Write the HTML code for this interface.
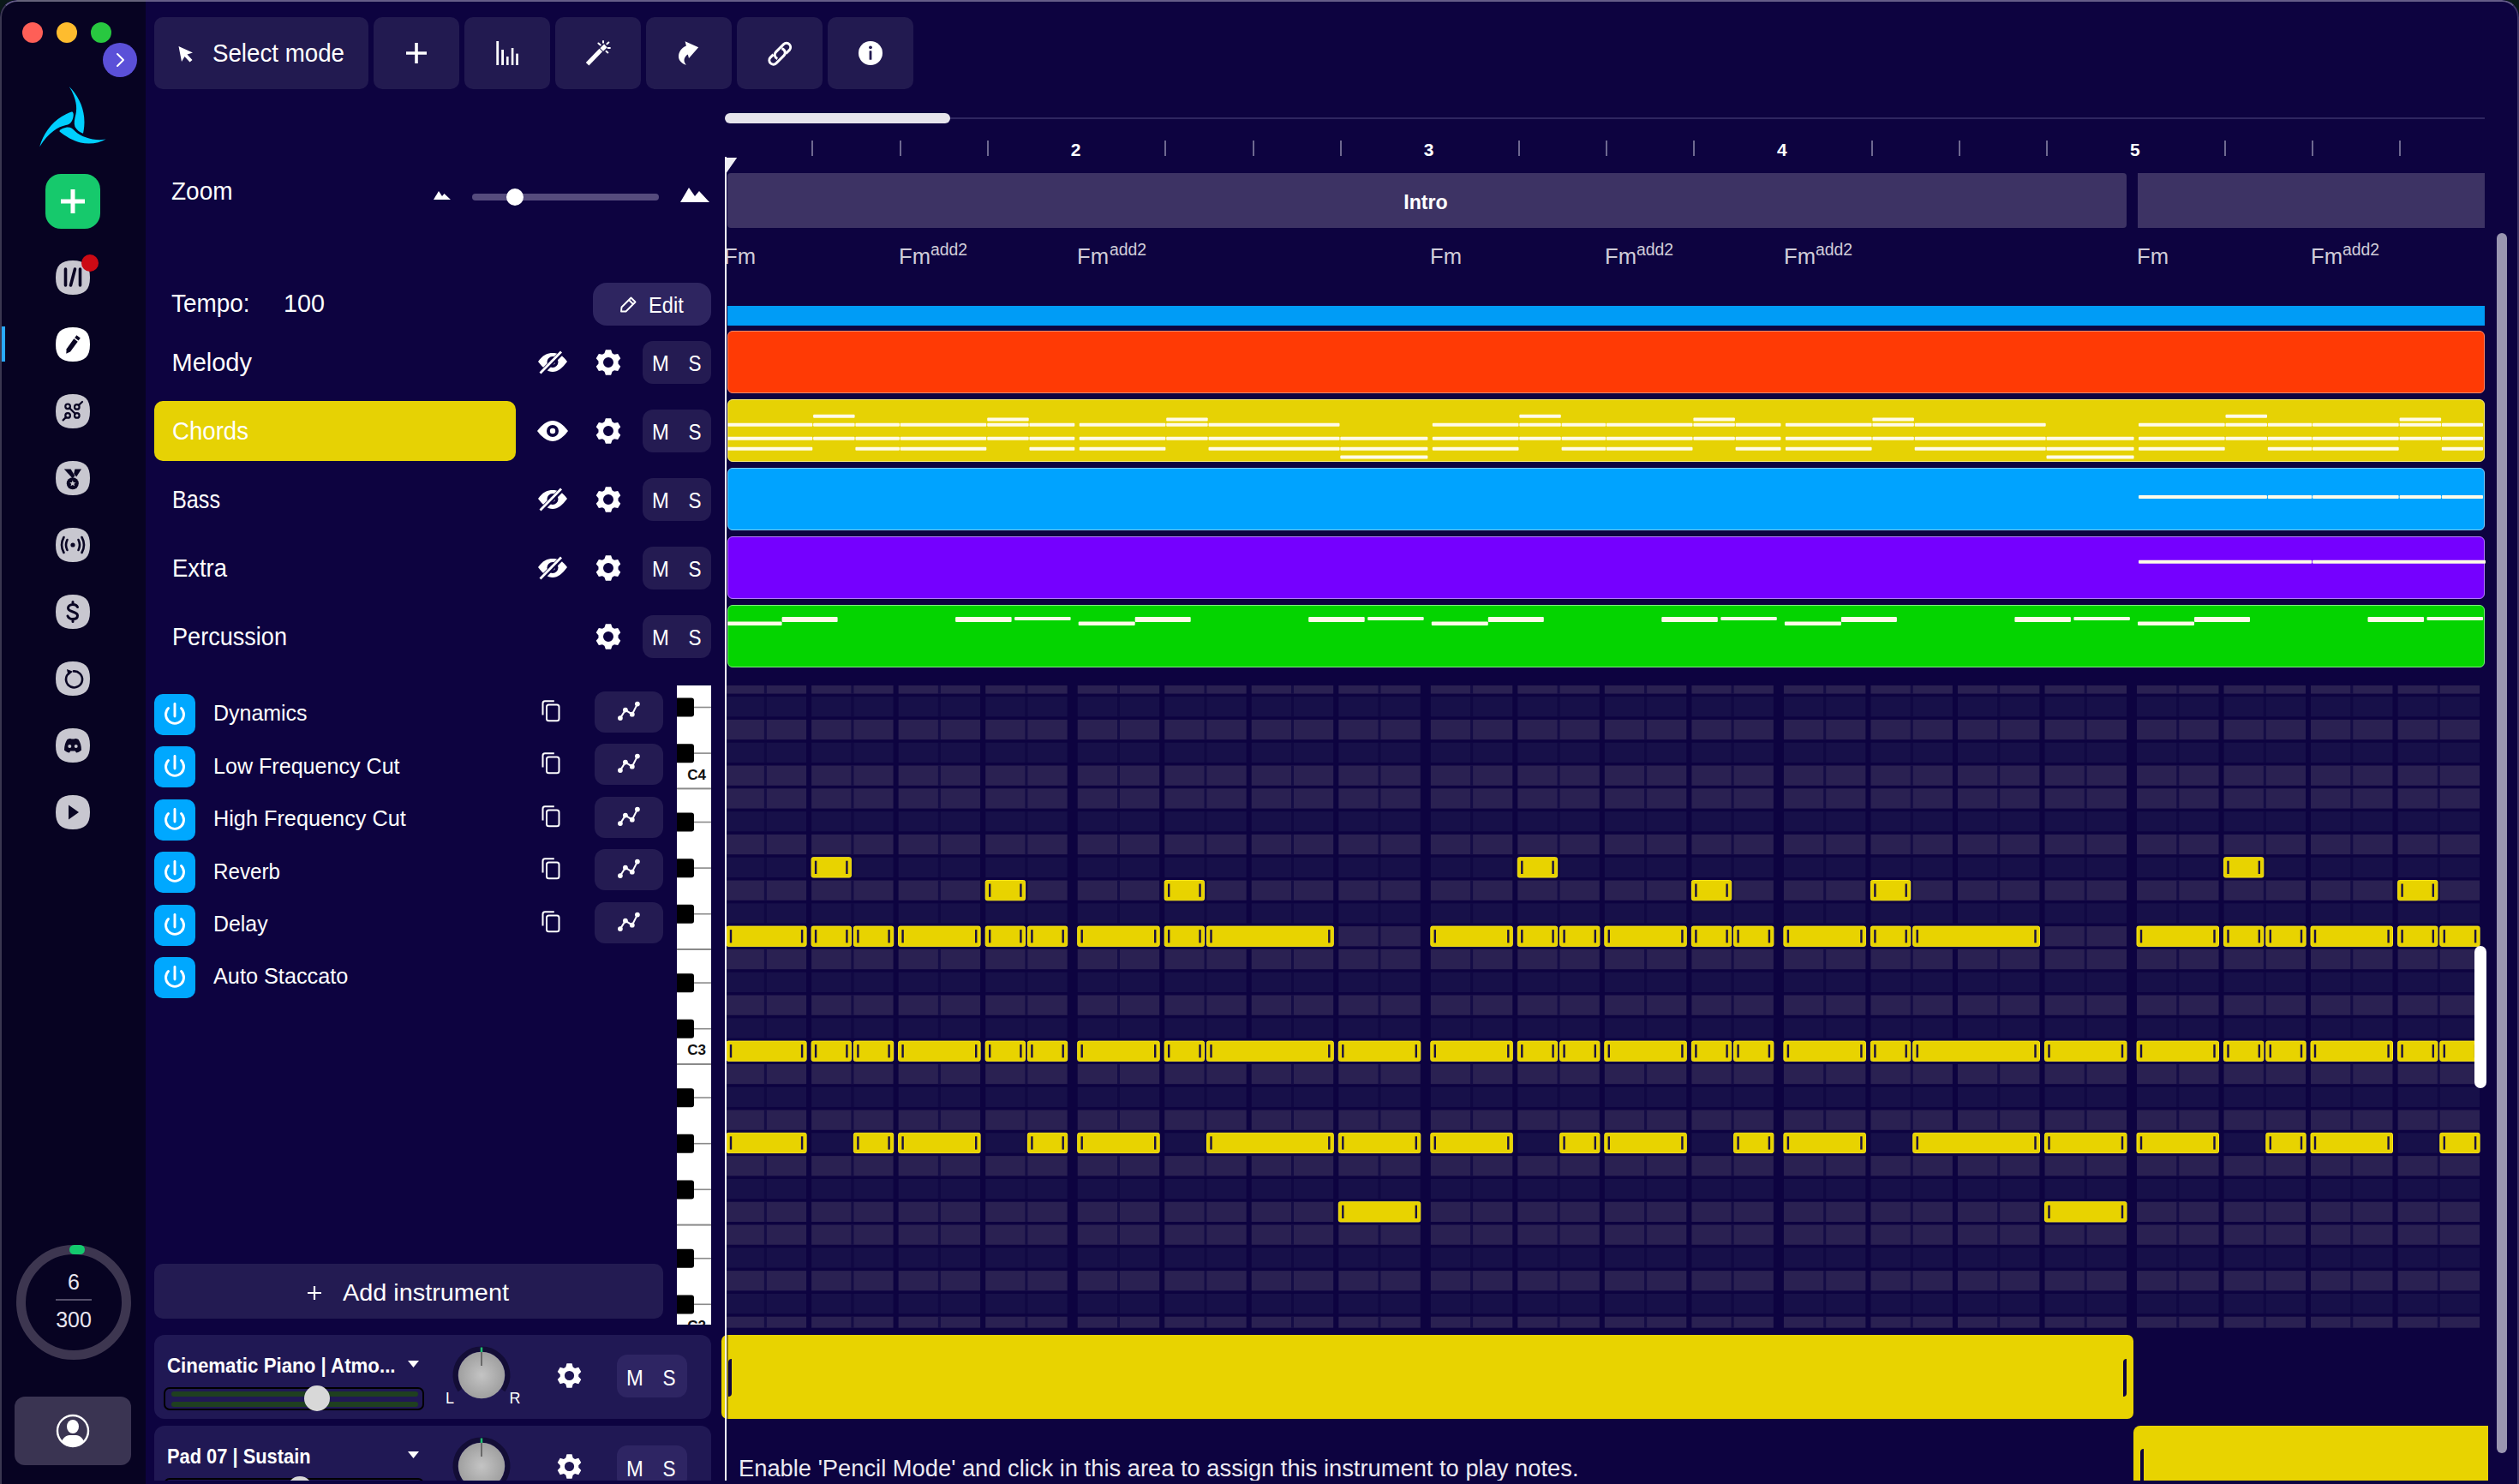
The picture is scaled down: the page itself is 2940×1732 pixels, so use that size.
<!DOCTYPE html>
<html><head><meta charset="utf-8"><style>
html,body{margin:0;padding:0;width:2940px;height:1732px;overflow:hidden;background:#0a1818;}
body{font-family:"Liberation Sans", sans-serif;position:relative;}
#win{position:absolute;left:0;top:0;width:2940px;height:1732px;background:#0d0340;border-radius:20px 20px 0 0;overflow:hidden;}
</style></head><body><div id="win">
<div style="position:absolute;left:0px;top:0px;width:170px;height:1732px;background:#070322;border-radius:0px;"></div><div style="position:absolute;left:26px;top:26px;width:24px;height:24px;background:#fe5f57;border-radius:12px;"></div><div style="position:absolute;left:66px;top:26px;width:24px;height:24px;background:#febc2e;border-radius:12px;"></div><div style="position:absolute;left:106px;top:26px;width:24px;height:24px;background:#28c840;border-radius:12px;"></div><div style="position:absolute;left:120px;top:50px;width:40px;height:40px;background:#5b50d8;border-radius:20px;"></div><svg style="position:absolute;left:120px;top:50px;overflow:visible;" width="40" height="40" viewBox="0 0 40 40"><path d="M17,13 L24,20 L17,27" fill="none" stroke="#fff" stroke-width="2" stroke-linecap="round" stroke-linejoin="round"/></svg><svg style="position:absolute;left:40px;top:95px;overflow:visible;" width="90" height="85" viewBox="0 0 90 85"><g fill="#00cfff"><path d="M40.7,6 C50,15 57,28 58.2,42 C59,50 58,56 57,60.7 C53,59.5 50,57 47.5,53 C46,49 47,44 48.5,38 C50,31 49.5,20 40.7,6 Z"/><path d="M6.3,76.2 C10,62 20,48 32,41 C37,38 42,35.5 44.5,35.5 C46.5,37 46,42 44,46 C42.5,49 40,50.4 37,51 C28,53 17,59 6.3,76.2 Z"/><path d="M83.6,67.6 C76,72 65,74 54,71.5 C45,69 36,64 29.5,58.5 C29,56.5 33,54.5 38,53.5 C42,53 45,55 48,58.5 C55,65 70,70 83.6,67.6 Z"/></g></svg><div style="position:absolute;left:53px;top:203px;width:64px;height:64px;background:#16c96c;border-radius:18px;"></div><svg style="position:absolute;left:53px;top:203px;overflow:visible;" width="64" height="64" viewBox="0 0 64 64"><path d="M32,18 V46 M18,32 H46" stroke="#fff" stroke-width="5"/></svg><svg style="position:absolute;left:65px;top:304px;overflow:visible;" width="40" height="40" viewBox="0 0 40 40"><path d="M20,0 C34,0 40,6 40,20 C40,34 34,40 20,40 C6,40 0,34 0,20 C0,6 6,0 20,0 Z" fill="#c8c7d0"/><path d="M11.5,10 V29 M28.5,10 V29 M22.5,10 L17.5,29" stroke="#0a0624" stroke-width="3.6" stroke-linecap="round"/></svg><svg style="position:absolute;left:65px;top:382px;overflow:visible;" width="40" height="40" viewBox="0 0 40 40"><path d="M20,0 C34,0 40,6 40,20 C40,34 34,40 20,40 C6,40 0,34 0,20 C0,6 6,0 20,0 Z" fill="#ffffff"/><path d="M12.3,30.8 L12.64,25.15 L21.28,13.37 L25.72,16.63 L17.08,28.41 Z" fill="#0a0624"/><path d="M22.18,12.17 L24.38,9.17 L28.82,12.43 L26.62,15.43 Z" fill="#0a0624"/></svg><svg style="position:absolute;left:65px;top:460px;overflow:visible;" width="40" height="40" viewBox="0 0 40 40"><path d="M20,0 C34,0 40,6 40,20 C40,34 34,40 20,40 C6,40 0,34 0,20 C0,6 6,0 20,0 Z" fill="#c8c7d0"/><g fill="none" stroke="#0a0624" stroke-width="2.2" stroke-linecap="round"><circle cx="14.1" cy="14.3" r="2.8"/><circle cx="24.8" cy="14.9" r="2.8"/><circle cx="14.1" cy="24.9" r="2.8"/><circle cx="24.8" cy="24.9" r="2.8"/><path d="M16.1,16.3 L22.8,22.9 M26.8,12.9 L31,9 M12.1,26.9 L8.6,30.4"/></g></svg><svg style="position:absolute;left:65px;top:538px;overflow:visible;" width="40" height="40" viewBox="0 0 40 40"><path d="M20,0 C34,0 40,6 40,20 C40,34 34,40 20,40 C6,40 0,34 0,20 C0,6 6,0 20,0 Z" fill="#c8c7d0"/><path d="M9.8,9.6 H17.6 L22.4,17.4 L19.6,20.2 Z" fill="#0a0624"/><path d="M22.4,9.6 H30 L24.2,18.6 L21.2,15 Z" fill="#0a0624"/><circle cx="19.8" cy="26.2" r="7" fill="#0a0624"/><path d="M19.8,22.6 L20.8,25.1 L23.4,25.2 L21.4,26.8 L22.1,29.3 L19.8,27.9 L17.5,29.3 L18.2,26.8 L16.2,25.2 L18.8,25.1 Z" fill="#c8c7d0"/></svg><svg style="position:absolute;left:65px;top:616px;overflow:visible;" width="40" height="40" viewBox="0 0 40 40"><path d="M20,0 C34,0 40,6 40,20 C40,34 34,40 20,40 C6,40 0,34 0,20 C0,6 6,0 20,0 Z" fill="#c8c7d0"/><g fill="none" stroke="#0a0624" stroke-width="2.6" stroke-linecap="round"><path d="M13.5,14 Q10.5,20 13.5,26 M26.5,14 Q29.5,20 26.5,26 M9.5,11 Q4.5,20 9.5,29 M30.5,11 Q35.5,20 30.5,29"/></g><circle cx="20" cy="20" r="2.6" fill="#0a0624"/></svg><svg style="position:absolute;left:65px;top:694px;overflow:visible;" width="40" height="40" viewBox="0 0 40 40"><path d="M20,0 C34,0 40,6 40,20 C40,34 34,40 20,40 C6,40 0,34 0,20 C0,6 6,0 20,0 Z" fill="#c8c7d0"/><path d="M25.5,14.5 C24.5,12 22.5,11.5 20,11.5 C16.5,11.5 14.5,13.5 14.5,15.8 C14.5,21 25.5,19 25.5,24.5 C25.5,27 23.5,28.5 20,28.5 C17,28.5 15,27.5 14,25 M20,8.5 V11.5 M20,28.5 V31.5" fill="none" stroke="#0a0624" stroke-width="3" stroke-linecap="round"/></svg><svg style="position:absolute;left:65px;top:772px;overflow:visible;" width="40" height="40" viewBox="0 0 40 40"><path d="M20,0 C34,0 40,6 40,20 C40,34 34,40 20,40 C6,40 0,34 0,20 C0,6 6,0 20,0 Z" fill="#c8c7d0"/><path d="M14.5,14.5 A9.5,9.5 0 1 0 20,11.5" fill="none" stroke="#0a0624" stroke-width="2.6"/><path d="M13,9 L20,11.8 L14.5,16.5 Z" fill="#0a0624"/></svg><svg style="position:absolute;left:65px;top:850px;overflow:visible;" width="40" height="40" viewBox="0 0 40 40"><path d="M20,0 C34,0 40,6 40,20 C40,34 34,40 20,40 C6,40 0,34 0,20 C0,6 6,0 20,0 Z" fill="#c8c7d0"/><path d="M10,25.5 C10,20 11.5,16 13.5,13 C15.5,12 17.5,11.5 18.5,12.5 L21.5,12.5 C22.5,11.5 24.5,12 26.5,13 C28.5,16 30,20 30,25.5 C28,27.5 25.5,28.5 24,28.5 L22.8,26.5 L17.2,26.5 L16,28.5 C14.5,28.5 12,27.5 10,25.5 Z" fill="#0a0624"/><circle cx="16.3" cy="21" r="2" fill="#c8c7d0"/><circle cx="23.7" cy="21" r="2" fill="#c8c7d0"/></svg><svg style="position:absolute;left:65px;top:928px;overflow:visible;" width="40" height="40" viewBox="0 0 40 40"><path d="M20,0 C34,0 40,6 40,20 C40,34 34,40 20,40 C6,40 0,34 0,20 C0,6 6,0 20,0 Z" fill="#c8c7d0"/><path d="M15,11.5 L27,20 L15,28.5 Z" fill="#0a0624"/></svg><div style="position:absolute;left:95px;top:297px;width:20px;height:20px;background:#cc0a14;border-radius:10px;"></div><div style="position:absolute;left:0px;top:381px;width:6px;height:41px;background:#2aa9ff;border-radius:0px;"></div><svg style="position:absolute;left:19px;top:1453px;overflow:visible;" width="134" height="134" viewBox="0 0 134 134"><circle cx="67" cy="67" r="61.5" fill="none" stroke="#3d3650" stroke-width="11"/><rect x="62" y="0" width="18" height="11" rx="5.5" fill="#14c96e"/></svg><div style="position:absolute;left:-414px;width:1000px;text-align:center;top:1483.84px;font-size:25px;line-height:25px;height:25px;color:#e8e6f0;font-weight:400;white-space:nowrap;">6</div><div style="position:absolute;left:65px;top:1516px;width:42px;height:2px;background:#55506a;border-radius:0px;"></div><div style="position:absolute;left:-414px;width:1000px;text-align:center;top:1528.34px;font-size:25px;line-height:25px;height:25px;color:#e8e6f0;font-weight:400;white-space:nowrap;">300</div><div style="position:absolute;left:17px;top:1630px;width:136px;height:80px;background:#3a3452;border-radius:12px;"></div><svg style="position:absolute;left:65px;top:1650px;overflow:visible;" width="40" height="40" viewBox="0 0 40 40"><circle cx="20" cy="20" r="18" fill="none" stroke="#fff" stroke-width="2.4"/><ellipse cx="20" cy="15" rx="7" ry="8" fill="#fff"/><path d="M7,32 C10,26 14,24.5 20,25 C26,24.5 30,26 33,32 C29,36.5 25,38 20,38 C15,38 11,36.5 7,32 Z" fill="#fff"/></svg><div style="position:absolute;left:180px;top:20px;width:250px;height:84px;background:#221a50;border-radius:10px;"></div><svg style="position:absolute;left:206px;top:52px;overflow:visible;" width="22" height="24" viewBox="0 0 22 24"><path d="M2.5,2 L19,9.5 L12.5,11.5 L18.5,18 L15.5,20.5 L9.5,14 L6,20 Z" fill="#fff"/></svg><div style="position:absolute;left:248px;top:48.15px;font-size:29px;line-height:29px;height:29px;color:#fff;font-weight:400;white-space:nowrap;transform:scaleX(0.9550);transform-origin:left 0;">Select mode</div><div style="position:absolute;left:436px;top:20px;width:100px;height:84px;background:#221a50;border-radius:10px;"></div><div style="position:absolute;left:542px;top:20px;width:100px;height:84px;background:#221a50;border-radius:10px;"></div><div style="position:absolute;left:648px;top:20px;width:100px;height:84px;background:#221a50;border-radius:10px;"></div><div style="position:absolute;left:754px;top:20px;width:100px;height:84px;background:#221a50;border-radius:10px;"></div><div style="position:absolute;left:860px;top:20px;width:100px;height:84px;background:#221a50;border-radius:10px;"></div><div style="position:absolute;left:966px;top:20px;width:100px;height:84px;background:#221a50;border-radius:10px;"></div><svg style="position:absolute;left:436px;top:20px;overflow:visible;" width="100" height="84" viewBox="0 0 100 84"><path d="M50,30 V54 M38,42 H62" stroke="#fff" stroke-width="3.6"/></svg><svg style="position:absolute;left:542px;top:20px;overflow:visible;" width="100" height="84" viewBox="0 0 100 84"><g fill="#fff"><rect x="37.3" y="28" width="2.8" height="28"/><rect x="43.2" y="38" width="2.8" height="18"/><rect x="49" y="46" width="2.6" height="10"/><rect x="54.8" y="36" width="2.6" height="20"/><rect x="60.2" y="42.6" width="2.7" height="13.4"/></g></svg><svg style="position:absolute;left:648px;top:20px;overflow:visible;" width="100" height="84" viewBox="0 0 100 84"><path d="M37.6,54.7 L53.3,38.5" stroke="#fff" stroke-width="5"/><path d="M54.2,38 L58.9,33.3" stroke="#fff" stroke-width="5.2"/><g stroke="#fff" stroke-width="2" stroke-linecap="round"><path d="M56,27.9 V29.8 M50.4,30.5 L52.7,32.5 M60.4,31.3 L62.4,29.5 M61.6,36 H63.9 M59.5,39.8 L61.4,41.4"/></g></svg><svg style="position:absolute;left:754px;top:20px;overflow:visible;" width="100" height="84" viewBox="0 0 100 84"><path d="M61.2,35.3 L45.6,28.3 L46.9,33.4 C41,36 38,40.5 38,46 C38,51 42.5,54.5 46.9,55.7 C43.5,52.5 43.5,47 48.8,43.6 L50,48 Z" fill="#fff"/></svg><svg style="position:absolute;left:860px;top:20px;overflow:visible;" width="100" height="84" viewBox="0 0 100 84"><g fill="none" stroke="#fff" stroke-width="3"><path d="M57.34,42.44 L61.39,38.39 A4.8,4.8 0 0 0 54.61,31.61 L45.61,40.61 A4.8,4.8 0 0 0 47.36,48.51"/><path d="M52.33,36.77 A4.8,4.8 0 0 1 54.89,44.89 L45.89,53.89 A4.8,4.8 0 0 1 39.11,47.11 L42.6,43.6"/></g></svg><svg style="position:absolute;left:966px;top:20px;overflow:visible;" width="100" height="84" viewBox="0 0 100 84"><circle cx="50" cy="42" r="14" fill="#fff"/><rect x="48.6" y="39.3" width="2.8" height="10.5" rx="0.5" fill="#221a50"/><circle cx="50" cy="35.3" r="1.9" fill="#221a50"/></svg><div style="position:absolute;left:200px;top:209.45px;font-size:29px;line-height:29px;height:29px;color:#fff;font-weight:400;white-space:nowrap;transform:scaleX(0.9660);transform-origin:left 0;">Zoom</div><svg style="position:absolute;left:506px;top:221px;overflow:visible;" width="20" height="12" viewBox="0 0 20 12"><path d="M0,12 L6,2 L10,8 L12.5,5 L20,12 Z" fill="#fff"/></svg><div style="position:absolute;left:551px;top:226px;width:218px;height:8px;background:#554b7d;border-radius:4px;"></div><div style="position:absolute;left:591px;top:220px;width:20px;height:20px;background:#fff;border-radius:10px;"></div><svg style="position:absolute;left:794px;top:217px;overflow:visible;" width="34" height="19" viewBox="0 0 34 19"><path d="M0,19 L10,2 L17,12 L22,6 L34,19 Z" fill="#fff"/></svg><div style="position:absolute;left:200px;top:339.85px;font-size:29px;line-height:29px;height:29px;color:#fff;font-weight:400;white-space:nowrap;transform:scaleX(0.9620);transform-origin:left 0;">Tempo:</div><div style="position:absolute;left:330.6px;top:339.85px;font-size:29px;line-height:29px;height:29px;color:#fff;font-weight:400;white-space:nowrap;transform:scaleX(0.9900);transform-origin:left 0;">100</div><div style="position:absolute;left:692px;top:330px;width:138px;height:50px;background:#2e2560;border-radius:16px;"></div><svg style="position:absolute;left:722px;top:345px;overflow:visible;" width="22" height="20" viewBox="0 0 22 20"><path d="M3,18.5 L3.5,13.5 L14.5,2.5 L19.5,7.5 L8.5,18.5 Z M12,5 L17,10" fill="none" stroke="#fff" stroke-width="1.9" stroke-linejoin="round"/></svg><div style="position:absolute;left:757px;top:343.84px;font-size:25px;line-height:25px;height:25px;color:#fff;font-weight:400;white-space:nowrap;transform:scaleX(0.9450);transform-origin:left 0;">Edit</div><div style="position:absolute;left:200.5px;top:409.45px;font-size:29px;line-height:29px;height:29px;color:#fff;font-weight:400;white-space:nowrap;">Melody</div><svg style="position:absolute;left:627px;top:409px;overflow:visible;" width="36" height="28" viewBox="0 0 36 28"><path d="M1,13 C7,5 12,3 18,3 C24,3 29,5 35,13 C29,21 24,25 18,25 C12,25 7,21 1,13 Z" fill="#fff"/><circle cx="18" cy="13.5" r="6.5" fill="#0d0340"/><circle cx="18" cy="13.5" r="3" fill="#fff"/><path d="M4,27 L29,2" stroke="#0d0340" stroke-width="6"/><path d="M3.5,26.5 L28,1.5" stroke="#fff" stroke-width="2.8"/></svg><svg style="position:absolute;left:695px;top:408px;overflow:visible;" width="30" height="30" viewBox="0 0 30 30"><path d="M10.49,4.31 L11.87,0.33 L18.13,0.33 L19.51,4.31 L22.00,5.75 L26.14,4.96 L29.27,10.37 L26.51,13.56 L26.51,16.44 L29.27,19.63 L26.14,25.04 L22.00,24.25 L19.51,25.69 L18.13,29.67 L11.87,29.67 L10.49,25.69 L8.00,24.25 L3.86,25.04 L0.73,19.63 L3.49,16.44 L3.49,13.56 L0.73,10.37 L3.86,4.96 L8.00,5.75 Z M21.00,15.00 A6.0,6.0 0 1 0 9.00,15.00 A6.0,6.0 0 1 0 21.00,15.00 Z" fill="#fff" fill-rule="evenodd"/></svg><div style="position:absolute;left:750px;top:398px;width:80px;height:50px;background:#241b52;border-radius:12px;"></div><div style="position:absolute;left:271px;width:1000px;text-align:center;top:412.34px;font-size:25px;line-height:25px;height:25px;color:#fff;font-weight:400;white-space:nowrap;transform:scaleX(0.9500);transform-origin:center 0;">M</div><div style="position:absolute;left:310.5px;width:1000px;text-align:center;top:412.34px;font-size:25px;line-height:25px;height:25px;color:#fff;font-weight:400;white-space:nowrap;transform:scaleX(0.9000);transform-origin:center 0;">S</div><div style="position:absolute;left:180px;top:468px;width:422px;height:70px;background:#e6d204;border-radius:10px;"></div><div style="position:absolute;left:200.5px;top:489.45px;font-size:29px;line-height:29px;height:29px;color:#fff;font-weight:400;white-space:nowrap;transform:scaleX(0.9520);transform-origin:left 0;">Chords</div><svg style="position:absolute;left:627px;top:491px;overflow:visible;" width="36" height="24" viewBox="0 0 36 24"><path d="M0,12 C6,4 12,0 18,0 C24,0 30,4 36,12 C30,20 24,24 18,24 C12,24 6,20 0,12 Z" fill="#fff"/><circle cx="18" cy="12" r="7" fill="#0d0340"/><circle cx="18" cy="12" r="3.2" fill="#fff"/></svg><svg style="position:absolute;left:695px;top:488px;overflow:visible;" width="30" height="30" viewBox="0 0 30 30"><path d="M10.49,4.31 L11.87,0.33 L18.13,0.33 L19.51,4.31 L22.00,5.75 L26.14,4.96 L29.27,10.37 L26.51,13.56 L26.51,16.44 L29.27,19.63 L26.14,25.04 L22.00,24.25 L19.51,25.69 L18.13,29.67 L11.87,29.67 L10.49,25.69 L8.00,24.25 L3.86,25.04 L0.73,19.63 L3.49,16.44 L3.49,13.56 L0.73,10.37 L3.86,4.96 L8.00,5.75 Z M21.00,15.00 A6.0,6.0 0 1 0 9.00,15.00 A6.0,6.0 0 1 0 21.00,15.00 Z" fill="#fff" fill-rule="evenodd"/></svg><div style="position:absolute;left:750px;top:478px;width:80px;height:50px;background:#241b52;border-radius:12px;"></div><div style="position:absolute;left:271px;width:1000px;text-align:center;top:492.34px;font-size:25px;line-height:25px;height:25px;color:#fff;font-weight:400;white-space:nowrap;transform:scaleX(0.9500);transform-origin:center 0;">M</div><div style="position:absolute;left:310.5px;width:1000px;text-align:center;top:492.34px;font-size:25px;line-height:25px;height:25px;color:#fff;font-weight:400;white-space:nowrap;transform:scaleX(0.9000);transform-origin:center 0;">S</div><div style="position:absolute;left:200.5px;top:569.45px;font-size:29px;line-height:29px;height:29px;color:#fff;font-weight:400;white-space:nowrap;transform:scaleX(0.8700);transform-origin:left 0;">Bass</div><svg style="position:absolute;left:627px;top:569px;overflow:visible;" width="36" height="28" viewBox="0 0 36 28"><path d="M1,13 C7,5 12,3 18,3 C24,3 29,5 35,13 C29,21 24,25 18,25 C12,25 7,21 1,13 Z" fill="#fff"/><circle cx="18" cy="13.5" r="6.5" fill="#0d0340"/><circle cx="18" cy="13.5" r="3" fill="#fff"/><path d="M4,27 L29,2" stroke="#0d0340" stroke-width="6"/><path d="M3.5,26.5 L28,1.5" stroke="#fff" stroke-width="2.8"/></svg><svg style="position:absolute;left:695px;top:568px;overflow:visible;" width="30" height="30" viewBox="0 0 30 30"><path d="M10.49,4.31 L11.87,0.33 L18.13,0.33 L19.51,4.31 L22.00,5.75 L26.14,4.96 L29.27,10.37 L26.51,13.56 L26.51,16.44 L29.27,19.63 L26.14,25.04 L22.00,24.25 L19.51,25.69 L18.13,29.67 L11.87,29.67 L10.49,25.69 L8.00,24.25 L3.86,25.04 L0.73,19.63 L3.49,16.44 L3.49,13.56 L0.73,10.37 L3.86,4.96 L8.00,5.75 Z M21.00,15.00 A6.0,6.0 0 1 0 9.00,15.00 A6.0,6.0 0 1 0 21.00,15.00 Z" fill="#fff" fill-rule="evenodd"/></svg><div style="position:absolute;left:750px;top:558px;width:80px;height:50px;background:#241b52;border-radius:12px;"></div><div style="position:absolute;left:271px;width:1000px;text-align:center;top:572.34px;font-size:25px;line-height:25px;height:25px;color:#fff;font-weight:400;white-space:nowrap;transform:scaleX(0.9500);transform-origin:center 0;">M</div><div style="position:absolute;left:310.5px;width:1000px;text-align:center;top:572.34px;font-size:25px;line-height:25px;height:25px;color:#fff;font-weight:400;white-space:nowrap;transform:scaleX(0.9000);transform-origin:center 0;">S</div><div style="position:absolute;left:200.5px;top:649.45px;font-size:29px;line-height:29px;height:29px;color:#fff;font-weight:400;white-space:nowrap;transform:scaleX(0.9450);transform-origin:left 0;">Extra</div><svg style="position:absolute;left:627px;top:649px;overflow:visible;" width="36" height="28" viewBox="0 0 36 28"><path d="M1,13 C7,5 12,3 18,3 C24,3 29,5 35,13 C29,21 24,25 18,25 C12,25 7,21 1,13 Z" fill="#fff"/><circle cx="18" cy="13.5" r="6.5" fill="#0d0340"/><circle cx="18" cy="13.5" r="3" fill="#fff"/><path d="M4,27 L29,2" stroke="#0d0340" stroke-width="6"/><path d="M3.5,26.5 L28,1.5" stroke="#fff" stroke-width="2.8"/></svg><svg style="position:absolute;left:695px;top:648px;overflow:visible;" width="30" height="30" viewBox="0 0 30 30"><path d="M10.49,4.31 L11.87,0.33 L18.13,0.33 L19.51,4.31 L22.00,5.75 L26.14,4.96 L29.27,10.37 L26.51,13.56 L26.51,16.44 L29.27,19.63 L26.14,25.04 L22.00,24.25 L19.51,25.69 L18.13,29.67 L11.87,29.67 L10.49,25.69 L8.00,24.25 L3.86,25.04 L0.73,19.63 L3.49,16.44 L3.49,13.56 L0.73,10.37 L3.86,4.96 L8.00,5.75 Z M21.00,15.00 A6.0,6.0 0 1 0 9.00,15.00 A6.0,6.0 0 1 0 21.00,15.00 Z" fill="#fff" fill-rule="evenodd"/></svg><div style="position:absolute;left:750px;top:638px;width:80px;height:50px;background:#241b52;border-radius:12px;"></div><div style="position:absolute;left:271px;width:1000px;text-align:center;top:652.34px;font-size:25px;line-height:25px;height:25px;color:#fff;font-weight:400;white-space:nowrap;transform:scaleX(0.9500);transform-origin:center 0;">M</div><div style="position:absolute;left:310.5px;width:1000px;text-align:center;top:652.34px;font-size:25px;line-height:25px;height:25px;color:#fff;font-weight:400;white-space:nowrap;transform:scaleX(0.9000);transform-origin:center 0;">S</div><div style="position:absolute;left:200.5px;top:729.45px;font-size:29px;line-height:29px;height:29px;color:#fff;font-weight:400;white-space:nowrap;transform:scaleX(0.9340);transform-origin:left 0;">Percussion</div><svg style="position:absolute;left:695px;top:728px;overflow:visible;" width="30" height="30" viewBox="0 0 30 30"><path d="M10.49,4.31 L11.87,0.33 L18.13,0.33 L19.51,4.31 L22.00,5.75 L26.14,4.96 L29.27,10.37 L26.51,13.56 L26.51,16.44 L29.27,19.63 L26.14,25.04 L22.00,24.25 L19.51,25.69 L18.13,29.67 L11.87,29.67 L10.49,25.69 L8.00,24.25 L3.86,25.04 L0.73,19.63 L3.49,16.44 L3.49,13.56 L0.73,10.37 L3.86,4.96 L8.00,5.75 Z M21.00,15.00 A6.0,6.0 0 1 0 9.00,15.00 A6.0,6.0 0 1 0 21.00,15.00 Z" fill="#fff" fill-rule="evenodd"/></svg><div style="position:absolute;left:750px;top:718px;width:80px;height:50px;background:#241b52;border-radius:12px;"></div><div style="position:absolute;left:271px;width:1000px;text-align:center;top:732.34px;font-size:25px;line-height:25px;height:25px;color:#fff;font-weight:400;white-space:nowrap;transform:scaleX(0.9500);transform-origin:center 0;">M</div><div style="position:absolute;left:310.5px;width:1000px;text-align:center;top:732.34px;font-size:25px;line-height:25px;height:25px;color:#fff;font-weight:400;white-space:nowrap;transform:scaleX(0.9000);transform-origin:center 0;">S</div><div style="position:absolute;left:180px;top:810.0px;width:48px;height:48px;background:#00a8ff;border-radius:10px;"></div><svg style="position:absolute;left:180px;top:810.0px;overflow:visible;" width="48" height="48" viewBox="0 0 48 48"><path d="M16.5,16.5 A10.5,10.5 0 1 0 31.5,16.5" fill="none" stroke="#fff" stroke-width="2.9" stroke-linecap="round"/><path d="M24,11.5 V26" stroke="#fff" stroke-width="2.9" stroke-linecap="round"/></svg><div style="position:absolute;left:249px;top:819.49px;font-size:26px;line-height:26px;height:26px;color:#fff;font-weight:400;white-space:nowrap;transform:scaleX(0.9600);transform-origin:left 0;">Dynamics</div><svg style="position:absolute;left:630px;top:816.0px;overflow:visible;" width="26" height="28" viewBox="0 0 26 28"><path d="M3.5,18.5 V5 C3.5,3.3 4.6,2.3 6,2.3 H16.8" fill="none" stroke="#fff" stroke-width="2"/><rect x="8" y="6.4" width="14.5" height="18.8" rx="2.5" fill="none" stroke="#fff" stroke-width="2"/></svg><div style="position:absolute;left:694px;top:807.0px;width:80px;height:48px;background:#241b52;border-radius:12px;"></div><svg style="position:absolute;left:694px;top:807.0px;overflow:visible;" width="80" height="48" viewBox="0 0 80 48"><path d="M29.9,31.1 L35.9,21.6 L43.8,26.7 L49.9,14.6" fill="none" stroke="#fff" stroke-width="2"/><g fill="#fff"><circle cx="29.9" cy="31.1" r="2.9"/><circle cx="35.9" cy="21.6" r="2.9"/><circle cx="43.8" cy="26.7" r="2.9"/><circle cx="49.9" cy="14.6" r="2.9"/></g></svg><div style="position:absolute;left:180px;top:871.4px;width:48px;height:48px;background:#00a8ff;border-radius:10px;"></div><svg style="position:absolute;left:180px;top:871.4px;overflow:visible;" width="48" height="48" viewBox="0 0 48 48"><path d="M16.5,16.5 A10.5,10.5 0 1 0 31.5,16.5" fill="none" stroke="#fff" stroke-width="2.9" stroke-linecap="round"/><path d="M24,11.5 V26" stroke="#fff" stroke-width="2.9" stroke-linecap="round"/></svg><div style="position:absolute;left:249px;top:880.89px;font-size:26px;line-height:26px;height:26px;color:#fff;font-weight:400;white-space:nowrap;transform:scaleX(0.9650);transform-origin:left 0;">Low Frequency Cut</div><svg style="position:absolute;left:630px;top:877.4px;overflow:visible;" width="26" height="28" viewBox="0 0 26 28"><path d="M3.5,18.5 V5 C3.5,3.3 4.6,2.3 6,2.3 H16.8" fill="none" stroke="#fff" stroke-width="2"/><rect x="8" y="6.4" width="14.5" height="18.8" rx="2.5" fill="none" stroke="#fff" stroke-width="2"/></svg><div style="position:absolute;left:694px;top:868.4px;width:80px;height:48px;background:#241b52;border-radius:12px;"></div><svg style="position:absolute;left:694px;top:868.4px;overflow:visible;" width="80" height="48" viewBox="0 0 80 48"><path d="M29.9,31.1 L35.9,21.6 L43.8,26.7 L49.9,14.6" fill="none" stroke="#fff" stroke-width="2"/><g fill="#fff"><circle cx="29.9" cy="31.1" r="2.9"/><circle cx="35.9" cy="21.6" r="2.9"/><circle cx="43.8" cy="26.7" r="2.9"/><circle cx="49.9" cy="14.6" r="2.9"/></g></svg><div style="position:absolute;left:180px;top:932.8px;width:48px;height:48px;background:#00a8ff;border-radius:10px;"></div><svg style="position:absolute;left:180px;top:932.8px;overflow:visible;" width="48" height="48" viewBox="0 0 48 48"><path d="M16.5,16.5 A10.5,10.5 0 1 0 31.5,16.5" fill="none" stroke="#fff" stroke-width="2.9" stroke-linecap="round"/><path d="M24,11.5 V26" stroke="#fff" stroke-width="2.9" stroke-linecap="round"/></svg><div style="position:absolute;left:249px;top:942.29px;font-size:26px;line-height:26px;height:26px;color:#fff;font-weight:400;white-space:nowrap;transform:scaleX(0.9720);transform-origin:left 0;">High Frequency Cut</div><svg style="position:absolute;left:630px;top:938.8px;overflow:visible;" width="26" height="28" viewBox="0 0 26 28"><path d="M3.5,18.5 V5 C3.5,3.3 4.6,2.3 6,2.3 H16.8" fill="none" stroke="#fff" stroke-width="2"/><rect x="8" y="6.4" width="14.5" height="18.8" rx="2.5" fill="none" stroke="#fff" stroke-width="2"/></svg><div style="position:absolute;left:694px;top:929.8px;width:80px;height:48px;background:#241b52;border-radius:12px;"></div><svg style="position:absolute;left:694px;top:929.8px;overflow:visible;" width="80" height="48" viewBox="0 0 80 48"><path d="M29.9,31.1 L35.9,21.6 L43.8,26.7 L49.9,14.6" fill="none" stroke="#fff" stroke-width="2"/><g fill="#fff"><circle cx="29.9" cy="31.1" r="2.9"/><circle cx="35.9" cy="21.6" r="2.9"/><circle cx="43.8" cy="26.7" r="2.9"/><circle cx="49.9" cy="14.6" r="2.9"/></g></svg><div style="position:absolute;left:180px;top:994.2px;width:48px;height:48px;background:#00a8ff;border-radius:10px;"></div><svg style="position:absolute;left:180px;top:994.2px;overflow:visible;" width="48" height="48" viewBox="0 0 48 48"><path d="M16.5,16.5 A10.5,10.5 0 1 0 31.5,16.5" fill="none" stroke="#fff" stroke-width="2.9" stroke-linecap="round"/><path d="M24,11.5 V26" stroke="#fff" stroke-width="2.9" stroke-linecap="round"/></svg><div style="position:absolute;left:249px;top:1003.69px;font-size:26px;line-height:26px;height:26px;color:#fff;font-weight:400;white-space:nowrap;transform:scaleX(0.9300);transform-origin:left 0;">Reverb</div><svg style="position:absolute;left:630px;top:1000.2px;overflow:visible;" width="26" height="28" viewBox="0 0 26 28"><path d="M3.5,18.5 V5 C3.5,3.3 4.6,2.3 6,2.3 H16.8" fill="none" stroke="#fff" stroke-width="2"/><rect x="8" y="6.4" width="14.5" height="18.8" rx="2.5" fill="none" stroke="#fff" stroke-width="2"/></svg><div style="position:absolute;left:694px;top:991.2px;width:80px;height:48px;background:#241b52;border-radius:12px;"></div><svg style="position:absolute;left:694px;top:991.2px;overflow:visible;" width="80" height="48" viewBox="0 0 80 48"><path d="M29.9,31.1 L35.9,21.6 L43.8,26.7 L49.9,14.6" fill="none" stroke="#fff" stroke-width="2"/><g fill="#fff"><circle cx="29.9" cy="31.1" r="2.9"/><circle cx="35.9" cy="21.6" r="2.9"/><circle cx="43.8" cy="26.7" r="2.9"/><circle cx="49.9" cy="14.6" r="2.9"/></g></svg><div style="position:absolute;left:180px;top:1055.6px;width:48px;height:48px;background:#00a8ff;border-radius:10px;"></div><svg style="position:absolute;left:180px;top:1055.6px;overflow:visible;" width="48" height="48" viewBox="0 0 48 48"><path d="M16.5,16.5 A10.5,10.5 0 1 0 31.5,16.5" fill="none" stroke="#fff" stroke-width="2.9" stroke-linecap="round"/><path d="M24,11.5 V26" stroke="#fff" stroke-width="2.9" stroke-linecap="round"/></svg><div style="position:absolute;left:249px;top:1065.09px;font-size:26px;line-height:26px;height:26px;color:#fff;font-weight:400;white-space:nowrap;transform:scaleX(0.9580);transform-origin:left 0;">Delay</div><svg style="position:absolute;left:630px;top:1061.6px;overflow:visible;" width="26" height="28" viewBox="0 0 26 28"><path d="M3.5,18.5 V5 C3.5,3.3 4.6,2.3 6,2.3 H16.8" fill="none" stroke="#fff" stroke-width="2"/><rect x="8" y="6.4" width="14.5" height="18.8" rx="2.5" fill="none" stroke="#fff" stroke-width="2"/></svg><div style="position:absolute;left:694px;top:1052.6px;width:80px;height:48px;background:#241b52;border-radius:12px;"></div><svg style="position:absolute;left:694px;top:1052.6px;overflow:visible;" width="80" height="48" viewBox="0 0 80 48"><path d="M29.9,31.1 L35.9,21.6 L43.8,26.7 L49.9,14.6" fill="none" stroke="#fff" stroke-width="2"/><g fill="#fff"><circle cx="29.9" cy="31.1" r="2.9"/><circle cx="35.9" cy="21.6" r="2.9"/><circle cx="43.8" cy="26.7" r="2.9"/><circle cx="49.9" cy="14.6" r="2.9"/></g></svg><div style="position:absolute;left:180px;top:1117.0px;width:48px;height:48px;background:#00a8ff;border-radius:10px;"></div><svg style="position:absolute;left:180px;top:1117.0px;overflow:visible;" width="48" height="48" viewBox="0 0 48 48"><path d="M16.5,16.5 A10.5,10.5 0 1 0 31.5,16.5" fill="none" stroke="#fff" stroke-width="2.9" stroke-linecap="round"/><path d="M24,11.5 V26" stroke="#fff" stroke-width="2.9" stroke-linecap="round"/></svg><div style="position:absolute;left:249px;top:1126.49px;font-size:26px;line-height:26px;height:26px;color:#fff;font-weight:400;white-space:nowrap;transform:scaleX(0.9720);transform-origin:left 0;">Auto Staccato</div><div style="position:absolute;left:180px;top:1475px;width:594px;height:64px;background:#231b52;border-radius:10px;"></div><svg style="position:absolute;left:355px;top:1497px;overflow:visible;" width="24" height="24" viewBox="0 0 24 24"><path d="M12,4 V20 M4,12 H20" stroke="#fff" stroke-width="2.2"/></svg><div style="position:absolute;left:400px;top:1495.30px;font-size:28px;line-height:28px;height:28px;color:#fff;font-weight:400;white-space:nowrap;transform:scaleX(1.0300);transform-origin:left 0;">Add instrument</div><div style="position:absolute;left:180px;top:1558px;width:650px;height:98px;background:#201854;border-radius:12px;"></div><div style="position:absolute;left:195px;top:1582.18px;font-size:24px;line-height:24px;height:24px;color:#fff;font-weight:700;white-space:nowrap;transform:scaleX(0.9280);transform-origin:left 0;">Cinematic Piano | Atmo...</div><svg style="position:absolute;left:476px;top:1588px;overflow:visible;" width="13" height="8" viewBox="0 0 13 8"><path d="M0,0 H13 L6.5,8 Z" fill="#fff"/></svg><div style="position:absolute;left:191px;top:1619px;width:304px;height:27px;background:transparent;border-radius:7px;box-sizing:border-box;border:2.5px solid #000;"></div><div style="position:absolute;left:200px;top:1624px;width:288px;height:6px;background:#1f3f20;border-radius:3px;"></div><div style="position:absolute;left:200px;top:1636px;width:288px;height:6px;background:#1f3f20;border-radius:3px;"></div><div style="position:absolute;left:355px;top:1617px;width:30px;height:30px;background:#d8d8d8;border-radius:15px;"></div><svg style="position:absolute;left:527px;top:1569.6px;overflow:visible;" width="70" height="70" viewBox="0 0 70 70"><path d="M10.02,52.5 A30.5,30.5 0 1 1 59.98,52.5" fill="none" stroke="#130d36" stroke-width="6"/><defs><radialGradient id="kg" cx="50%" cy="50%" r="55%"><stop offset="0" stop-color="#c4c4c4"/><stop offset="1" stop-color="#9c9c9c"/></radialGradient></defs><circle cx="35" cy="35" r="27.2" fill="url(#kg)"/><path d="M35,7 V24" stroke="#6a6a6a" stroke-width="2"/><path d="M35,2.5 V8" stroke="#1fbf70" stroke-width="2.5"/></svg><div style="position:absolute;left:25px;width:1000px;text-align:center;top:1622.76px;font-size:18px;line-height:18px;height:18px;color:#fff;font-weight:400;white-space:nowrap;">L</div><div style="position:absolute;left:101px;width:1000px;text-align:center;top:1622.76px;font-size:18px;line-height:18px;height:18px;color:#fff;font-weight:400;white-space:nowrap;">R</div><svg style="position:absolute;left:650px;top:1591px;overflow:visible;" width="29" height="29" viewBox="0 0 29 29"><path d="M10.30,4.55 L11.48,0.32 L17.52,0.32 L18.70,4.55 L21.02,5.89 L25.27,4.79 L28.29,10.03 L25.22,13.16 L25.22,15.84 L28.29,18.97 L25.27,24.21 L21.02,23.11 L18.70,24.45 L17.52,28.68 L11.48,28.68 L10.30,24.45 L7.98,23.11 L3.73,24.21 L0.71,18.97 L3.78,15.84 L3.78,13.16 L0.71,10.03 L3.73,4.79 L7.98,5.89 Z M20.10,14.50 A5.6,5.6 0 1 0 8.90,14.50 A5.6,5.6 0 1 0 20.10,14.50 Z" fill="#fff" fill-rule="evenodd"/></svg><div style="position:absolute;left:720px;top:1581px;width:82px;height:50px;background:#2e2563;border-radius:12px;"></div><div style="position:absolute;left:241px;width:1000px;text-align:center;top:1595.84px;font-size:25px;line-height:25px;height:25px;color:#fff;font-weight:400;white-space:nowrap;transform:scaleX(0.9500);transform-origin:center 0;">M</div><div style="position:absolute;left:281px;width:1000px;text-align:center;top:1595.84px;font-size:25px;line-height:25px;height:25px;color:#fff;font-weight:400;white-space:nowrap;transform:scaleX(0.9000);transform-origin:center 0;">S</div><div style="position:absolute;left:180px;top:1664px;width:650px;height:98px;background:#201854;border-radius:12px;"></div><div style="position:absolute;left:195px;top:1688.18px;font-size:24px;line-height:24px;height:24px;color:#fff;font-weight:700;white-space:nowrap;transform:scaleX(0.9100);transform-origin:left 0;">Pad 07 | Sustain</div><svg style="position:absolute;left:476px;top:1694px;overflow:visible;" width="13" height="8" viewBox="0 0 13 8"><path d="M0,0 H13 L6.5,8 Z" fill="#fff"/></svg><div style="position:absolute;left:191px;top:1725px;width:304px;height:27px;background:transparent;border-radius:7px;box-sizing:border-box;border:2.5px solid #000;"></div><div style="position:absolute;left:200px;top:1730px;width:288px;height:6px;background:#1f3f20;border-radius:3px;"></div><div style="position:absolute;left:200px;top:1742px;width:288px;height:6px;background:#1f3f20;border-radius:3px;"></div><div style="position:absolute;left:335px;top:1723px;width:30px;height:30px;background:#d8d8d8;border-radius:15px;"></div><svg style="position:absolute;left:527px;top:1675.6px;overflow:visible;" width="70" height="70" viewBox="0 0 70 70"><path d="M10.02,52.5 A30.5,30.5 0 1 1 59.98,52.5" fill="none" stroke="#130d36" stroke-width="6"/><defs><radialGradient id="kg" cx="50%" cy="50%" r="55%"><stop offset="0" stop-color="#c4c4c4"/><stop offset="1" stop-color="#9c9c9c"/></radialGradient></defs><circle cx="35" cy="35" r="27.2" fill="url(#kg)"/><path d="M35,7 V24" stroke="#6a6a6a" stroke-width="2"/><path d="M35,2.5 V8" stroke="#1fbf70" stroke-width="2.5"/></svg><div style="position:absolute;left:25px;width:1000px;text-align:center;top:1728.76px;font-size:18px;line-height:18px;height:18px;color:#fff;font-weight:400;white-space:nowrap;">L</div><div style="position:absolute;left:101px;width:1000px;text-align:center;top:1728.76px;font-size:18px;line-height:18px;height:18px;color:#fff;font-weight:400;white-space:nowrap;">R</div><svg style="position:absolute;left:650px;top:1697px;overflow:visible;" width="29" height="29" viewBox="0 0 29 29"><path d="M10.30,4.55 L11.48,0.32 L17.52,0.32 L18.70,4.55 L21.02,5.89 L25.27,4.79 L28.29,10.03 L25.22,13.16 L25.22,15.84 L28.29,18.97 L25.27,24.21 L21.02,23.11 L18.70,24.45 L17.52,28.68 L11.48,28.68 L10.30,24.45 L7.98,23.11 L3.73,24.21 L0.71,18.97 L3.78,15.84 L3.78,13.16 L0.71,10.03 L3.73,4.79 L7.98,5.89 Z M20.10,14.50 A5.6,5.6 0 1 0 8.90,14.50 A5.6,5.6 0 1 0 20.10,14.50 Z" fill="#fff" fill-rule="evenodd"/></svg><div style="position:absolute;left:720px;top:1687px;width:82px;height:50px;background:#2e2563;border-radius:12px;"></div><div style="position:absolute;left:241px;width:1000px;text-align:center;top:1701.84px;font-size:25px;line-height:25px;height:25px;color:#fff;font-weight:400;white-space:nowrap;transform:scaleX(0.9500);transform-origin:center 0;">M</div><div style="position:absolute;left:281px;width:1000px;text-align:center;top:1701.84px;font-size:25px;line-height:25px;height:25px;color:#fff;font-weight:400;white-space:nowrap;transform:scaleX(0.9000);transform-origin:center 0;">S</div><div style="position:absolute;left:170px;top:1728px;width:672px;height:4px;background:#0d0340;border-radius:0px;"></div><div style="position:absolute;left:1100px;top:137px;width:1800px;height:2px;background:#2e2660;border-radius:0px;"></div><div style="position:absolute;left:846px;top:132px;width:263px;height:12px;background:#e6e4ec;border-radius:6px;"></div><div style="position:absolute;left:947.3px;top:164px;width:2px;height:18px;background:#6e6890;border-radius:0px;"></div><div style="position:absolute;left:1049.6px;top:164px;width:2px;height:18px;background:#6e6890;border-radius:0px;"></div><div style="position:absolute;left:1151.9px;top:164px;width:2px;height:18px;background:#6e6890;border-radius:0px;"></div><div style="position:absolute;left:755.5999999999999px;width:1000px;text-align:center;top:164.22px;font-size:21px;line-height:21px;height:21px;color:#fff;font-weight:700;white-space:nowrap;">2</div><div style="position:absolute;left:1359.4px;top:164px;width:2px;height:18px;background:#6e6890;border-radius:0px;"></div><div style="position:absolute;left:1461.7px;top:164px;width:2px;height:18px;background:#6e6890;border-radius:0px;"></div><div style="position:absolute;left:1564.0px;top:164px;width:2px;height:18px;background:#6e6890;border-radius:0px;"></div><div style="position:absolute;left:1167.7px;width:1000px;text-align:center;top:164.22px;font-size:21px;line-height:21px;height:21px;color:#fff;font-weight:700;white-space:nowrap;">3</div><div style="position:absolute;left:1771.5px;top:164px;width:2px;height:18px;background:#6e6890;border-radius:0px;"></div><div style="position:absolute;left:1873.8px;top:164px;width:2px;height:18px;background:#6e6890;border-radius:0px;"></div><div style="position:absolute;left:1976.1px;top:164px;width:2px;height:18px;background:#6e6890;border-radius:0px;"></div><div style="position:absolute;left:1579.8000000000002px;width:1000px;text-align:center;top:164.22px;font-size:21px;line-height:21px;height:21px;color:#fff;font-weight:700;white-space:nowrap;">4</div><div style="position:absolute;left:2183.6px;top:164px;width:2px;height:18px;background:#6e6890;border-radius:0px;"></div><div style="position:absolute;left:2285.9px;top:164px;width:2px;height:18px;background:#6e6890;border-radius:0px;"></div><div style="position:absolute;left:2388.2px;top:164px;width:2px;height:18px;background:#6e6890;border-radius:0px;"></div><div style="position:absolute;left:1991.9px;width:1000px;text-align:center;top:164.22px;font-size:21px;line-height:21px;height:21px;color:#fff;font-weight:700;white-space:nowrap;">5</div><div style="position:absolute;left:2595.7px;top:164px;width:2px;height:18px;background:#6e6890;border-radius:0px;"></div><div style="position:absolute;left:2698.0px;top:164px;width:2px;height:18px;background:#6e6890;border-radius:0px;"></div><div style="position:absolute;left:2800.3px;top:164px;width:2px;height:18px;background:#6e6890;border-radius:0px;"></div><svg style="position:absolute;left:846px;top:184px;overflow:visible;" width="16" height="20" viewBox="0 0 16 20"><path d="M0,0 H14.2 L2,17.5 V0 Z" fill="#efeef3"/></svg><div style="position:absolute;left:849px;top:202px;width:1633px;height:64px;background:#3d3364;border-radius:4px;"></div><div style="position:absolute;left:2494.5px;top:202px;width:405.5px;height:64px;background:#3d3364;border-radius:5px 0 0 5pxpx;"></div><div style="position:absolute;left:1164px;width:1000px;text-align:center;top:223.88px;font-size:24px;line-height:24px;height:24px;color:#fff;font-weight:700;white-space:nowrap;transform:scaleX(0.9650);transform-origin:center 0;">Intro</div><div style="position:absolute;left:845.2px;top:286.49px;font-size:26px;line-height:26px;height:26px;color:#d0cdd9;font-weight:400;white-space:nowrap;transform:scaleX(0.9850);transform-origin:left 0;">Fm</div><div style="position:absolute;left:1048.7px;top:286.49px;font-size:26px;line-height:26px;height:26px;color:#d0cdd9;font-weight:400;white-space:nowrap;transform:scaleX(0.9850);transform-origin:left 0;">Fm</div><div style="position:absolute;left:1085.9px;top:280.97px;font-size:20px;line-height:20px;height:20px;color:#d0cdd9;font-weight:400;white-space:nowrap;transform:scaleX(0.9700);transform-origin:left 0;">add2</div><div style="position:absolute;left:1257.3000000000002px;top:286.49px;font-size:26px;line-height:26px;height:26px;color:#d0cdd9;font-weight:400;white-space:nowrap;transform:scaleX(0.9850);transform-origin:left 0;">Fm</div><div style="position:absolute;left:1294.5000000000002px;top:280.97px;font-size:20px;line-height:20px;height:20px;color:#d0cdd9;font-weight:400;white-space:nowrap;transform:scaleX(0.9700);transform-origin:left 0;">add2</div><div style="position:absolute;left:1669.4px;top:286.49px;font-size:26px;line-height:26px;height:26px;color:#d0cdd9;font-weight:400;white-space:nowrap;transform:scaleX(0.9850);transform-origin:left 0;">Fm</div><div style="position:absolute;left:1872.9px;top:286.49px;font-size:26px;line-height:26px;height:26px;color:#d0cdd9;font-weight:400;white-space:nowrap;transform:scaleX(0.9850);transform-origin:left 0;">Fm</div><div style="position:absolute;left:1910.1000000000001px;top:280.97px;font-size:20px;line-height:20px;height:20px;color:#d0cdd9;font-weight:400;white-space:nowrap;transform:scaleX(0.9700);transform-origin:left 0;">add2</div><div style="position:absolute;left:2081.5px;top:286.49px;font-size:26px;line-height:26px;height:26px;color:#d0cdd9;font-weight:400;white-space:nowrap;transform:scaleX(0.9850);transform-origin:left 0;">Fm</div><div style="position:absolute;left:2118.7px;top:280.97px;font-size:20px;line-height:20px;height:20px;color:#d0cdd9;font-weight:400;white-space:nowrap;transform:scaleX(0.9700);transform-origin:left 0;">add2</div><div style="position:absolute;left:2493.6000000000004px;top:286.49px;font-size:26px;line-height:26px;height:26px;color:#d0cdd9;font-weight:400;white-space:nowrap;transform:scaleX(0.9850);transform-origin:left 0;">Fm</div><div style="position:absolute;left:2697.1000000000004px;top:286.49px;font-size:26px;line-height:26px;height:26px;color:#d0cdd9;font-weight:400;white-space:nowrap;transform:scaleX(0.9850);transform-origin:left 0;">Fm</div><div style="position:absolute;left:2734.3px;top:280.97px;font-size:20px;line-height:20px;height:20px;color:#d0cdd9;font-weight:400;white-space:nowrap;transform:scaleX(0.9700);transform-origin:left 0;">add2</div><div style="position:absolute;left:849px;top:357px;width:2051px;height:23px;background:#009cf6;border-radius:0px;"></div><div style="position:absolute;left:849px;top:386px;width:2051px;height:73px;background:#ff3a05;border-radius:6px;box-sizing:border-box;border:1px solid #ff8a6a;"></div><div style="position:absolute;left:849px;top:466px;width:2051px;height:73px;background:#e6d204;border-radius:6px;box-sizing:border-box;border:1px solid #fff07a;"></div><div style="position:absolute;left:849px;top:546px;width:2051px;height:73px;background:#00a3ff;border-radius:6px;box-sizing:border-box;border:1px solid #7fd0ff;"></div><div style="position:absolute;left:849px;top:626px;width:2051px;height:73px;background:#7500ff;border-radius:6px;box-sizing:border-box;border:1px solid #b77cff;"></div><div style="position:absolute;left:849px;top:706px;width:2051px;height:73px;background:#04d400;border-radius:6px;box-sizing:border-box;border:1px solid #7cf07a;"></div><svg style="position:absolute;left:0px;top:0px;overflow:visible;" width="2940" height="800" viewBox="0 0 2940 800"><g fill="#fffbe8"><rect x="949.1" y="483.8" width="48.5" height="4" rx="1"/><rect x="1152.2" y="487.6" width="48.5" height="4" rx="1"/><rect x="849.0" y="493.7" width="99.3" height="4" rx="1"/><rect x="949.1" y="493.7" width="48.5" height="4" rx="1"/><rect x="998.4" y="493.7" width="51.5" height="4" rx="1"/><rect x="1050.6" y="493.7" width="100.7" height="4" rx="1"/><rect x="1152.2" y="493.7" width="48.5" height="4" rx="1"/><rect x="1201.4" y="493.7" width="52.9" height="4" rx="1"/><rect x="849.0" y="509.7" width="99.3" height="4" rx="1"/><rect x="949.1" y="509.7" width="48.5" height="4" rx="1"/><rect x="998.4" y="509.7" width="51.5" height="4" rx="1"/><rect x="1050.6" y="509.7" width="100.7" height="4" rx="1"/><rect x="1152.2" y="509.7" width="48.5" height="4" rx="1"/><rect x="1201.4" y="509.7" width="52.9" height="4" rx="1"/><rect x="849.0" y="521.8" width="99.3" height="4" rx="1"/><rect x="998.4" y="521.8" width="51.5" height="4" rx="1"/><rect x="1050.6" y="521.8" width="100.7" height="4" rx="1"/><rect x="1201.4" y="521.8" width="52.9" height="4" rx="1"/><rect x="1361.2" y="487.6" width="48.5" height="4" rx="1"/><rect x="1259.7" y="493.7" width="100.7" height="4" rx="1"/><rect x="1361.2" y="493.7" width="48.5" height="4" rx="1"/><rect x="1410.5" y="493.7" width="153.0" height="4" rx="1"/><rect x="1259.7" y="509.7" width="100.7" height="4" rx="1"/><rect x="1361.2" y="509.7" width="48.5" height="4" rx="1"/><rect x="1410.5" y="509.7" width="153.0" height="4" rx="1"/><rect x="1564.3" y="509.7" width="102.1" height="4" rx="1"/><rect x="1259.7" y="521.8" width="100.7" height="4" rx="1"/><rect x="1410.5" y="521.8" width="153.0" height="4" rx="1"/><rect x="1564.3" y="521.8" width="102.1" height="4" rx="1"/><rect x="1564.3" y="531.6" width="102.1" height="4" rx="1"/><rect x="1773.3" y="483.8" width="48.5" height="4" rx="1"/><rect x="1976.4" y="487.6" width="48.5" height="4" rx="1"/><rect x="1671.8" y="493.7" width="100.7" height="4" rx="1"/><rect x="1773.3" y="493.7" width="48.5" height="4" rx="1"/><rect x="1822.6" y="493.7" width="51.5" height="4" rx="1"/><rect x="1874.8" y="493.7" width="100.7" height="4" rx="1"/><rect x="1976.4" y="493.7" width="48.5" height="4" rx="1"/><rect x="2025.6" y="493.7" width="52.9" height="4" rx="1"/><rect x="1671.8" y="509.7" width="100.7" height="4" rx="1"/><rect x="1773.3" y="509.7" width="48.5" height="4" rx="1"/><rect x="1822.6" y="509.7" width="51.5" height="4" rx="1"/><rect x="1874.8" y="509.7" width="100.7" height="4" rx="1"/><rect x="1976.4" y="509.7" width="48.5" height="4" rx="1"/><rect x="2025.6" y="509.7" width="52.9" height="4" rx="1"/><rect x="1671.8" y="521.8" width="100.7" height="4" rx="1"/><rect x="1822.6" y="521.8" width="51.5" height="4" rx="1"/><rect x="1874.8" y="521.8" width="100.7" height="4" rx="1"/><rect x="2025.6" y="521.8" width="52.9" height="4" rx="1"/><rect x="2185.4" y="487.6" width="48.5" height="4" rx="1"/><rect x="2083.9" y="493.7" width="100.7" height="4" rx="1"/><rect x="2185.4" y="493.7" width="48.5" height="4" rx="1"/><rect x="2234.7" y="493.7" width="153.0" height="4" rx="1"/><rect x="2083.9" y="509.7" width="100.7" height="4" rx="1"/><rect x="2185.4" y="509.7" width="48.5" height="4" rx="1"/><rect x="2234.7" y="509.7" width="153.0" height="4" rx="1"/><rect x="2388.5" y="509.7" width="102.1" height="4" rx="1"/><rect x="2083.9" y="521.8" width="100.7" height="4" rx="1"/><rect x="2234.7" y="521.8" width="153.0" height="4" rx="1"/><rect x="2388.5" y="521.8" width="102.1" height="4" rx="1"/><rect x="2388.5" y="531.6" width="102.1" height="4" rx="1"/><rect x="2597.5" y="483.8" width="48.5" height="4" rx="1"/><rect x="2800.6" y="487.6" width="48.5" height="4" rx="1"/><rect x="2496.0" y="493.7" width="100.7" height="4" rx="1"/><rect x="2597.5" y="493.7" width="48.5" height="4" rx="1"/><rect x="2646.8" y="493.7" width="51.5" height="4" rx="1"/><rect x="2699.0" y="493.7" width="100.7" height="4" rx="1"/><rect x="2800.6" y="493.7" width="48.5" height="4" rx="1"/><rect x="2849.8" y="493.7" width="48.2" height="4" rx="1"/><rect x="2496.0" y="509.7" width="100.7" height="4" rx="1"/><rect x="2597.5" y="509.7" width="48.5" height="4" rx="1"/><rect x="2646.8" y="509.7" width="51.5" height="4" rx="1"/><rect x="2699.0" y="509.7" width="100.7" height="4" rx="1"/><rect x="2800.6" y="509.7" width="48.5" height="4" rx="1"/><rect x="2849.8" y="509.7" width="48.2" height="4" rx="1"/><rect x="2496.0" y="521.8" width="100.7" height="4" rx="1"/><rect x="2646.8" y="521.8" width="51.5" height="4" rx="1"/><rect x="2699.0" y="521.8" width="100.7" height="4" rx="1"/><rect x="2849.8" y="521.8" width="48.2" height="4" rx="1"/><rect x="2496.0" y="578.0" width="150.0" height="4" rx="1"/><rect x="2646.8" y="578.0" width="51.5" height="4" rx="1"/><rect x="2699.0" y="578.0" width="100.7" height="4" rx="1"/><rect x="2800.6" y="578.0" width="48.5" height="4" rx="1"/><rect x="2849.8" y="578.0" width="48.2" height="4" rx="1"/><rect x="2496.0" y="653.7" width="202.2" height="4" rx="1"/><rect x="2699.0" y="653.7" width="202.0" height="4" rx="1"/><rect x="849.0" y="725.5" width="63.6" height="4.5" rx="1"/><rect x="912.6" y="720.0" width="65.0" height="6" rx="1"/><rect x="1115.1" y="720.0" width="65.5" height="6" rx="1"/><rect x="1184.1" y="720.0" width="65.5" height="4" rx="1"/><rect x="1258.7" y="725.5" width="66.0" height="4.5" rx="1"/><rect x="1324.7" y="720.0" width="65.0" height="6" rx="1"/><rect x="1527.2" y="720.0" width="65.5" height="6" rx="1"/><rect x="1596.2" y="720.0" width="65.5" height="4" rx="1"/><rect x="1670.8" y="725.5" width="66.0" height="4.5" rx="1"/><rect x="1736.8" y="720.0" width="65.0" height="6" rx="1"/><rect x="1939.3" y="720.0" width="65.5" height="6" rx="1"/><rect x="2008.3" y="720.0" width="65.5" height="4" rx="1"/><rect x="2082.9" y="725.5" width="66.0" height="4.5" rx="1"/><rect x="2148.9" y="720.0" width="65.0" height="6" rx="1"/><rect x="2351.4" y="720.0" width="65.5" height="6" rx="1"/><rect x="2420.4" y="720.0" width="65.5" height="4" rx="1"/><rect x="2495.0" y="725.5" width="66.0" height="4.5" rx="1"/><rect x="2561.0" y="720.0" width="65.0" height="6" rx="1"/><rect x="2763.5" y="720.0" width="65.5" height="6" rx="1"/><rect x="2832.5" y="720.0" width="65.5" height="4" rx="1"/></g></svg><svg style="position:absolute;left:0px;top:0px;overflow:visible;" width="2940" height="1732" viewBox="0 0 2940 1732"><rect x="848.0" y="800.0" width="93.1" height="9.6" fill="#2a2152"/><rect x="891.9" y="800.0" width="3.0" height="9.6" fill="#140c46"/><rect x="947.1" y="800.0" width="95.5" height="9.6" fill="#2a2152"/><rect x="993.4" y="800.0" width="3.0" height="9.6" fill="#140c46"/><rect x="1048.6" y="800.0" width="95.5" height="9.6" fill="#2a2152"/><rect x="1094.9" y="800.0" width="3.0" height="9.6" fill="#140c46"/><rect x="1150.2" y="800.0" width="95.5" height="9.6" fill="#2a2152"/><rect x="1196.4" y="800.0" width="3.0" height="9.6" fill="#140c46"/><rect x="1257.7" y="800.0" width="95.5" height="9.6" fill="#2a2152"/><rect x="1304.0" y="800.0" width="3.0" height="9.6" fill="#140c46"/><rect x="1359.2" y="800.0" width="95.5" height="9.6" fill="#2a2152"/><rect x="1405.5" y="800.0" width="3.0" height="9.6" fill="#140c46"/><rect x="1460.7" y="800.0" width="95.5" height="9.6" fill="#2a2152"/><rect x="1507.0" y="800.0" width="3.0" height="9.6" fill="#140c46"/><rect x="1562.3" y="800.0" width="95.5" height="9.6" fill="#2a2152"/><rect x="1608.5" y="800.0" width="3.0" height="9.6" fill="#140c46"/><rect x="1669.8" y="800.0" width="95.5" height="9.6" fill="#2a2152"/><rect x="1716.1" y="800.0" width="3.0" height="9.6" fill="#140c46"/><rect x="1771.3" y="800.0" width="95.5" height="9.6" fill="#2a2152"/><rect x="1817.6" y="800.0" width="3.0" height="9.6" fill="#140c46"/><rect x="1872.8" y="800.0" width="95.5" height="9.6" fill="#2a2152"/><rect x="1919.1" y="800.0" width="3.0" height="9.6" fill="#140c46"/><rect x="1974.4" y="800.0" width="95.5" height="9.6" fill="#2a2152"/><rect x="2020.6" y="800.0" width="3.0" height="9.6" fill="#140c46"/><rect x="2081.9" y="800.0" width="95.5" height="9.6" fill="#2a2152"/><rect x="2128.2" y="800.0" width="3.0" height="9.6" fill="#140c46"/><rect x="2183.4" y="800.0" width="95.5" height="9.6" fill="#2a2152"/><rect x="2229.7" y="800.0" width="3.0" height="9.6" fill="#140c46"/><rect x="2284.9" y="800.0" width="95.5" height="9.6" fill="#2a2152"/><rect x="2331.2" y="800.0" width="3.0" height="9.6" fill="#140c46"/><rect x="2386.5" y="800.0" width="95.5" height="9.6" fill="#2a2152"/><rect x="2432.7" y="800.0" width="3.0" height="9.6" fill="#140c46"/><rect x="2494.0" y="800.0" width="95.5" height="9.6" fill="#2a2152"/><rect x="2540.3" y="800.0" width="3.0" height="9.6" fill="#140c46"/><rect x="2595.5" y="800.0" width="95.5" height="9.6" fill="#2a2152"/><rect x="2641.8" y="800.0" width="3.0" height="9.6" fill="#140c46"/><rect x="2697.0" y="800.0" width="95.5" height="9.6" fill="#2a2152"/><rect x="2743.3" y="800.0" width="3.0" height="9.6" fill="#140c46"/><rect x="2798.6" y="800.0" width="95.5" height="9.6" fill="#2a2152"/><rect x="2844.8" y="800.0" width="3.0" height="9.6" fill="#140c46"/><rect x="848.0" y="813.1" width="93.1" height="23.3" fill="#171049"/><rect x="891.9" y="813.1" width="3.0" height="23.3" fill="#100843"/><rect x="947.1" y="813.1" width="95.5" height="23.3" fill="#171049"/><rect x="993.4" y="813.1" width="3.0" height="23.3" fill="#100843"/><rect x="1048.6" y="813.1" width="95.5" height="23.3" fill="#171049"/><rect x="1094.9" y="813.1" width="3.0" height="23.3" fill="#100843"/><rect x="1150.2" y="813.1" width="95.5" height="23.3" fill="#171049"/><rect x="1196.4" y="813.1" width="3.0" height="23.3" fill="#100843"/><rect x="1257.7" y="813.1" width="95.5" height="23.3" fill="#171049"/><rect x="1304.0" y="813.1" width="3.0" height="23.3" fill="#100843"/><rect x="1359.2" y="813.1" width="95.5" height="23.3" fill="#171049"/><rect x="1405.5" y="813.1" width="3.0" height="23.3" fill="#100843"/><rect x="1460.7" y="813.1" width="95.5" height="23.3" fill="#171049"/><rect x="1507.0" y="813.1" width="3.0" height="23.3" fill="#100843"/><rect x="1562.3" y="813.1" width="95.5" height="23.3" fill="#171049"/><rect x="1608.5" y="813.1" width="3.0" height="23.3" fill="#100843"/><rect x="1669.8" y="813.1" width="95.5" height="23.3" fill="#171049"/><rect x="1716.1" y="813.1" width="3.0" height="23.3" fill="#100843"/><rect x="1771.3" y="813.1" width="95.5" height="23.3" fill="#171049"/><rect x="1817.6" y="813.1" width="3.0" height="23.3" fill="#100843"/><rect x="1872.8" y="813.1" width="95.5" height="23.3" fill="#171049"/><rect x="1919.1" y="813.1" width="3.0" height="23.3" fill="#100843"/><rect x="1974.4" y="813.1" width="95.5" height="23.3" fill="#171049"/><rect x="2020.6" y="813.1" width="3.0" height="23.3" fill="#100843"/><rect x="2081.9" y="813.1" width="95.5" height="23.3" fill="#171049"/><rect x="2128.2" y="813.1" width="3.0" height="23.3" fill="#100843"/><rect x="2183.4" y="813.1" width="95.5" height="23.3" fill="#171049"/><rect x="2229.7" y="813.1" width="3.0" height="23.3" fill="#100843"/><rect x="2284.9" y="813.1" width="95.5" height="23.3" fill="#171049"/><rect x="2331.2" y="813.1" width="3.0" height="23.3" fill="#100843"/><rect x="2386.5" y="813.1" width="95.5" height="23.3" fill="#171049"/><rect x="2432.7" y="813.1" width="3.0" height="23.3" fill="#100843"/><rect x="2494.0" y="813.1" width="95.5" height="23.3" fill="#171049"/><rect x="2540.3" y="813.1" width="3.0" height="23.3" fill="#100843"/><rect x="2595.5" y="813.1" width="95.5" height="23.3" fill="#171049"/><rect x="2641.8" y="813.1" width="3.0" height="23.3" fill="#100843"/><rect x="2697.0" y="813.1" width="95.5" height="23.3" fill="#171049"/><rect x="2743.3" y="813.1" width="3.0" height="23.3" fill="#100843"/><rect x="2798.6" y="813.1" width="95.5" height="23.3" fill="#171049"/><rect x="2844.8" y="813.1" width="3.0" height="23.3" fill="#100843"/><rect x="848.0" y="839.9" width="93.1" height="23.3" fill="#2a2152"/><rect x="891.9" y="839.9" width="3.0" height="23.3" fill="#140c46"/><rect x="947.1" y="839.9" width="95.5" height="23.3" fill="#2a2152"/><rect x="993.4" y="839.9" width="3.0" height="23.3" fill="#140c46"/><rect x="1048.6" y="839.9" width="95.5" height="23.3" fill="#2a2152"/><rect x="1094.9" y="839.9" width="3.0" height="23.3" fill="#140c46"/><rect x="1150.2" y="839.9" width="95.5" height="23.3" fill="#2a2152"/><rect x="1196.4" y="839.9" width="3.0" height="23.3" fill="#140c46"/><rect x="1257.7" y="839.9" width="95.5" height="23.3" fill="#2a2152"/><rect x="1304.0" y="839.9" width="3.0" height="23.3" fill="#140c46"/><rect x="1359.2" y="839.9" width="95.5" height="23.3" fill="#2a2152"/><rect x="1405.5" y="839.9" width="3.0" height="23.3" fill="#140c46"/><rect x="1460.7" y="839.9" width="95.5" height="23.3" fill="#2a2152"/><rect x="1507.0" y="839.9" width="3.0" height="23.3" fill="#140c46"/><rect x="1562.3" y="839.9" width="95.5" height="23.3" fill="#2a2152"/><rect x="1608.5" y="839.9" width="3.0" height="23.3" fill="#140c46"/><rect x="1669.8" y="839.9" width="95.5" height="23.3" fill="#2a2152"/><rect x="1716.1" y="839.9" width="3.0" height="23.3" fill="#140c46"/><rect x="1771.3" y="839.9" width="95.5" height="23.3" fill="#2a2152"/><rect x="1817.6" y="839.9" width="3.0" height="23.3" fill="#140c46"/><rect x="1872.8" y="839.9" width="95.5" height="23.3" fill="#2a2152"/><rect x="1919.1" y="839.9" width="3.0" height="23.3" fill="#140c46"/><rect x="1974.4" y="839.9" width="95.5" height="23.3" fill="#2a2152"/><rect x="2020.6" y="839.9" width="3.0" height="23.3" fill="#140c46"/><rect x="2081.9" y="839.9" width="95.5" height="23.3" fill="#2a2152"/><rect x="2128.2" y="839.9" width="3.0" height="23.3" fill="#140c46"/><rect x="2183.4" y="839.9" width="95.5" height="23.3" fill="#2a2152"/><rect x="2229.7" y="839.9" width="3.0" height="23.3" fill="#140c46"/><rect x="2284.9" y="839.9" width="95.5" height="23.3" fill="#2a2152"/><rect x="2331.2" y="839.9" width="3.0" height="23.3" fill="#140c46"/><rect x="2386.5" y="839.9" width="95.5" height="23.3" fill="#2a2152"/><rect x="2432.7" y="839.9" width="3.0" height="23.3" fill="#140c46"/><rect x="2494.0" y="839.9" width="95.5" height="23.3" fill="#2a2152"/><rect x="2540.3" y="839.9" width="3.0" height="23.3" fill="#140c46"/><rect x="2595.5" y="839.9" width="95.5" height="23.3" fill="#2a2152"/><rect x="2641.8" y="839.9" width="3.0" height="23.3" fill="#140c46"/><rect x="2697.0" y="839.9" width="95.5" height="23.3" fill="#2a2152"/><rect x="2743.3" y="839.9" width="3.0" height="23.3" fill="#140c46"/><rect x="2798.6" y="839.9" width="95.5" height="23.3" fill="#2a2152"/><rect x="2844.8" y="839.9" width="3.0" height="23.3" fill="#140c46"/><rect x="848.0" y="866.7" width="93.1" height="23.3" fill="#171049"/><rect x="891.9" y="866.7" width="3.0" height="23.3" fill="#100843"/><rect x="947.1" y="866.7" width="95.5" height="23.3" fill="#171049"/><rect x="993.4" y="866.7" width="3.0" height="23.3" fill="#100843"/><rect x="1048.6" y="866.7" width="95.5" height="23.3" fill="#171049"/><rect x="1094.9" y="866.7" width="3.0" height="23.3" fill="#100843"/><rect x="1150.2" y="866.7" width="95.5" height="23.3" fill="#171049"/><rect x="1196.4" y="866.7" width="3.0" height="23.3" fill="#100843"/><rect x="1257.7" y="866.7" width="95.5" height="23.3" fill="#171049"/><rect x="1304.0" y="866.7" width="3.0" height="23.3" fill="#100843"/><rect x="1359.2" y="866.7" width="95.5" height="23.3" fill="#171049"/><rect x="1405.5" y="866.7" width="3.0" height="23.3" fill="#100843"/><rect x="1460.7" y="866.7" width="95.5" height="23.3" fill="#171049"/><rect x="1507.0" y="866.7" width="3.0" height="23.3" fill="#100843"/><rect x="1562.3" y="866.7" width="95.5" height="23.3" fill="#171049"/><rect x="1608.5" y="866.7" width="3.0" height="23.3" fill="#100843"/><rect x="1669.8" y="866.7" width="95.5" height="23.3" fill="#171049"/><rect x="1716.1" y="866.7" width="3.0" height="23.3" fill="#100843"/><rect x="1771.3" y="866.7" width="95.5" height="23.3" fill="#171049"/><rect x="1817.6" y="866.7" width="3.0" height="23.3" fill="#100843"/><rect x="1872.8" y="866.7" width="95.5" height="23.3" fill="#171049"/><rect x="1919.1" y="866.7" width="3.0" height="23.3" fill="#100843"/><rect x="1974.4" y="866.7" width="95.5" height="23.3" fill="#171049"/><rect x="2020.6" y="866.7" width="3.0" height="23.3" fill="#100843"/><rect x="2081.9" y="866.7" width="95.5" height="23.3" fill="#171049"/><rect x="2128.2" y="866.7" width="3.0" height="23.3" fill="#100843"/><rect x="2183.4" y="866.7" width="95.5" height="23.3" fill="#171049"/><rect x="2229.7" y="866.7" width="3.0" height="23.3" fill="#100843"/><rect x="2284.9" y="866.7" width="95.5" height="23.3" fill="#171049"/><rect x="2331.2" y="866.7" width="3.0" height="23.3" fill="#100843"/><rect x="2386.5" y="866.7" width="95.5" height="23.3" fill="#171049"/><rect x="2432.7" y="866.7" width="3.0" height="23.3" fill="#100843"/><rect x="2494.0" y="866.7" width="95.5" height="23.3" fill="#171049"/><rect x="2540.3" y="866.7" width="3.0" height="23.3" fill="#100843"/><rect x="2595.5" y="866.7" width="95.5" height="23.3" fill="#171049"/><rect x="2641.8" y="866.7" width="3.0" height="23.3" fill="#100843"/><rect x="2697.0" y="866.7" width="95.5" height="23.3" fill="#171049"/><rect x="2743.3" y="866.7" width="3.0" height="23.3" fill="#100843"/><rect x="2798.6" y="866.7" width="95.5" height="23.3" fill="#171049"/><rect x="2844.8" y="866.7" width="3.0" height="23.3" fill="#100843"/><rect x="848.0" y="893.5" width="93.1" height="23.3" fill="#2a2152"/><rect x="891.9" y="893.5" width="3.0" height="23.3" fill="#140c46"/><rect x="947.1" y="893.5" width="95.5" height="23.3" fill="#2a2152"/><rect x="993.4" y="893.5" width="3.0" height="23.3" fill="#140c46"/><rect x="1048.6" y="893.5" width="95.5" height="23.3" fill="#2a2152"/><rect x="1094.9" y="893.5" width="3.0" height="23.3" fill="#140c46"/><rect x="1150.2" y="893.5" width="95.5" height="23.3" fill="#2a2152"/><rect x="1196.4" y="893.5" width="3.0" height="23.3" fill="#140c46"/><rect x="1257.7" y="893.5" width="95.5" height="23.3" fill="#2a2152"/><rect x="1304.0" y="893.5" width="3.0" height="23.3" fill="#140c46"/><rect x="1359.2" y="893.5" width="95.5" height="23.3" fill="#2a2152"/><rect x="1405.5" y="893.5" width="3.0" height="23.3" fill="#140c46"/><rect x="1460.7" y="893.5" width="95.5" height="23.3" fill="#2a2152"/><rect x="1507.0" y="893.5" width="3.0" height="23.3" fill="#140c46"/><rect x="1562.3" y="893.5" width="95.5" height="23.3" fill="#2a2152"/><rect x="1608.5" y="893.5" width="3.0" height="23.3" fill="#140c46"/><rect x="1669.8" y="893.5" width="95.5" height="23.3" fill="#2a2152"/><rect x="1716.1" y="893.5" width="3.0" height="23.3" fill="#140c46"/><rect x="1771.3" y="893.5" width="95.5" height="23.3" fill="#2a2152"/><rect x="1817.6" y="893.5" width="3.0" height="23.3" fill="#140c46"/><rect x="1872.8" y="893.5" width="95.5" height="23.3" fill="#2a2152"/><rect x="1919.1" y="893.5" width="3.0" height="23.3" fill="#140c46"/><rect x="1974.4" y="893.5" width="95.5" height="23.3" fill="#2a2152"/><rect x="2020.6" y="893.5" width="3.0" height="23.3" fill="#140c46"/><rect x="2081.9" y="893.5" width="95.5" height="23.3" fill="#2a2152"/><rect x="2128.2" y="893.5" width="3.0" height="23.3" fill="#140c46"/><rect x="2183.4" y="893.5" width="95.5" height="23.3" fill="#2a2152"/><rect x="2229.7" y="893.5" width="3.0" height="23.3" fill="#140c46"/><rect x="2284.9" y="893.5" width="95.5" height="23.3" fill="#2a2152"/><rect x="2331.2" y="893.5" width="3.0" height="23.3" fill="#140c46"/><rect x="2386.5" y="893.5" width="95.5" height="23.3" fill="#2a2152"/><rect x="2432.7" y="893.5" width="3.0" height="23.3" fill="#140c46"/><rect x="2494.0" y="893.5" width="95.5" height="23.3" fill="#2a2152"/><rect x="2540.3" y="893.5" width="3.0" height="23.3" fill="#140c46"/><rect x="2595.5" y="893.5" width="95.5" height="23.3" fill="#2a2152"/><rect x="2641.8" y="893.5" width="3.0" height="23.3" fill="#140c46"/><rect x="2697.0" y="893.5" width="95.5" height="23.3" fill="#2a2152"/><rect x="2743.3" y="893.5" width="3.0" height="23.3" fill="#140c46"/><rect x="2798.6" y="893.5" width="95.5" height="23.3" fill="#2a2152"/><rect x="2844.8" y="893.5" width="3.0" height="23.3" fill="#140c46"/><rect x="848.0" y="920.3" width="93.1" height="23.3" fill="#2a2152"/><rect x="891.9" y="920.3" width="3.0" height="23.3" fill="#140c46"/><rect x="947.1" y="920.3" width="95.5" height="23.3" fill="#2a2152"/><rect x="993.4" y="920.3" width="3.0" height="23.3" fill="#140c46"/><rect x="1048.6" y="920.3" width="95.5" height="23.3" fill="#2a2152"/><rect x="1094.9" y="920.3" width="3.0" height="23.3" fill="#140c46"/><rect x="1150.2" y="920.3" width="95.5" height="23.3" fill="#2a2152"/><rect x="1196.4" y="920.3" width="3.0" height="23.3" fill="#140c46"/><rect x="1257.7" y="920.3" width="95.5" height="23.3" fill="#2a2152"/><rect x="1304.0" y="920.3" width="3.0" height="23.3" fill="#140c46"/><rect x="1359.2" y="920.3" width="95.5" height="23.3" fill="#2a2152"/><rect x="1405.5" y="920.3" width="3.0" height="23.3" fill="#140c46"/><rect x="1460.7" y="920.3" width="95.5" height="23.3" fill="#2a2152"/><rect x="1507.0" y="920.3" width="3.0" height="23.3" fill="#140c46"/><rect x="1562.3" y="920.3" width="95.5" height="23.3" fill="#2a2152"/><rect x="1608.5" y="920.3" width="3.0" height="23.3" fill="#140c46"/><rect x="1669.8" y="920.3" width="95.5" height="23.3" fill="#2a2152"/><rect x="1716.1" y="920.3" width="3.0" height="23.3" fill="#140c46"/><rect x="1771.3" y="920.3" width="95.5" height="23.3" fill="#2a2152"/><rect x="1817.6" y="920.3" width="3.0" height="23.3" fill="#140c46"/><rect x="1872.8" y="920.3" width="95.5" height="23.3" fill="#2a2152"/><rect x="1919.1" y="920.3" width="3.0" height="23.3" fill="#140c46"/><rect x="1974.4" y="920.3" width="95.5" height="23.3" fill="#2a2152"/><rect x="2020.6" y="920.3" width="3.0" height="23.3" fill="#140c46"/><rect x="2081.9" y="920.3" width="95.5" height="23.3" fill="#2a2152"/><rect x="2128.2" y="920.3" width="3.0" height="23.3" fill="#140c46"/><rect x="2183.4" y="920.3" width="95.5" height="23.3" fill="#2a2152"/><rect x="2229.7" y="920.3" width="3.0" height="23.3" fill="#140c46"/><rect x="2284.9" y="920.3" width="95.5" height="23.3" fill="#2a2152"/><rect x="2331.2" y="920.3" width="3.0" height="23.3" fill="#140c46"/><rect x="2386.5" y="920.3" width="95.5" height="23.3" fill="#2a2152"/><rect x="2432.7" y="920.3" width="3.0" height="23.3" fill="#140c46"/><rect x="2494.0" y="920.3" width="95.5" height="23.3" fill="#2a2152"/><rect x="2540.3" y="920.3" width="3.0" height="23.3" fill="#140c46"/><rect x="2595.5" y="920.3" width="95.5" height="23.3" fill="#2a2152"/><rect x="2641.8" y="920.3" width="3.0" height="23.3" fill="#140c46"/><rect x="2697.0" y="920.3" width="95.5" height="23.3" fill="#2a2152"/><rect x="2743.3" y="920.3" width="3.0" height="23.3" fill="#140c46"/><rect x="2798.6" y="920.3" width="95.5" height="23.3" fill="#2a2152"/><rect x="2844.8" y="920.3" width="3.0" height="23.3" fill="#140c46"/><rect x="848.0" y="947.1" width="93.1" height="23.3" fill="#171049"/><rect x="891.9" y="947.1" width="3.0" height="23.3" fill="#100843"/><rect x="947.1" y="947.1" width="95.5" height="23.3" fill="#171049"/><rect x="993.4" y="947.1" width="3.0" height="23.3" fill="#100843"/><rect x="1048.6" y="947.1" width="95.5" height="23.3" fill="#171049"/><rect x="1094.9" y="947.1" width="3.0" height="23.3" fill="#100843"/><rect x="1150.2" y="947.1" width="95.5" height="23.3" fill="#171049"/><rect x="1196.4" y="947.1" width="3.0" height="23.3" fill="#100843"/><rect x="1257.7" y="947.1" width="95.5" height="23.3" fill="#171049"/><rect x="1304.0" y="947.1" width="3.0" height="23.3" fill="#100843"/><rect x="1359.2" y="947.1" width="95.5" height="23.3" fill="#171049"/><rect x="1405.5" y="947.1" width="3.0" height="23.3" fill="#100843"/><rect x="1460.7" y="947.1" width="95.5" height="23.3" fill="#171049"/><rect x="1507.0" y="947.1" width="3.0" height="23.3" fill="#100843"/><rect x="1562.3" y="947.1" width="95.5" height="23.3" fill="#171049"/><rect x="1608.5" y="947.1" width="3.0" height="23.3" fill="#100843"/><rect x="1669.8" y="947.1" width="95.5" height="23.3" fill="#171049"/><rect x="1716.1" y="947.1" width="3.0" height="23.3" fill="#100843"/><rect x="1771.3" y="947.1" width="95.5" height="23.3" fill="#171049"/><rect x="1817.6" y="947.1" width="3.0" height="23.3" fill="#100843"/><rect x="1872.8" y="947.1" width="95.5" height="23.3" fill="#171049"/><rect x="1919.1" y="947.1" width="3.0" height="23.3" fill="#100843"/><rect x="1974.4" y="947.1" width="95.5" height="23.3" fill="#171049"/><rect x="2020.6" y="947.1" width="3.0" height="23.3" fill="#100843"/><rect x="2081.9" y="947.1" width="95.5" height="23.3" fill="#171049"/><rect x="2128.2" y="947.1" width="3.0" height="23.3" fill="#100843"/><rect x="2183.4" y="947.1" width="95.5" height="23.3" fill="#171049"/><rect x="2229.7" y="947.1" width="3.0" height="23.3" fill="#100843"/><rect x="2284.9" y="947.1" width="95.5" height="23.3" fill="#171049"/><rect x="2331.2" y="947.1" width="3.0" height="23.3" fill="#100843"/><rect x="2386.5" y="947.1" width="95.5" height="23.3" fill="#171049"/><rect x="2432.7" y="947.1" width="3.0" height="23.3" fill="#100843"/><rect x="2494.0" y="947.1" width="95.5" height="23.3" fill="#171049"/><rect x="2540.3" y="947.1" width="3.0" height="23.3" fill="#100843"/><rect x="2595.5" y="947.1" width="95.5" height="23.3" fill="#171049"/><rect x="2641.8" y="947.1" width="3.0" height="23.3" fill="#100843"/><rect x="2697.0" y="947.1" width="95.5" height="23.3" fill="#171049"/><rect x="2743.3" y="947.1" width="3.0" height="23.3" fill="#100843"/><rect x="2798.6" y="947.1" width="95.5" height="23.3" fill="#171049"/><rect x="2844.8" y="947.1" width="3.0" height="23.3" fill="#100843"/><rect x="848.0" y="973.9" width="93.1" height="23.3" fill="#2a2152"/><rect x="891.9" y="973.9" width="3.0" height="23.3" fill="#140c46"/><rect x="947.1" y="973.9" width="95.5" height="23.3" fill="#2a2152"/><rect x="993.4" y="973.9" width="3.0" height="23.3" fill="#140c46"/><rect x="1048.6" y="973.9" width="95.5" height="23.3" fill="#2a2152"/><rect x="1094.9" y="973.9" width="3.0" height="23.3" fill="#140c46"/><rect x="1150.2" y="973.9" width="95.5" height="23.3" fill="#2a2152"/><rect x="1196.4" y="973.9" width="3.0" height="23.3" fill="#140c46"/><rect x="1257.7" y="973.9" width="95.5" height="23.3" fill="#2a2152"/><rect x="1304.0" y="973.9" width="3.0" height="23.3" fill="#140c46"/><rect x="1359.2" y="973.9" width="95.5" height="23.3" fill="#2a2152"/><rect x="1405.5" y="973.9" width="3.0" height="23.3" fill="#140c46"/><rect x="1460.7" y="973.9" width="95.5" height="23.3" fill="#2a2152"/><rect x="1507.0" y="973.9" width="3.0" height="23.3" fill="#140c46"/><rect x="1562.3" y="973.9" width="95.5" height="23.3" fill="#2a2152"/><rect x="1608.5" y="973.9" width="3.0" height="23.3" fill="#140c46"/><rect x="1669.8" y="973.9" width="95.5" height="23.3" fill="#2a2152"/><rect x="1716.1" y="973.9" width="3.0" height="23.3" fill="#140c46"/><rect x="1771.3" y="973.9" width="95.5" height="23.3" fill="#2a2152"/><rect x="1817.6" y="973.9" width="3.0" height="23.3" fill="#140c46"/><rect x="1872.8" y="973.9" width="95.5" height="23.3" fill="#2a2152"/><rect x="1919.1" y="973.9" width="3.0" height="23.3" fill="#140c46"/><rect x="1974.4" y="973.9" width="95.5" height="23.3" fill="#2a2152"/><rect x="2020.6" y="973.9" width="3.0" height="23.3" fill="#140c46"/><rect x="2081.9" y="973.9" width="95.5" height="23.3" fill="#2a2152"/><rect x="2128.2" y="973.9" width="3.0" height="23.3" fill="#140c46"/><rect x="2183.4" y="973.9" width="95.5" height="23.3" fill="#2a2152"/><rect x="2229.7" y="973.9" width="3.0" height="23.3" fill="#140c46"/><rect x="2284.9" y="973.9" width="95.5" height="23.3" fill="#2a2152"/><rect x="2331.2" y="973.9" width="3.0" height="23.3" fill="#140c46"/><rect x="2386.5" y="973.9" width="95.5" height="23.3" fill="#2a2152"/><rect x="2432.7" y="973.9" width="3.0" height="23.3" fill="#140c46"/><rect x="2494.0" y="973.9" width="95.5" height="23.3" fill="#2a2152"/><rect x="2540.3" y="973.9" width="3.0" height="23.3" fill="#140c46"/><rect x="2595.5" y="973.9" width="95.5" height="23.3" fill="#2a2152"/><rect x="2641.8" y="973.9" width="3.0" height="23.3" fill="#140c46"/><rect x="2697.0" y="973.9" width="95.5" height="23.3" fill="#2a2152"/><rect x="2743.3" y="973.9" width="3.0" height="23.3" fill="#140c46"/><rect x="2798.6" y="973.9" width="95.5" height="23.3" fill="#2a2152"/><rect x="2844.8" y="973.9" width="3.0" height="23.3" fill="#140c46"/><rect x="848.0" y="1000.7" width="93.1" height="23.3" fill="#171049"/><rect x="891.9" y="1000.7" width="3.0" height="23.3" fill="#100843"/><rect x="947.1" y="1000.7" width="95.5" height="23.3" fill="#171049"/><rect x="993.4" y="1000.7" width="3.0" height="23.3" fill="#100843"/><rect x="1048.6" y="1000.7" width="95.5" height="23.3" fill="#171049"/><rect x="1094.9" y="1000.7" width="3.0" height="23.3" fill="#100843"/><rect x="1150.2" y="1000.7" width="95.5" height="23.3" fill="#171049"/><rect x="1196.4" y="1000.7" width="3.0" height="23.3" fill="#100843"/><rect x="1257.7" y="1000.7" width="95.5" height="23.3" fill="#171049"/><rect x="1304.0" y="1000.7" width="3.0" height="23.3" fill="#100843"/><rect x="1359.2" y="1000.7" width="95.5" height="23.3" fill="#171049"/><rect x="1405.5" y="1000.7" width="3.0" height="23.3" fill="#100843"/><rect x="1460.7" y="1000.7" width="95.5" height="23.3" fill="#171049"/><rect x="1507.0" y="1000.7" width="3.0" height="23.3" fill="#100843"/><rect x="1562.3" y="1000.7" width="95.5" height="23.3" fill="#171049"/><rect x="1608.5" y="1000.7" width="3.0" height="23.3" fill="#100843"/><rect x="1669.8" y="1000.7" width="95.5" height="23.3" fill="#171049"/><rect x="1716.1" y="1000.7" width="3.0" height="23.3" fill="#100843"/><rect x="1771.3" y="1000.7" width="95.5" height="23.3" fill="#171049"/><rect x="1817.6" y="1000.7" width="3.0" height="23.3" fill="#100843"/><rect x="1872.8" y="1000.7" width="95.5" height="23.3" fill="#171049"/><rect x="1919.1" y="1000.7" width="3.0" height="23.3" fill="#100843"/><rect x="1974.4" y="1000.7" width="95.5" height="23.3" fill="#171049"/><rect x="2020.6" y="1000.7" width="3.0" height="23.3" fill="#100843"/><rect x="2081.9" y="1000.7" width="95.5" height="23.3" fill="#171049"/><rect x="2128.2" y="1000.7" width="3.0" height="23.3" fill="#100843"/><rect x="2183.4" y="1000.7" width="95.5" height="23.3" fill="#171049"/><rect x="2229.7" y="1000.7" width="3.0" height="23.3" fill="#100843"/><rect x="2284.9" y="1000.7" width="95.5" height="23.3" fill="#171049"/><rect x="2331.2" y="1000.7" width="3.0" height="23.3" fill="#100843"/><rect x="2386.5" y="1000.7" width="95.5" height="23.3" fill="#171049"/><rect x="2432.7" y="1000.7" width="3.0" height="23.3" fill="#100843"/><rect x="2494.0" y="1000.7" width="95.5" height="23.3" fill="#171049"/><rect x="2540.3" y="1000.7" width="3.0" height="23.3" fill="#100843"/><rect x="2595.5" y="1000.7" width="95.5" height="23.3" fill="#171049"/><rect x="2641.8" y="1000.7" width="3.0" height="23.3" fill="#100843"/><rect x="2697.0" y="1000.7" width="95.5" height="23.3" fill="#171049"/><rect x="2743.3" y="1000.7" width="3.0" height="23.3" fill="#100843"/><rect x="2798.6" y="1000.7" width="95.5" height="23.3" fill="#171049"/><rect x="2844.8" y="1000.7" width="3.0" height="23.3" fill="#100843"/><rect x="848.0" y="1027.5" width="93.1" height="23.3" fill="#2a2152"/><rect x="891.9" y="1027.5" width="3.0" height="23.3" fill="#140c46"/><rect x="947.1" y="1027.5" width="95.5" height="23.3" fill="#2a2152"/><rect x="993.4" y="1027.5" width="3.0" height="23.3" fill="#140c46"/><rect x="1048.6" y="1027.5" width="95.5" height="23.3" fill="#2a2152"/><rect x="1094.9" y="1027.5" width="3.0" height="23.3" fill="#140c46"/><rect x="1150.2" y="1027.5" width="95.5" height="23.3" fill="#2a2152"/><rect x="1196.4" y="1027.5" width="3.0" height="23.3" fill="#140c46"/><rect x="1257.7" y="1027.5" width="95.5" height="23.3" fill="#2a2152"/><rect x="1304.0" y="1027.5" width="3.0" height="23.3" fill="#140c46"/><rect x="1359.2" y="1027.5" width="95.5" height="23.3" fill="#2a2152"/><rect x="1405.5" y="1027.5" width="3.0" height="23.3" fill="#140c46"/><rect x="1460.7" y="1027.5" width="95.5" height="23.3" fill="#2a2152"/><rect x="1507.0" y="1027.5" width="3.0" height="23.3" fill="#140c46"/><rect x="1562.3" y="1027.5" width="95.5" height="23.3" fill="#2a2152"/><rect x="1608.5" y="1027.5" width="3.0" height="23.3" fill="#140c46"/><rect x="1669.8" y="1027.5" width="95.5" height="23.3" fill="#2a2152"/><rect x="1716.1" y="1027.5" width="3.0" height="23.3" fill="#140c46"/><rect x="1771.3" y="1027.5" width="95.5" height="23.3" fill="#2a2152"/><rect x="1817.6" y="1027.5" width="3.0" height="23.3" fill="#140c46"/><rect x="1872.8" y="1027.5" width="95.5" height="23.3" fill="#2a2152"/><rect x="1919.1" y="1027.5" width="3.0" height="23.3" fill="#140c46"/><rect x="1974.4" y="1027.5" width="95.5" height="23.3" fill="#2a2152"/><rect x="2020.6" y="1027.5" width="3.0" height="23.3" fill="#140c46"/><rect x="2081.9" y="1027.5" width="95.5" height="23.3" fill="#2a2152"/><rect x="2128.2" y="1027.5" width="3.0" height="23.3" fill="#140c46"/><rect x="2183.4" y="1027.5" width="95.5" height="23.3" fill="#2a2152"/><rect x="2229.7" y="1027.5" width="3.0" height="23.3" fill="#140c46"/><rect x="2284.9" y="1027.5" width="95.5" height="23.3" fill="#2a2152"/><rect x="2331.2" y="1027.5" width="3.0" height="23.3" fill="#140c46"/><rect x="2386.5" y="1027.5" width="95.5" height="23.3" fill="#2a2152"/><rect x="2432.7" y="1027.5" width="3.0" height="23.3" fill="#140c46"/><rect x="2494.0" y="1027.5" width="95.5" height="23.3" fill="#2a2152"/><rect x="2540.3" y="1027.5" width="3.0" height="23.3" fill="#140c46"/><rect x="2595.5" y="1027.5" width="95.5" height="23.3" fill="#2a2152"/><rect x="2641.8" y="1027.5" width="3.0" height="23.3" fill="#140c46"/><rect x="2697.0" y="1027.5" width="95.5" height="23.3" fill="#2a2152"/><rect x="2743.3" y="1027.5" width="3.0" height="23.3" fill="#140c46"/><rect x="2798.6" y="1027.5" width="95.5" height="23.3" fill="#2a2152"/><rect x="2844.8" y="1027.5" width="3.0" height="23.3" fill="#140c46"/><rect x="848.0" y="1054.3" width="93.1" height="23.3" fill="#171049"/><rect x="891.9" y="1054.3" width="3.0" height="23.3" fill="#100843"/><rect x="947.1" y="1054.3" width="95.5" height="23.3" fill="#171049"/><rect x="993.4" y="1054.3" width="3.0" height="23.3" fill="#100843"/><rect x="1048.6" y="1054.3" width="95.5" height="23.3" fill="#171049"/><rect x="1094.9" y="1054.3" width="3.0" height="23.3" fill="#100843"/><rect x="1150.2" y="1054.3" width="95.5" height="23.3" fill="#171049"/><rect x="1196.4" y="1054.3" width="3.0" height="23.3" fill="#100843"/><rect x="1257.7" y="1054.3" width="95.5" height="23.3" fill="#171049"/><rect x="1304.0" y="1054.3" width="3.0" height="23.3" fill="#100843"/><rect x="1359.2" y="1054.3" width="95.5" height="23.3" fill="#171049"/><rect x="1405.5" y="1054.3" width="3.0" height="23.3" fill="#100843"/><rect x="1460.7" y="1054.3" width="95.5" height="23.3" fill="#171049"/><rect x="1507.0" y="1054.3" width="3.0" height="23.3" fill="#100843"/><rect x="1562.3" y="1054.3" width="95.5" height="23.3" fill="#171049"/><rect x="1608.5" y="1054.3" width="3.0" height="23.3" fill="#100843"/><rect x="1669.8" y="1054.3" width="95.5" height="23.3" fill="#171049"/><rect x="1716.1" y="1054.3" width="3.0" height="23.3" fill="#100843"/><rect x="1771.3" y="1054.3" width="95.5" height="23.3" fill="#171049"/><rect x="1817.6" y="1054.3" width="3.0" height="23.3" fill="#100843"/><rect x="1872.8" y="1054.3" width="95.5" height="23.3" fill="#171049"/><rect x="1919.1" y="1054.3" width="3.0" height="23.3" fill="#100843"/><rect x="1974.4" y="1054.3" width="95.5" height="23.3" fill="#171049"/><rect x="2020.6" y="1054.3" width="3.0" height="23.3" fill="#100843"/><rect x="2081.9" y="1054.3" width="95.5" height="23.3" fill="#171049"/><rect x="2128.2" y="1054.3" width="3.0" height="23.3" fill="#100843"/><rect x="2183.4" y="1054.3" width="95.5" height="23.3" fill="#171049"/><rect x="2229.7" y="1054.3" width="3.0" height="23.3" fill="#100843"/><rect x="2284.9" y="1054.3" width="95.5" height="23.3" fill="#171049"/><rect x="2331.2" y="1054.3" width="3.0" height="23.3" fill="#100843"/><rect x="2386.5" y="1054.3" width="95.5" height="23.3" fill="#171049"/><rect x="2432.7" y="1054.3" width="3.0" height="23.3" fill="#100843"/><rect x="2494.0" y="1054.3" width="95.5" height="23.3" fill="#171049"/><rect x="2540.3" y="1054.3" width="3.0" height="23.3" fill="#100843"/><rect x="2595.5" y="1054.3" width="95.5" height="23.3" fill="#171049"/><rect x="2641.8" y="1054.3" width="3.0" height="23.3" fill="#100843"/><rect x="2697.0" y="1054.3" width="95.5" height="23.3" fill="#171049"/><rect x="2743.3" y="1054.3" width="3.0" height="23.3" fill="#100843"/><rect x="2798.6" y="1054.3" width="95.5" height="23.3" fill="#171049"/><rect x="2844.8" y="1054.3" width="3.0" height="23.3" fill="#100843"/><rect x="848.0" y="1081.1" width="93.1" height="23.3" fill="#2a2152"/><rect x="891.9" y="1081.1" width="3.0" height="23.3" fill="#140c46"/><rect x="947.1" y="1081.1" width="95.5" height="23.3" fill="#2a2152"/><rect x="993.4" y="1081.1" width="3.0" height="23.3" fill="#140c46"/><rect x="1048.6" y="1081.1" width="95.5" height="23.3" fill="#2a2152"/><rect x="1094.9" y="1081.1" width="3.0" height="23.3" fill="#140c46"/><rect x="1150.2" y="1081.1" width="95.5" height="23.3" fill="#2a2152"/><rect x="1196.4" y="1081.1" width="3.0" height="23.3" fill="#140c46"/><rect x="1257.7" y="1081.1" width="95.5" height="23.3" fill="#2a2152"/><rect x="1304.0" y="1081.1" width="3.0" height="23.3" fill="#140c46"/><rect x="1359.2" y="1081.1" width="95.5" height="23.3" fill="#2a2152"/><rect x="1405.5" y="1081.1" width="3.0" height="23.3" fill="#140c46"/><rect x="1460.7" y="1081.1" width="95.5" height="23.3" fill="#2a2152"/><rect x="1507.0" y="1081.1" width="3.0" height="23.3" fill="#140c46"/><rect x="1562.3" y="1081.1" width="95.5" height="23.3" fill="#2a2152"/><rect x="1608.5" y="1081.1" width="3.0" height="23.3" fill="#140c46"/><rect x="1669.8" y="1081.1" width="95.5" height="23.3" fill="#2a2152"/><rect x="1716.1" y="1081.1" width="3.0" height="23.3" fill="#140c46"/><rect x="1771.3" y="1081.1" width="95.5" height="23.3" fill="#2a2152"/><rect x="1817.6" y="1081.1" width="3.0" height="23.3" fill="#140c46"/><rect x="1872.8" y="1081.1" width="95.5" height="23.3" fill="#2a2152"/><rect x="1919.1" y="1081.1" width="3.0" height="23.3" fill="#140c46"/><rect x="1974.4" y="1081.1" width="95.5" height="23.3" fill="#2a2152"/><rect x="2020.6" y="1081.1" width="3.0" height="23.3" fill="#140c46"/><rect x="2081.9" y="1081.1" width="95.5" height="23.3" fill="#2a2152"/><rect x="2128.2" y="1081.1" width="3.0" height="23.3" fill="#140c46"/><rect x="2183.4" y="1081.1" width="95.5" height="23.3" fill="#2a2152"/><rect x="2229.7" y="1081.1" width="3.0" height="23.3" fill="#140c46"/><rect x="2284.9" y="1081.1" width="95.5" height="23.3" fill="#2a2152"/><rect x="2331.2" y="1081.1" width="3.0" height="23.3" fill="#140c46"/><rect x="2386.5" y="1081.1" width="95.5" height="23.3" fill="#2a2152"/><rect x="2432.7" y="1081.1" width="3.0" height="23.3" fill="#140c46"/><rect x="2494.0" y="1081.1" width="95.5" height="23.3" fill="#2a2152"/><rect x="2540.3" y="1081.1" width="3.0" height="23.3" fill="#140c46"/><rect x="2595.5" y="1081.1" width="95.5" height="23.3" fill="#2a2152"/><rect x="2641.8" y="1081.1" width="3.0" height="23.3" fill="#140c46"/><rect x="2697.0" y="1081.1" width="95.5" height="23.3" fill="#2a2152"/><rect x="2743.3" y="1081.1" width="3.0" height="23.3" fill="#140c46"/><rect x="2798.6" y="1081.1" width="95.5" height="23.3" fill="#2a2152"/><rect x="2844.8" y="1081.1" width="3.0" height="23.3" fill="#140c46"/><rect x="848.0" y="1107.9" width="93.1" height="23.3" fill="#2a2152"/><rect x="891.9" y="1107.9" width="3.0" height="23.3" fill="#140c46"/><rect x="947.1" y="1107.9" width="95.5" height="23.3" fill="#2a2152"/><rect x="993.4" y="1107.9" width="3.0" height="23.3" fill="#140c46"/><rect x="1048.6" y="1107.9" width="95.5" height="23.3" fill="#2a2152"/><rect x="1094.9" y="1107.9" width="3.0" height="23.3" fill="#140c46"/><rect x="1150.2" y="1107.9" width="95.5" height="23.3" fill="#2a2152"/><rect x="1196.4" y="1107.9" width="3.0" height="23.3" fill="#140c46"/><rect x="1257.7" y="1107.9" width="95.5" height="23.3" fill="#2a2152"/><rect x="1304.0" y="1107.9" width="3.0" height="23.3" fill="#140c46"/><rect x="1359.2" y="1107.9" width="95.5" height="23.3" fill="#2a2152"/><rect x="1405.5" y="1107.9" width="3.0" height="23.3" fill="#140c46"/><rect x="1460.7" y="1107.9" width="95.5" height="23.3" fill="#2a2152"/><rect x="1507.0" y="1107.9" width="3.0" height="23.3" fill="#140c46"/><rect x="1562.3" y="1107.9" width="95.5" height="23.3" fill="#2a2152"/><rect x="1608.5" y="1107.9" width="3.0" height="23.3" fill="#140c46"/><rect x="1669.8" y="1107.9" width="95.5" height="23.3" fill="#2a2152"/><rect x="1716.1" y="1107.9" width="3.0" height="23.3" fill="#140c46"/><rect x="1771.3" y="1107.9" width="95.5" height="23.3" fill="#2a2152"/><rect x="1817.6" y="1107.9" width="3.0" height="23.3" fill="#140c46"/><rect x="1872.8" y="1107.9" width="95.5" height="23.3" fill="#2a2152"/><rect x="1919.1" y="1107.9" width="3.0" height="23.3" fill="#140c46"/><rect x="1974.4" y="1107.9" width="95.5" height="23.3" fill="#2a2152"/><rect x="2020.6" y="1107.9" width="3.0" height="23.3" fill="#140c46"/><rect x="2081.9" y="1107.9" width="95.5" height="23.3" fill="#2a2152"/><rect x="2128.2" y="1107.9" width="3.0" height="23.3" fill="#140c46"/><rect x="2183.4" y="1107.9" width="95.5" height="23.3" fill="#2a2152"/><rect x="2229.7" y="1107.9" width="3.0" height="23.3" fill="#140c46"/><rect x="2284.9" y="1107.9" width="95.5" height="23.3" fill="#2a2152"/><rect x="2331.2" y="1107.9" width="3.0" height="23.3" fill="#140c46"/><rect x="2386.5" y="1107.9" width="95.5" height="23.3" fill="#2a2152"/><rect x="2432.7" y="1107.9" width="3.0" height="23.3" fill="#140c46"/><rect x="2494.0" y="1107.9" width="95.5" height="23.3" fill="#2a2152"/><rect x="2540.3" y="1107.9" width="3.0" height="23.3" fill="#140c46"/><rect x="2595.5" y="1107.9" width="95.5" height="23.3" fill="#2a2152"/><rect x="2641.8" y="1107.9" width="3.0" height="23.3" fill="#140c46"/><rect x="2697.0" y="1107.9" width="95.5" height="23.3" fill="#2a2152"/><rect x="2743.3" y="1107.9" width="3.0" height="23.3" fill="#140c46"/><rect x="2798.6" y="1107.9" width="95.5" height="23.3" fill="#2a2152"/><rect x="2844.8" y="1107.9" width="3.0" height="23.3" fill="#140c46"/><rect x="848.0" y="1134.7" width="93.1" height="23.3" fill="#171049"/><rect x="891.9" y="1134.7" width="3.0" height="23.3" fill="#100843"/><rect x="947.1" y="1134.7" width="95.5" height="23.3" fill="#171049"/><rect x="993.4" y="1134.7" width="3.0" height="23.3" fill="#100843"/><rect x="1048.6" y="1134.7" width="95.5" height="23.3" fill="#171049"/><rect x="1094.9" y="1134.7" width="3.0" height="23.3" fill="#100843"/><rect x="1150.2" y="1134.7" width="95.5" height="23.3" fill="#171049"/><rect x="1196.4" y="1134.7" width="3.0" height="23.3" fill="#100843"/><rect x="1257.7" y="1134.7" width="95.5" height="23.3" fill="#171049"/><rect x="1304.0" y="1134.7" width="3.0" height="23.3" fill="#100843"/><rect x="1359.2" y="1134.7" width="95.5" height="23.3" fill="#171049"/><rect x="1405.5" y="1134.7" width="3.0" height="23.3" fill="#100843"/><rect x="1460.7" y="1134.7" width="95.5" height="23.3" fill="#171049"/><rect x="1507.0" y="1134.7" width="3.0" height="23.3" fill="#100843"/><rect x="1562.3" y="1134.7" width="95.5" height="23.3" fill="#171049"/><rect x="1608.5" y="1134.7" width="3.0" height="23.3" fill="#100843"/><rect x="1669.8" y="1134.7" width="95.5" height="23.3" fill="#171049"/><rect x="1716.1" y="1134.7" width="3.0" height="23.3" fill="#100843"/><rect x="1771.3" y="1134.7" width="95.5" height="23.3" fill="#171049"/><rect x="1817.6" y="1134.7" width="3.0" height="23.3" fill="#100843"/><rect x="1872.8" y="1134.7" width="95.5" height="23.3" fill="#171049"/><rect x="1919.1" y="1134.7" width="3.0" height="23.3" fill="#100843"/><rect x="1974.4" y="1134.7" width="95.5" height="23.3" fill="#171049"/><rect x="2020.6" y="1134.7" width="3.0" height="23.3" fill="#100843"/><rect x="2081.9" y="1134.7" width="95.5" height="23.3" fill="#171049"/><rect x="2128.2" y="1134.7" width="3.0" height="23.3" fill="#100843"/><rect x="2183.4" y="1134.7" width="95.5" height="23.3" fill="#171049"/><rect x="2229.7" y="1134.7" width="3.0" height="23.3" fill="#100843"/><rect x="2284.9" y="1134.7" width="95.5" height="23.3" fill="#171049"/><rect x="2331.2" y="1134.7" width="3.0" height="23.3" fill="#100843"/><rect x="2386.5" y="1134.7" width="95.5" height="23.3" fill="#171049"/><rect x="2432.7" y="1134.7" width="3.0" height="23.3" fill="#100843"/><rect x="2494.0" y="1134.7" width="95.5" height="23.3" fill="#171049"/><rect x="2540.3" y="1134.7" width="3.0" height="23.3" fill="#100843"/><rect x="2595.5" y="1134.7" width="95.5" height="23.3" fill="#171049"/><rect x="2641.8" y="1134.7" width="3.0" height="23.3" fill="#100843"/><rect x="2697.0" y="1134.7" width="95.5" height="23.3" fill="#171049"/><rect x="2743.3" y="1134.7" width="3.0" height="23.3" fill="#100843"/><rect x="2798.6" y="1134.7" width="95.5" height="23.3" fill="#171049"/><rect x="2844.8" y="1134.7" width="3.0" height="23.3" fill="#100843"/><rect x="848.0" y="1161.5" width="93.1" height="23.3" fill="#2a2152"/><rect x="891.9" y="1161.5" width="3.0" height="23.3" fill="#140c46"/><rect x="947.1" y="1161.5" width="95.5" height="23.3" fill="#2a2152"/><rect x="993.4" y="1161.5" width="3.0" height="23.3" fill="#140c46"/><rect x="1048.6" y="1161.5" width="95.5" height="23.3" fill="#2a2152"/><rect x="1094.9" y="1161.5" width="3.0" height="23.3" fill="#140c46"/><rect x="1150.2" y="1161.5" width="95.5" height="23.3" fill="#2a2152"/><rect x="1196.4" y="1161.5" width="3.0" height="23.3" fill="#140c46"/><rect x="1257.7" y="1161.5" width="95.5" height="23.3" fill="#2a2152"/><rect x="1304.0" y="1161.5" width="3.0" height="23.3" fill="#140c46"/><rect x="1359.2" y="1161.5" width="95.5" height="23.3" fill="#2a2152"/><rect x="1405.5" y="1161.5" width="3.0" height="23.3" fill="#140c46"/><rect x="1460.7" y="1161.5" width="95.5" height="23.3" fill="#2a2152"/><rect x="1507.0" y="1161.5" width="3.0" height="23.3" fill="#140c46"/><rect x="1562.3" y="1161.5" width="95.5" height="23.3" fill="#2a2152"/><rect x="1608.5" y="1161.5" width="3.0" height="23.3" fill="#140c46"/><rect x="1669.8" y="1161.5" width="95.5" height="23.3" fill="#2a2152"/><rect x="1716.1" y="1161.5" width="3.0" height="23.3" fill="#140c46"/><rect x="1771.3" y="1161.5" width="95.5" height="23.3" fill="#2a2152"/><rect x="1817.6" y="1161.5" width="3.0" height="23.3" fill="#140c46"/><rect x="1872.8" y="1161.5" width="95.5" height="23.3" fill="#2a2152"/><rect x="1919.1" y="1161.5" width="3.0" height="23.3" fill="#140c46"/><rect x="1974.4" y="1161.5" width="95.5" height="23.3" fill="#2a2152"/><rect x="2020.6" y="1161.5" width="3.0" height="23.3" fill="#140c46"/><rect x="2081.9" y="1161.5" width="95.5" height="23.3" fill="#2a2152"/><rect x="2128.2" y="1161.5" width="3.0" height="23.3" fill="#140c46"/><rect x="2183.4" y="1161.5" width="95.5" height="23.3" fill="#2a2152"/><rect x="2229.7" y="1161.5" width="3.0" height="23.3" fill="#140c46"/><rect x="2284.9" y="1161.5" width="95.5" height="23.3" fill="#2a2152"/><rect x="2331.2" y="1161.5" width="3.0" height="23.3" fill="#140c46"/><rect x="2386.5" y="1161.5" width="95.5" height="23.3" fill="#2a2152"/><rect x="2432.7" y="1161.5" width="3.0" height="23.3" fill="#140c46"/><rect x="2494.0" y="1161.5" width="95.5" height="23.3" fill="#2a2152"/><rect x="2540.3" y="1161.5" width="3.0" height="23.3" fill="#140c46"/><rect x="2595.5" y="1161.5" width="95.5" height="23.3" fill="#2a2152"/><rect x="2641.8" y="1161.5" width="3.0" height="23.3" fill="#140c46"/><rect x="2697.0" y="1161.5" width="95.5" height="23.3" fill="#2a2152"/><rect x="2743.3" y="1161.5" width="3.0" height="23.3" fill="#140c46"/><rect x="2798.6" y="1161.5" width="95.5" height="23.3" fill="#2a2152"/><rect x="2844.8" y="1161.5" width="3.0" height="23.3" fill="#140c46"/><rect x="848.0" y="1188.3" width="93.1" height="23.3" fill="#171049"/><rect x="891.9" y="1188.3" width="3.0" height="23.3" fill="#100843"/><rect x="947.1" y="1188.3" width="95.5" height="23.3" fill="#171049"/><rect x="993.4" y="1188.3" width="3.0" height="23.3" fill="#100843"/><rect x="1048.6" y="1188.3" width="95.5" height="23.3" fill="#171049"/><rect x="1094.9" y="1188.3" width="3.0" height="23.3" fill="#100843"/><rect x="1150.2" y="1188.3" width="95.5" height="23.3" fill="#171049"/><rect x="1196.4" y="1188.3" width="3.0" height="23.3" fill="#100843"/><rect x="1257.7" y="1188.3" width="95.5" height="23.3" fill="#171049"/><rect x="1304.0" y="1188.3" width="3.0" height="23.3" fill="#100843"/><rect x="1359.2" y="1188.3" width="95.5" height="23.3" fill="#171049"/><rect x="1405.5" y="1188.3" width="3.0" height="23.3" fill="#100843"/><rect x="1460.7" y="1188.3" width="95.5" height="23.3" fill="#171049"/><rect x="1507.0" y="1188.3" width="3.0" height="23.3" fill="#100843"/><rect x="1562.3" y="1188.3" width="95.5" height="23.3" fill="#171049"/><rect x="1608.5" y="1188.3" width="3.0" height="23.3" fill="#100843"/><rect x="1669.8" y="1188.3" width="95.5" height="23.3" fill="#171049"/><rect x="1716.1" y="1188.3" width="3.0" height="23.3" fill="#100843"/><rect x="1771.3" y="1188.3" width="95.5" height="23.3" fill="#171049"/><rect x="1817.6" y="1188.3" width="3.0" height="23.3" fill="#100843"/><rect x="1872.8" y="1188.3" width="95.5" height="23.3" fill="#171049"/><rect x="1919.1" y="1188.3" width="3.0" height="23.3" fill="#100843"/><rect x="1974.4" y="1188.3" width="95.5" height="23.3" fill="#171049"/><rect x="2020.6" y="1188.3" width="3.0" height="23.3" fill="#100843"/><rect x="2081.9" y="1188.3" width="95.5" height="23.3" fill="#171049"/><rect x="2128.2" y="1188.3" width="3.0" height="23.3" fill="#100843"/><rect x="2183.4" y="1188.3" width="95.5" height="23.3" fill="#171049"/><rect x="2229.7" y="1188.3" width="3.0" height="23.3" fill="#100843"/><rect x="2284.9" y="1188.3" width="95.5" height="23.3" fill="#171049"/><rect x="2331.2" y="1188.3" width="3.0" height="23.3" fill="#100843"/><rect x="2386.5" y="1188.3" width="95.5" height="23.3" fill="#171049"/><rect x="2432.7" y="1188.3" width="3.0" height="23.3" fill="#100843"/><rect x="2494.0" y="1188.3" width="95.5" height="23.3" fill="#171049"/><rect x="2540.3" y="1188.3" width="3.0" height="23.3" fill="#100843"/><rect x="2595.5" y="1188.3" width="95.5" height="23.3" fill="#171049"/><rect x="2641.8" y="1188.3" width="3.0" height="23.3" fill="#100843"/><rect x="2697.0" y="1188.3" width="95.5" height="23.3" fill="#171049"/><rect x="2743.3" y="1188.3" width="3.0" height="23.3" fill="#100843"/><rect x="2798.6" y="1188.3" width="95.5" height="23.3" fill="#171049"/><rect x="2844.8" y="1188.3" width="3.0" height="23.3" fill="#100843"/><rect x="848.0" y="1215.1" width="93.1" height="23.3" fill="#2a2152"/><rect x="891.9" y="1215.1" width="3.0" height="23.3" fill="#140c46"/><rect x="947.1" y="1215.1" width="95.5" height="23.3" fill="#2a2152"/><rect x="993.4" y="1215.1" width="3.0" height="23.3" fill="#140c46"/><rect x="1048.6" y="1215.1" width="95.5" height="23.3" fill="#2a2152"/><rect x="1094.9" y="1215.1" width="3.0" height="23.3" fill="#140c46"/><rect x="1150.2" y="1215.1" width="95.5" height="23.3" fill="#2a2152"/><rect x="1196.4" y="1215.1" width="3.0" height="23.3" fill="#140c46"/><rect x="1257.7" y="1215.1" width="95.5" height="23.3" fill="#2a2152"/><rect x="1304.0" y="1215.1" width="3.0" height="23.3" fill="#140c46"/><rect x="1359.2" y="1215.1" width="95.5" height="23.3" fill="#2a2152"/><rect x="1405.5" y="1215.1" width="3.0" height="23.3" fill="#140c46"/><rect x="1460.7" y="1215.1" width="95.5" height="23.3" fill="#2a2152"/><rect x="1507.0" y="1215.1" width="3.0" height="23.3" fill="#140c46"/><rect x="1562.3" y="1215.1" width="95.5" height="23.3" fill="#2a2152"/><rect x="1608.5" y="1215.1" width="3.0" height="23.3" fill="#140c46"/><rect x="1669.8" y="1215.1" width="95.5" height="23.3" fill="#2a2152"/><rect x="1716.1" y="1215.1" width="3.0" height="23.3" fill="#140c46"/><rect x="1771.3" y="1215.1" width="95.5" height="23.3" fill="#2a2152"/><rect x="1817.6" y="1215.1" width="3.0" height="23.3" fill="#140c46"/><rect x="1872.8" y="1215.1" width="95.5" height="23.3" fill="#2a2152"/><rect x="1919.1" y="1215.1" width="3.0" height="23.3" fill="#140c46"/><rect x="1974.4" y="1215.1" width="95.5" height="23.3" fill="#2a2152"/><rect x="2020.6" y="1215.1" width="3.0" height="23.3" fill="#140c46"/><rect x="2081.9" y="1215.1" width="95.5" height="23.3" fill="#2a2152"/><rect x="2128.2" y="1215.1" width="3.0" height="23.3" fill="#140c46"/><rect x="2183.4" y="1215.1" width="95.5" height="23.3" fill="#2a2152"/><rect x="2229.7" y="1215.1" width="3.0" height="23.3" fill="#140c46"/><rect x="2284.9" y="1215.1" width="95.5" height="23.3" fill="#2a2152"/><rect x="2331.2" y="1215.1" width="3.0" height="23.3" fill="#140c46"/><rect x="2386.5" y="1215.1" width="95.5" height="23.3" fill="#2a2152"/><rect x="2432.7" y="1215.1" width="3.0" height="23.3" fill="#140c46"/><rect x="2494.0" y="1215.1" width="95.5" height="23.3" fill="#2a2152"/><rect x="2540.3" y="1215.1" width="3.0" height="23.3" fill="#140c46"/><rect x="2595.5" y="1215.1" width="95.5" height="23.3" fill="#2a2152"/><rect x="2641.8" y="1215.1" width="3.0" height="23.3" fill="#140c46"/><rect x="2697.0" y="1215.1" width="95.5" height="23.3" fill="#2a2152"/><rect x="2743.3" y="1215.1" width="3.0" height="23.3" fill="#140c46"/><rect x="2798.6" y="1215.1" width="95.5" height="23.3" fill="#2a2152"/><rect x="2844.8" y="1215.1" width="3.0" height="23.3" fill="#140c46"/><rect x="848.0" y="1241.9" width="93.1" height="23.3" fill="#2a2152"/><rect x="891.9" y="1241.9" width="3.0" height="23.3" fill="#140c46"/><rect x="947.1" y="1241.9" width="95.5" height="23.3" fill="#2a2152"/><rect x="993.4" y="1241.9" width="3.0" height="23.3" fill="#140c46"/><rect x="1048.6" y="1241.9" width="95.5" height="23.3" fill="#2a2152"/><rect x="1094.9" y="1241.9" width="3.0" height="23.3" fill="#140c46"/><rect x="1150.2" y="1241.9" width="95.5" height="23.3" fill="#2a2152"/><rect x="1196.4" y="1241.9" width="3.0" height="23.3" fill="#140c46"/><rect x="1257.7" y="1241.9" width="95.5" height="23.3" fill="#2a2152"/><rect x="1304.0" y="1241.9" width="3.0" height="23.3" fill="#140c46"/><rect x="1359.2" y="1241.9" width="95.5" height="23.3" fill="#2a2152"/><rect x="1405.5" y="1241.9" width="3.0" height="23.3" fill="#140c46"/><rect x="1460.7" y="1241.9" width="95.5" height="23.3" fill="#2a2152"/><rect x="1507.0" y="1241.9" width="3.0" height="23.3" fill="#140c46"/><rect x="1562.3" y="1241.9" width="95.5" height="23.3" fill="#2a2152"/><rect x="1608.5" y="1241.9" width="3.0" height="23.3" fill="#140c46"/><rect x="1669.8" y="1241.9" width="95.5" height="23.3" fill="#2a2152"/><rect x="1716.1" y="1241.9" width="3.0" height="23.3" fill="#140c46"/><rect x="1771.3" y="1241.9" width="95.5" height="23.3" fill="#2a2152"/><rect x="1817.6" y="1241.9" width="3.0" height="23.3" fill="#140c46"/><rect x="1872.8" y="1241.9" width="95.5" height="23.3" fill="#2a2152"/><rect x="1919.1" y="1241.9" width="3.0" height="23.3" fill="#140c46"/><rect x="1974.4" y="1241.9" width="95.5" height="23.3" fill="#2a2152"/><rect x="2020.6" y="1241.9" width="3.0" height="23.3" fill="#140c46"/><rect x="2081.9" y="1241.9" width="95.5" height="23.3" fill="#2a2152"/><rect x="2128.2" y="1241.9" width="3.0" height="23.3" fill="#140c46"/><rect x="2183.4" y="1241.9" width="95.5" height="23.3" fill="#2a2152"/><rect x="2229.7" y="1241.9" width="3.0" height="23.3" fill="#140c46"/><rect x="2284.9" y="1241.9" width="95.5" height="23.3" fill="#2a2152"/><rect x="2331.2" y="1241.9" width="3.0" height="23.3" fill="#140c46"/><rect x="2386.5" y="1241.9" width="95.5" height="23.3" fill="#2a2152"/><rect x="2432.7" y="1241.9" width="3.0" height="23.3" fill="#140c46"/><rect x="2494.0" y="1241.9" width="95.5" height="23.3" fill="#2a2152"/><rect x="2540.3" y="1241.9" width="3.0" height="23.3" fill="#140c46"/><rect x="2595.5" y="1241.9" width="95.5" height="23.3" fill="#2a2152"/><rect x="2641.8" y="1241.9" width="3.0" height="23.3" fill="#140c46"/><rect x="2697.0" y="1241.9" width="95.5" height="23.3" fill="#2a2152"/><rect x="2743.3" y="1241.9" width="3.0" height="23.3" fill="#140c46"/><rect x="2798.6" y="1241.9" width="95.5" height="23.3" fill="#2a2152"/><rect x="2844.8" y="1241.9" width="3.0" height="23.3" fill="#140c46"/><rect x="848.0" y="1268.7" width="93.1" height="23.3" fill="#171049"/><rect x="891.9" y="1268.7" width="3.0" height="23.3" fill="#100843"/><rect x="947.1" y="1268.7" width="95.5" height="23.3" fill="#171049"/><rect x="993.4" y="1268.7" width="3.0" height="23.3" fill="#100843"/><rect x="1048.6" y="1268.7" width="95.5" height="23.3" fill="#171049"/><rect x="1094.9" y="1268.7" width="3.0" height="23.3" fill="#100843"/><rect x="1150.2" y="1268.7" width="95.5" height="23.3" fill="#171049"/><rect x="1196.4" y="1268.7" width="3.0" height="23.3" fill="#100843"/><rect x="1257.7" y="1268.7" width="95.5" height="23.3" fill="#171049"/><rect x="1304.0" y="1268.7" width="3.0" height="23.3" fill="#100843"/><rect x="1359.2" y="1268.7" width="95.5" height="23.3" fill="#171049"/><rect x="1405.5" y="1268.7" width="3.0" height="23.3" fill="#100843"/><rect x="1460.7" y="1268.7" width="95.5" height="23.3" fill="#171049"/><rect x="1507.0" y="1268.7" width="3.0" height="23.3" fill="#100843"/><rect x="1562.3" y="1268.7" width="95.5" height="23.3" fill="#171049"/><rect x="1608.5" y="1268.7" width="3.0" height="23.3" fill="#100843"/><rect x="1669.8" y="1268.7" width="95.5" height="23.3" fill="#171049"/><rect x="1716.1" y="1268.7" width="3.0" height="23.3" fill="#100843"/><rect x="1771.3" y="1268.7" width="95.5" height="23.3" fill="#171049"/><rect x="1817.6" y="1268.7" width="3.0" height="23.3" fill="#100843"/><rect x="1872.8" y="1268.7" width="95.5" height="23.3" fill="#171049"/><rect x="1919.1" y="1268.7" width="3.0" height="23.3" fill="#100843"/><rect x="1974.4" y="1268.7" width="95.5" height="23.3" fill="#171049"/><rect x="2020.6" y="1268.7" width="3.0" height="23.3" fill="#100843"/><rect x="2081.9" y="1268.7" width="95.5" height="23.3" fill="#171049"/><rect x="2128.2" y="1268.7" width="3.0" height="23.3" fill="#100843"/><rect x="2183.4" y="1268.7" width="95.5" height="23.3" fill="#171049"/><rect x="2229.7" y="1268.7" width="3.0" height="23.3" fill="#100843"/><rect x="2284.9" y="1268.7" width="95.5" height="23.3" fill="#171049"/><rect x="2331.2" y="1268.7" width="3.0" height="23.3" fill="#100843"/><rect x="2386.5" y="1268.7" width="95.5" height="23.3" fill="#171049"/><rect x="2432.7" y="1268.7" width="3.0" height="23.3" fill="#100843"/><rect x="2494.0" y="1268.7" width="95.5" height="23.3" fill="#171049"/><rect x="2540.3" y="1268.7" width="3.0" height="23.3" fill="#100843"/><rect x="2595.5" y="1268.7" width="95.5" height="23.3" fill="#171049"/><rect x="2641.8" y="1268.7" width="3.0" height="23.3" fill="#100843"/><rect x="2697.0" y="1268.7" width="95.5" height="23.3" fill="#171049"/><rect x="2743.3" y="1268.7" width="3.0" height="23.3" fill="#100843"/><rect x="2798.6" y="1268.7" width="95.5" height="23.3" fill="#171049"/><rect x="2844.8" y="1268.7" width="3.0" height="23.3" fill="#100843"/><rect x="848.0" y="1295.5" width="93.1" height="23.3" fill="#2a2152"/><rect x="891.9" y="1295.5" width="3.0" height="23.3" fill="#140c46"/><rect x="947.1" y="1295.5" width="95.5" height="23.3" fill="#2a2152"/><rect x="993.4" y="1295.5" width="3.0" height="23.3" fill="#140c46"/><rect x="1048.6" y="1295.5" width="95.5" height="23.3" fill="#2a2152"/><rect x="1094.9" y="1295.5" width="3.0" height="23.3" fill="#140c46"/><rect x="1150.2" y="1295.5" width="95.5" height="23.3" fill="#2a2152"/><rect x="1196.4" y="1295.5" width="3.0" height="23.3" fill="#140c46"/><rect x="1257.7" y="1295.5" width="95.5" height="23.3" fill="#2a2152"/><rect x="1304.0" y="1295.5" width="3.0" height="23.3" fill="#140c46"/><rect x="1359.2" y="1295.5" width="95.5" height="23.3" fill="#2a2152"/><rect x="1405.5" y="1295.5" width="3.0" height="23.3" fill="#140c46"/><rect x="1460.7" y="1295.5" width="95.5" height="23.3" fill="#2a2152"/><rect x="1507.0" y="1295.5" width="3.0" height="23.3" fill="#140c46"/><rect x="1562.3" y="1295.5" width="95.5" height="23.3" fill="#2a2152"/><rect x="1608.5" y="1295.5" width="3.0" height="23.3" fill="#140c46"/><rect x="1669.8" y="1295.5" width="95.5" height="23.3" fill="#2a2152"/><rect x="1716.1" y="1295.5" width="3.0" height="23.3" fill="#140c46"/><rect x="1771.3" y="1295.5" width="95.5" height="23.3" fill="#2a2152"/><rect x="1817.6" y="1295.5" width="3.0" height="23.3" fill="#140c46"/><rect x="1872.8" y="1295.5" width="95.5" height="23.3" fill="#2a2152"/><rect x="1919.1" y="1295.5" width="3.0" height="23.3" fill="#140c46"/><rect x="1974.4" y="1295.5" width="95.5" height="23.3" fill="#2a2152"/><rect x="2020.6" y="1295.5" width="3.0" height="23.3" fill="#140c46"/><rect x="2081.9" y="1295.5" width="95.5" height="23.3" fill="#2a2152"/><rect x="2128.2" y="1295.5" width="3.0" height="23.3" fill="#140c46"/><rect x="2183.4" y="1295.5" width="95.5" height="23.3" fill="#2a2152"/><rect x="2229.7" y="1295.5" width="3.0" height="23.3" fill="#140c46"/><rect x="2284.9" y="1295.5" width="95.5" height="23.3" fill="#2a2152"/><rect x="2331.2" y="1295.5" width="3.0" height="23.3" fill="#140c46"/><rect x="2386.5" y="1295.5" width="95.5" height="23.3" fill="#2a2152"/><rect x="2432.7" y="1295.5" width="3.0" height="23.3" fill="#140c46"/><rect x="2494.0" y="1295.5" width="95.5" height="23.3" fill="#2a2152"/><rect x="2540.3" y="1295.5" width="3.0" height="23.3" fill="#140c46"/><rect x="2595.5" y="1295.5" width="95.5" height="23.3" fill="#2a2152"/><rect x="2641.8" y="1295.5" width="3.0" height="23.3" fill="#140c46"/><rect x="2697.0" y="1295.5" width="95.5" height="23.3" fill="#2a2152"/><rect x="2743.3" y="1295.5" width="3.0" height="23.3" fill="#140c46"/><rect x="2798.6" y="1295.5" width="95.5" height="23.3" fill="#2a2152"/><rect x="2844.8" y="1295.5" width="3.0" height="23.3" fill="#140c46"/><rect x="848.0" y="1322.3" width="93.1" height="23.3" fill="#171049"/><rect x="891.9" y="1322.3" width="3.0" height="23.3" fill="#100843"/><rect x="947.1" y="1322.3" width="95.5" height="23.3" fill="#171049"/><rect x="993.4" y="1322.3" width="3.0" height="23.3" fill="#100843"/><rect x="1048.6" y="1322.3" width="95.5" height="23.3" fill="#171049"/><rect x="1094.9" y="1322.3" width="3.0" height="23.3" fill="#100843"/><rect x="1150.2" y="1322.3" width="95.5" height="23.3" fill="#171049"/><rect x="1196.4" y="1322.3" width="3.0" height="23.3" fill="#100843"/><rect x="1257.7" y="1322.3" width="95.5" height="23.3" fill="#171049"/><rect x="1304.0" y="1322.3" width="3.0" height="23.3" fill="#100843"/><rect x="1359.2" y="1322.3" width="95.5" height="23.3" fill="#171049"/><rect x="1405.5" y="1322.3" width="3.0" height="23.3" fill="#100843"/><rect x="1460.7" y="1322.3" width="95.5" height="23.3" fill="#171049"/><rect x="1507.0" y="1322.3" width="3.0" height="23.3" fill="#100843"/><rect x="1562.3" y="1322.3" width="95.5" height="23.3" fill="#171049"/><rect x="1608.5" y="1322.3" width="3.0" height="23.3" fill="#100843"/><rect x="1669.8" y="1322.3" width="95.5" height="23.3" fill="#171049"/><rect x="1716.1" y="1322.3" width="3.0" height="23.3" fill="#100843"/><rect x="1771.3" y="1322.3" width="95.5" height="23.3" fill="#171049"/><rect x="1817.6" y="1322.3" width="3.0" height="23.3" fill="#100843"/><rect x="1872.8" y="1322.3" width="95.5" height="23.3" fill="#171049"/><rect x="1919.1" y="1322.3" width="3.0" height="23.3" fill="#100843"/><rect x="1974.4" y="1322.3" width="95.5" height="23.3" fill="#171049"/><rect x="2020.6" y="1322.3" width="3.0" height="23.3" fill="#100843"/><rect x="2081.9" y="1322.3" width="95.5" height="23.3" fill="#171049"/><rect x="2128.2" y="1322.3" width="3.0" height="23.3" fill="#100843"/><rect x="2183.4" y="1322.3" width="95.5" height="23.3" fill="#171049"/><rect x="2229.7" y="1322.3" width="3.0" height="23.3" fill="#100843"/><rect x="2284.9" y="1322.3" width="95.5" height="23.3" fill="#171049"/><rect x="2331.2" y="1322.3" width="3.0" height="23.3" fill="#100843"/><rect x="2386.5" y="1322.3" width="95.5" height="23.3" fill="#171049"/><rect x="2432.7" y="1322.3" width="3.0" height="23.3" fill="#100843"/><rect x="2494.0" y="1322.3" width="95.5" height="23.3" fill="#171049"/><rect x="2540.3" y="1322.3" width="3.0" height="23.3" fill="#100843"/><rect x="2595.5" y="1322.3" width="95.5" height="23.3" fill="#171049"/><rect x="2641.8" y="1322.3" width="3.0" height="23.3" fill="#100843"/><rect x="2697.0" y="1322.3" width="95.5" height="23.3" fill="#171049"/><rect x="2743.3" y="1322.3" width="3.0" height="23.3" fill="#100843"/><rect x="2798.6" y="1322.3" width="95.5" height="23.3" fill="#171049"/><rect x="2844.8" y="1322.3" width="3.0" height="23.3" fill="#100843"/><rect x="848.0" y="1349.1" width="93.1" height="23.3" fill="#2a2152"/><rect x="891.9" y="1349.1" width="3.0" height="23.3" fill="#140c46"/><rect x="947.1" y="1349.1" width="95.5" height="23.3" fill="#2a2152"/><rect x="993.4" y="1349.1" width="3.0" height="23.3" fill="#140c46"/><rect x="1048.6" y="1349.1" width="95.5" height="23.3" fill="#2a2152"/><rect x="1094.9" y="1349.1" width="3.0" height="23.3" fill="#140c46"/><rect x="1150.2" y="1349.1" width="95.5" height="23.3" fill="#2a2152"/><rect x="1196.4" y="1349.1" width="3.0" height="23.3" fill="#140c46"/><rect x="1257.7" y="1349.1" width="95.5" height="23.3" fill="#2a2152"/><rect x="1304.0" y="1349.1" width="3.0" height="23.3" fill="#140c46"/><rect x="1359.2" y="1349.1" width="95.5" height="23.3" fill="#2a2152"/><rect x="1405.5" y="1349.1" width="3.0" height="23.3" fill="#140c46"/><rect x="1460.7" y="1349.1" width="95.5" height="23.3" fill="#2a2152"/><rect x="1507.0" y="1349.1" width="3.0" height="23.3" fill="#140c46"/><rect x="1562.3" y="1349.1" width="95.5" height="23.3" fill="#2a2152"/><rect x="1608.5" y="1349.1" width="3.0" height="23.3" fill="#140c46"/><rect x="1669.8" y="1349.1" width="95.5" height="23.3" fill="#2a2152"/><rect x="1716.1" y="1349.1" width="3.0" height="23.3" fill="#140c46"/><rect x="1771.3" y="1349.1" width="95.5" height="23.3" fill="#2a2152"/><rect x="1817.6" y="1349.1" width="3.0" height="23.3" fill="#140c46"/><rect x="1872.8" y="1349.1" width="95.5" height="23.3" fill="#2a2152"/><rect x="1919.1" y="1349.1" width="3.0" height="23.3" fill="#140c46"/><rect x="1974.4" y="1349.1" width="95.5" height="23.3" fill="#2a2152"/><rect x="2020.6" y="1349.1" width="3.0" height="23.3" fill="#140c46"/><rect x="2081.9" y="1349.1" width="95.5" height="23.3" fill="#2a2152"/><rect x="2128.2" y="1349.1" width="3.0" height="23.3" fill="#140c46"/><rect x="2183.4" y="1349.1" width="95.5" height="23.3" fill="#2a2152"/><rect x="2229.7" y="1349.1" width="3.0" height="23.3" fill="#140c46"/><rect x="2284.9" y="1349.1" width="95.5" height="23.3" fill="#2a2152"/><rect x="2331.2" y="1349.1" width="3.0" height="23.3" fill="#140c46"/><rect x="2386.5" y="1349.1" width="95.5" height="23.3" fill="#2a2152"/><rect x="2432.7" y="1349.1" width="3.0" height="23.3" fill="#140c46"/><rect x="2494.0" y="1349.1" width="95.5" height="23.3" fill="#2a2152"/><rect x="2540.3" y="1349.1" width="3.0" height="23.3" fill="#140c46"/><rect x="2595.5" y="1349.1" width="95.5" height="23.3" fill="#2a2152"/><rect x="2641.8" y="1349.1" width="3.0" height="23.3" fill="#140c46"/><rect x="2697.0" y="1349.1" width="95.5" height="23.3" fill="#2a2152"/><rect x="2743.3" y="1349.1" width="3.0" height="23.3" fill="#140c46"/><rect x="2798.6" y="1349.1" width="95.5" height="23.3" fill="#2a2152"/><rect x="2844.8" y="1349.1" width="3.0" height="23.3" fill="#140c46"/><rect x="848.0" y="1375.9" width="93.1" height="23.3" fill="#171049"/><rect x="891.9" y="1375.9" width="3.0" height="23.3" fill="#100843"/><rect x="947.1" y="1375.9" width="95.5" height="23.3" fill="#171049"/><rect x="993.4" y="1375.9" width="3.0" height="23.3" fill="#100843"/><rect x="1048.6" y="1375.9" width="95.5" height="23.3" fill="#171049"/><rect x="1094.9" y="1375.9" width="3.0" height="23.3" fill="#100843"/><rect x="1150.2" y="1375.9" width="95.5" height="23.3" fill="#171049"/><rect x="1196.4" y="1375.9" width="3.0" height="23.3" fill="#100843"/><rect x="1257.7" y="1375.9" width="95.5" height="23.3" fill="#171049"/><rect x="1304.0" y="1375.9" width="3.0" height="23.3" fill="#100843"/><rect x="1359.2" y="1375.9" width="95.5" height="23.3" fill="#171049"/><rect x="1405.5" y="1375.9" width="3.0" height="23.3" fill="#100843"/><rect x="1460.7" y="1375.9" width="95.5" height="23.3" fill="#171049"/><rect x="1507.0" y="1375.9" width="3.0" height="23.3" fill="#100843"/><rect x="1562.3" y="1375.9" width="95.5" height="23.3" fill="#171049"/><rect x="1608.5" y="1375.9" width="3.0" height="23.3" fill="#100843"/><rect x="1669.8" y="1375.9" width="95.5" height="23.3" fill="#171049"/><rect x="1716.1" y="1375.9" width="3.0" height="23.3" fill="#100843"/><rect x="1771.3" y="1375.9" width="95.5" height="23.3" fill="#171049"/><rect x="1817.6" y="1375.9" width="3.0" height="23.3" fill="#100843"/><rect x="1872.8" y="1375.9" width="95.5" height="23.3" fill="#171049"/><rect x="1919.1" y="1375.9" width="3.0" height="23.3" fill="#100843"/><rect x="1974.4" y="1375.9" width="95.5" height="23.3" fill="#171049"/><rect x="2020.6" y="1375.9" width="3.0" height="23.3" fill="#100843"/><rect x="2081.9" y="1375.9" width="95.5" height="23.3" fill="#171049"/><rect x="2128.2" y="1375.9" width="3.0" height="23.3" fill="#100843"/><rect x="2183.4" y="1375.9" width="95.5" height="23.3" fill="#171049"/><rect x="2229.7" y="1375.9" width="3.0" height="23.3" fill="#100843"/><rect x="2284.9" y="1375.9" width="95.5" height="23.3" fill="#171049"/><rect x="2331.2" y="1375.9" width="3.0" height="23.3" fill="#100843"/><rect x="2386.5" y="1375.9" width="95.5" height="23.3" fill="#171049"/><rect x="2432.7" y="1375.9" width="3.0" height="23.3" fill="#100843"/><rect x="2494.0" y="1375.9" width="95.5" height="23.3" fill="#171049"/><rect x="2540.3" y="1375.9" width="3.0" height="23.3" fill="#100843"/><rect x="2595.5" y="1375.9" width="95.5" height="23.3" fill="#171049"/><rect x="2641.8" y="1375.9" width="3.0" height="23.3" fill="#100843"/><rect x="2697.0" y="1375.9" width="95.5" height="23.3" fill="#171049"/><rect x="2743.3" y="1375.9" width="3.0" height="23.3" fill="#100843"/><rect x="2798.6" y="1375.9" width="95.5" height="23.3" fill="#171049"/><rect x="2844.8" y="1375.9" width="3.0" height="23.3" fill="#100843"/><rect x="848.0" y="1402.7" width="93.1" height="23.3" fill="#2a2152"/><rect x="891.9" y="1402.7" width="3.0" height="23.3" fill="#140c46"/><rect x="947.1" y="1402.7" width="95.5" height="23.3" fill="#2a2152"/><rect x="993.4" y="1402.7" width="3.0" height="23.3" fill="#140c46"/><rect x="1048.6" y="1402.7" width="95.5" height="23.3" fill="#2a2152"/><rect x="1094.9" y="1402.7" width="3.0" height="23.3" fill="#140c46"/><rect x="1150.2" y="1402.7" width="95.5" height="23.3" fill="#2a2152"/><rect x="1196.4" y="1402.7" width="3.0" height="23.3" fill="#140c46"/><rect x="1257.7" y="1402.7" width="95.5" height="23.3" fill="#2a2152"/><rect x="1304.0" y="1402.7" width="3.0" height="23.3" fill="#140c46"/><rect x="1359.2" y="1402.7" width="95.5" height="23.3" fill="#2a2152"/><rect x="1405.5" y="1402.7" width="3.0" height="23.3" fill="#140c46"/><rect x="1460.7" y="1402.7" width="95.5" height="23.3" fill="#2a2152"/><rect x="1507.0" y="1402.7" width="3.0" height="23.3" fill="#140c46"/><rect x="1562.3" y="1402.7" width="95.5" height="23.3" fill="#2a2152"/><rect x="1608.5" y="1402.7" width="3.0" height="23.3" fill="#140c46"/><rect x="1669.8" y="1402.7" width="95.5" height="23.3" fill="#2a2152"/><rect x="1716.1" y="1402.7" width="3.0" height="23.3" fill="#140c46"/><rect x="1771.3" y="1402.7" width="95.5" height="23.3" fill="#2a2152"/><rect x="1817.6" y="1402.7" width="3.0" height="23.3" fill="#140c46"/><rect x="1872.8" y="1402.7" width="95.5" height="23.3" fill="#2a2152"/><rect x="1919.1" y="1402.7" width="3.0" height="23.3" fill="#140c46"/><rect x="1974.4" y="1402.7" width="95.5" height="23.3" fill="#2a2152"/><rect x="2020.6" y="1402.7" width="3.0" height="23.3" fill="#140c46"/><rect x="2081.9" y="1402.7" width="95.5" height="23.3" fill="#2a2152"/><rect x="2128.2" y="1402.7" width="3.0" height="23.3" fill="#140c46"/><rect x="2183.4" y="1402.7" width="95.5" height="23.3" fill="#2a2152"/><rect x="2229.7" y="1402.7" width="3.0" height="23.3" fill="#140c46"/><rect x="2284.9" y="1402.7" width="95.5" height="23.3" fill="#2a2152"/><rect x="2331.2" y="1402.7" width="3.0" height="23.3" fill="#140c46"/><rect x="2386.5" y="1402.7" width="95.5" height="23.3" fill="#2a2152"/><rect x="2432.7" y="1402.7" width="3.0" height="23.3" fill="#140c46"/><rect x="2494.0" y="1402.7" width="95.5" height="23.3" fill="#2a2152"/><rect x="2540.3" y="1402.7" width="3.0" height="23.3" fill="#140c46"/><rect x="2595.5" y="1402.7" width="95.5" height="23.3" fill="#2a2152"/><rect x="2641.8" y="1402.7" width="3.0" height="23.3" fill="#140c46"/><rect x="2697.0" y="1402.7" width="95.5" height="23.3" fill="#2a2152"/><rect x="2743.3" y="1402.7" width="3.0" height="23.3" fill="#140c46"/><rect x="2798.6" y="1402.7" width="95.5" height="23.3" fill="#2a2152"/><rect x="2844.8" y="1402.7" width="3.0" height="23.3" fill="#140c46"/><rect x="848.0" y="1429.5" width="93.1" height="23.3" fill="#2a2152"/><rect x="891.9" y="1429.5" width="3.0" height="23.3" fill="#140c46"/><rect x="947.1" y="1429.5" width="95.5" height="23.3" fill="#2a2152"/><rect x="993.4" y="1429.5" width="3.0" height="23.3" fill="#140c46"/><rect x="1048.6" y="1429.5" width="95.5" height="23.3" fill="#2a2152"/><rect x="1094.9" y="1429.5" width="3.0" height="23.3" fill="#140c46"/><rect x="1150.2" y="1429.5" width="95.5" height="23.3" fill="#2a2152"/><rect x="1196.4" y="1429.5" width="3.0" height="23.3" fill="#140c46"/><rect x="1257.7" y="1429.5" width="95.5" height="23.3" fill="#2a2152"/><rect x="1304.0" y="1429.5" width="3.0" height="23.3" fill="#140c46"/><rect x="1359.2" y="1429.5" width="95.5" height="23.3" fill="#2a2152"/><rect x="1405.5" y="1429.5" width="3.0" height="23.3" fill="#140c46"/><rect x="1460.7" y="1429.5" width="95.5" height="23.3" fill="#2a2152"/><rect x="1507.0" y="1429.5" width="3.0" height="23.3" fill="#140c46"/><rect x="1562.3" y="1429.5" width="95.5" height="23.3" fill="#2a2152"/><rect x="1608.5" y="1429.5" width="3.0" height="23.3" fill="#140c46"/><rect x="1669.8" y="1429.5" width="95.5" height="23.3" fill="#2a2152"/><rect x="1716.1" y="1429.5" width="3.0" height="23.3" fill="#140c46"/><rect x="1771.3" y="1429.5" width="95.5" height="23.3" fill="#2a2152"/><rect x="1817.6" y="1429.5" width="3.0" height="23.3" fill="#140c46"/><rect x="1872.8" y="1429.5" width="95.5" height="23.3" fill="#2a2152"/><rect x="1919.1" y="1429.5" width="3.0" height="23.3" fill="#140c46"/><rect x="1974.4" y="1429.5" width="95.5" height="23.3" fill="#2a2152"/><rect x="2020.6" y="1429.5" width="3.0" height="23.3" fill="#140c46"/><rect x="2081.9" y="1429.5" width="95.5" height="23.3" fill="#2a2152"/><rect x="2128.2" y="1429.5" width="3.0" height="23.3" fill="#140c46"/><rect x="2183.4" y="1429.5" width="95.5" height="23.3" fill="#2a2152"/><rect x="2229.7" y="1429.5" width="3.0" height="23.3" fill="#140c46"/><rect x="2284.9" y="1429.5" width="95.5" height="23.3" fill="#2a2152"/><rect x="2331.2" y="1429.5" width="3.0" height="23.3" fill="#140c46"/><rect x="2386.5" y="1429.5" width="95.5" height="23.3" fill="#2a2152"/><rect x="2432.7" y="1429.5" width="3.0" height="23.3" fill="#140c46"/><rect x="2494.0" y="1429.5" width="95.5" height="23.3" fill="#2a2152"/><rect x="2540.3" y="1429.5" width="3.0" height="23.3" fill="#140c46"/><rect x="2595.5" y="1429.5" width="95.5" height="23.3" fill="#2a2152"/><rect x="2641.8" y="1429.5" width="3.0" height="23.3" fill="#140c46"/><rect x="2697.0" y="1429.5" width="95.5" height="23.3" fill="#2a2152"/><rect x="2743.3" y="1429.5" width="3.0" height="23.3" fill="#140c46"/><rect x="2798.6" y="1429.5" width="95.5" height="23.3" fill="#2a2152"/><rect x="2844.8" y="1429.5" width="3.0" height="23.3" fill="#140c46"/><rect x="848.0" y="1456.3" width="93.1" height="23.3" fill="#171049"/><rect x="891.9" y="1456.3" width="3.0" height="23.3" fill="#100843"/><rect x="947.1" y="1456.3" width="95.5" height="23.3" fill="#171049"/><rect x="993.4" y="1456.3" width="3.0" height="23.3" fill="#100843"/><rect x="1048.6" y="1456.3" width="95.5" height="23.3" fill="#171049"/><rect x="1094.9" y="1456.3" width="3.0" height="23.3" fill="#100843"/><rect x="1150.2" y="1456.3" width="95.5" height="23.3" fill="#171049"/><rect x="1196.4" y="1456.3" width="3.0" height="23.3" fill="#100843"/><rect x="1257.7" y="1456.3" width="95.5" height="23.3" fill="#171049"/><rect x="1304.0" y="1456.3" width="3.0" height="23.3" fill="#100843"/><rect x="1359.2" y="1456.3" width="95.5" height="23.3" fill="#171049"/><rect x="1405.5" y="1456.3" width="3.0" height="23.3" fill="#100843"/><rect x="1460.7" y="1456.3" width="95.5" height="23.3" fill="#171049"/><rect x="1507.0" y="1456.3" width="3.0" height="23.3" fill="#100843"/><rect x="1562.3" y="1456.3" width="95.5" height="23.3" fill="#171049"/><rect x="1608.5" y="1456.3" width="3.0" height="23.3" fill="#100843"/><rect x="1669.8" y="1456.3" width="95.5" height="23.3" fill="#171049"/><rect x="1716.1" y="1456.3" width="3.0" height="23.3" fill="#100843"/><rect x="1771.3" y="1456.3" width="95.5" height="23.3" fill="#171049"/><rect x="1817.6" y="1456.3" width="3.0" height="23.3" fill="#100843"/><rect x="1872.8" y="1456.3" width="95.5" height="23.3" fill="#171049"/><rect x="1919.1" y="1456.3" width="3.0" height="23.3" fill="#100843"/><rect x="1974.4" y="1456.3" width="95.5" height="23.3" fill="#171049"/><rect x="2020.6" y="1456.3" width="3.0" height="23.3" fill="#100843"/><rect x="2081.9" y="1456.3" width="95.5" height="23.3" fill="#171049"/><rect x="2128.2" y="1456.3" width="3.0" height="23.3" fill="#100843"/><rect x="2183.4" y="1456.3" width="95.5" height="23.3" fill="#171049"/><rect x="2229.7" y="1456.3" width="3.0" height="23.3" fill="#100843"/><rect x="2284.9" y="1456.3" width="95.5" height="23.3" fill="#171049"/><rect x="2331.2" y="1456.3" width="3.0" height="23.3" fill="#100843"/><rect x="2386.5" y="1456.3" width="95.5" height="23.3" fill="#171049"/><rect x="2432.7" y="1456.3" width="3.0" height="23.3" fill="#100843"/><rect x="2494.0" y="1456.3" width="95.5" height="23.3" fill="#171049"/><rect x="2540.3" y="1456.3" width="3.0" height="23.3" fill="#100843"/><rect x="2595.5" y="1456.3" width="95.5" height="23.3" fill="#171049"/><rect x="2641.8" y="1456.3" width="3.0" height="23.3" fill="#100843"/><rect x="2697.0" y="1456.3" width="95.5" height="23.3" fill="#171049"/><rect x="2743.3" y="1456.3" width="3.0" height="23.3" fill="#100843"/><rect x="2798.6" y="1456.3" width="95.5" height="23.3" fill="#171049"/><rect x="2844.8" y="1456.3" width="3.0" height="23.3" fill="#100843"/><rect x="848.0" y="1483.1" width="93.1" height="23.3" fill="#2a2152"/><rect x="891.9" y="1483.1" width="3.0" height="23.3" fill="#140c46"/><rect x="947.1" y="1483.1" width="95.5" height="23.3" fill="#2a2152"/><rect x="993.4" y="1483.1" width="3.0" height="23.3" fill="#140c46"/><rect x="1048.6" y="1483.1" width="95.5" height="23.3" fill="#2a2152"/><rect x="1094.9" y="1483.1" width="3.0" height="23.3" fill="#140c46"/><rect x="1150.2" y="1483.1" width="95.5" height="23.3" fill="#2a2152"/><rect x="1196.4" y="1483.1" width="3.0" height="23.3" fill="#140c46"/><rect x="1257.7" y="1483.1" width="95.5" height="23.3" fill="#2a2152"/><rect x="1304.0" y="1483.1" width="3.0" height="23.3" fill="#140c46"/><rect x="1359.2" y="1483.1" width="95.5" height="23.3" fill="#2a2152"/><rect x="1405.5" y="1483.1" width="3.0" height="23.3" fill="#140c46"/><rect x="1460.7" y="1483.1" width="95.5" height="23.3" fill="#2a2152"/><rect x="1507.0" y="1483.1" width="3.0" height="23.3" fill="#140c46"/><rect x="1562.3" y="1483.1" width="95.5" height="23.3" fill="#2a2152"/><rect x="1608.5" y="1483.1" width="3.0" height="23.3" fill="#140c46"/><rect x="1669.8" y="1483.1" width="95.5" height="23.3" fill="#2a2152"/><rect x="1716.1" y="1483.1" width="3.0" height="23.3" fill="#140c46"/><rect x="1771.3" y="1483.1" width="95.5" height="23.3" fill="#2a2152"/><rect x="1817.6" y="1483.1" width="3.0" height="23.3" fill="#140c46"/><rect x="1872.8" y="1483.1" width="95.5" height="23.3" fill="#2a2152"/><rect x="1919.1" y="1483.1" width="3.0" height="23.3" fill="#140c46"/><rect x="1974.4" y="1483.1" width="95.5" height="23.3" fill="#2a2152"/><rect x="2020.6" y="1483.1" width="3.0" height="23.3" fill="#140c46"/><rect x="2081.9" y="1483.1" width="95.5" height="23.3" fill="#2a2152"/><rect x="2128.2" y="1483.1" width="3.0" height="23.3" fill="#140c46"/><rect x="2183.4" y="1483.1" width="95.5" height="23.3" fill="#2a2152"/><rect x="2229.7" y="1483.1" width="3.0" height="23.3" fill="#140c46"/><rect x="2284.9" y="1483.1" width="95.5" height="23.3" fill="#2a2152"/><rect x="2331.2" y="1483.1" width="3.0" height="23.3" fill="#140c46"/><rect x="2386.5" y="1483.1" width="95.5" height="23.3" fill="#2a2152"/><rect x="2432.7" y="1483.1" width="3.0" height="23.3" fill="#140c46"/><rect x="2494.0" y="1483.1" width="95.5" height="23.3" fill="#2a2152"/><rect x="2540.3" y="1483.1" width="3.0" height="23.3" fill="#140c46"/><rect x="2595.5" y="1483.1" width="95.5" height="23.3" fill="#2a2152"/><rect x="2641.8" y="1483.1" width="3.0" height="23.3" fill="#140c46"/><rect x="2697.0" y="1483.1" width="95.5" height="23.3" fill="#2a2152"/><rect x="2743.3" y="1483.1" width="3.0" height="23.3" fill="#140c46"/><rect x="2798.6" y="1483.1" width="95.5" height="23.3" fill="#2a2152"/><rect x="2844.8" y="1483.1" width="3.0" height="23.3" fill="#140c46"/><rect x="848.0" y="1509.9" width="93.1" height="23.3" fill="#171049"/><rect x="891.9" y="1509.9" width="3.0" height="23.3" fill="#100843"/><rect x="947.1" y="1509.9" width="95.5" height="23.3" fill="#171049"/><rect x="993.4" y="1509.9" width="3.0" height="23.3" fill="#100843"/><rect x="1048.6" y="1509.9" width="95.5" height="23.3" fill="#171049"/><rect x="1094.9" y="1509.9" width="3.0" height="23.3" fill="#100843"/><rect x="1150.2" y="1509.9" width="95.5" height="23.3" fill="#171049"/><rect x="1196.4" y="1509.9" width="3.0" height="23.3" fill="#100843"/><rect x="1257.7" y="1509.9" width="95.5" height="23.3" fill="#171049"/><rect x="1304.0" y="1509.9" width="3.0" height="23.3" fill="#100843"/><rect x="1359.2" y="1509.9" width="95.5" height="23.3" fill="#171049"/><rect x="1405.5" y="1509.9" width="3.0" height="23.3" fill="#100843"/><rect x="1460.7" y="1509.9" width="95.5" height="23.3" fill="#171049"/><rect x="1507.0" y="1509.9" width="3.0" height="23.3" fill="#100843"/><rect x="1562.3" y="1509.9" width="95.5" height="23.3" fill="#171049"/><rect x="1608.5" y="1509.9" width="3.0" height="23.3" fill="#100843"/><rect x="1669.8" y="1509.9" width="95.5" height="23.3" fill="#171049"/><rect x="1716.1" y="1509.9" width="3.0" height="23.3" fill="#100843"/><rect x="1771.3" y="1509.9" width="95.5" height="23.3" fill="#171049"/><rect x="1817.6" y="1509.9" width="3.0" height="23.3" fill="#100843"/><rect x="1872.8" y="1509.9" width="95.5" height="23.3" fill="#171049"/><rect x="1919.1" y="1509.9" width="3.0" height="23.3" fill="#100843"/><rect x="1974.4" y="1509.9" width="95.5" height="23.3" fill="#171049"/><rect x="2020.6" y="1509.9" width="3.0" height="23.3" fill="#100843"/><rect x="2081.9" y="1509.9" width="95.5" height="23.3" fill="#171049"/><rect x="2128.2" y="1509.9" width="3.0" height="23.3" fill="#100843"/><rect x="2183.4" y="1509.9" width="95.5" height="23.3" fill="#171049"/><rect x="2229.7" y="1509.9" width="3.0" height="23.3" fill="#100843"/><rect x="2284.9" y="1509.9" width="95.5" height="23.3" fill="#171049"/><rect x="2331.2" y="1509.9" width="3.0" height="23.3" fill="#100843"/><rect x="2386.5" y="1509.9" width="95.5" height="23.3" fill="#171049"/><rect x="2432.7" y="1509.9" width="3.0" height="23.3" fill="#100843"/><rect x="2494.0" y="1509.9" width="95.5" height="23.3" fill="#171049"/><rect x="2540.3" y="1509.9" width="3.0" height="23.3" fill="#100843"/><rect x="2595.5" y="1509.9" width="95.5" height="23.3" fill="#171049"/><rect x="2641.8" y="1509.9" width="3.0" height="23.3" fill="#100843"/><rect x="2697.0" y="1509.9" width="95.5" height="23.3" fill="#171049"/><rect x="2743.3" y="1509.9" width="3.0" height="23.3" fill="#100843"/><rect x="2798.6" y="1509.9" width="95.5" height="23.3" fill="#171049"/><rect x="2844.8" y="1509.9" width="3.0" height="23.3" fill="#100843"/><rect x="848.0" y="1536.7" width="93.1" height="13.0" fill="#2a2152"/><rect x="891.9" y="1536.7" width="3.0" height="13.0" fill="#140c46"/><rect x="947.1" y="1536.7" width="95.5" height="13.0" fill="#2a2152"/><rect x="993.4" y="1536.7" width="3.0" height="13.0" fill="#140c46"/><rect x="1048.6" y="1536.7" width="95.5" height="13.0" fill="#2a2152"/><rect x="1094.9" y="1536.7" width="3.0" height="13.0" fill="#140c46"/><rect x="1150.2" y="1536.7" width="95.5" height="13.0" fill="#2a2152"/><rect x="1196.4" y="1536.7" width="3.0" height="13.0" fill="#140c46"/><rect x="1257.7" y="1536.7" width="95.5" height="13.0" fill="#2a2152"/><rect x="1304.0" y="1536.7" width="3.0" height="13.0" fill="#140c46"/><rect x="1359.2" y="1536.7" width="95.5" height="13.0" fill="#2a2152"/><rect x="1405.5" y="1536.7" width="3.0" height="13.0" fill="#140c46"/><rect x="1460.7" y="1536.7" width="95.5" height="13.0" fill="#2a2152"/><rect x="1507.0" y="1536.7" width="3.0" height="13.0" fill="#140c46"/><rect x="1562.3" y="1536.7" width="95.5" height="13.0" fill="#2a2152"/><rect x="1608.5" y="1536.7" width="3.0" height="13.0" fill="#140c46"/><rect x="1669.8" y="1536.7" width="95.5" height="13.0" fill="#2a2152"/><rect x="1716.1" y="1536.7" width="3.0" height="13.0" fill="#140c46"/><rect x="1771.3" y="1536.7" width="95.5" height="13.0" fill="#2a2152"/><rect x="1817.6" y="1536.7" width="3.0" height="13.0" fill="#140c46"/><rect x="1872.8" y="1536.7" width="95.5" height="13.0" fill="#2a2152"/><rect x="1919.1" y="1536.7" width="3.0" height="13.0" fill="#140c46"/><rect x="1974.4" y="1536.7" width="95.5" height="13.0" fill="#2a2152"/><rect x="2020.6" y="1536.7" width="3.0" height="13.0" fill="#140c46"/><rect x="2081.9" y="1536.7" width="95.5" height="13.0" fill="#2a2152"/><rect x="2128.2" y="1536.7" width="3.0" height="13.0" fill="#140c46"/><rect x="2183.4" y="1536.7" width="95.5" height="13.0" fill="#2a2152"/><rect x="2229.7" y="1536.7" width="3.0" height="13.0" fill="#140c46"/><rect x="2284.9" y="1536.7" width="95.5" height="13.0" fill="#2a2152"/><rect x="2331.2" y="1536.7" width="3.0" height="13.0" fill="#140c46"/><rect x="2386.5" y="1536.7" width="95.5" height="13.0" fill="#2a2152"/><rect x="2432.7" y="1536.7" width="3.0" height="13.0" fill="#140c46"/><rect x="2494.0" y="1536.7" width="95.5" height="13.0" fill="#2a2152"/><rect x="2540.3" y="1536.7" width="3.0" height="13.0" fill="#140c46"/><rect x="2595.5" y="1536.7" width="95.5" height="13.0" fill="#2a2152"/><rect x="2641.8" y="1536.7" width="3.0" height="13.0" fill="#140c46"/><rect x="2697.0" y="1536.7" width="95.5" height="13.0" fill="#2a2152"/><rect x="2743.3" y="1536.7" width="3.0" height="13.0" fill="#140c46"/><rect x="2798.6" y="1536.7" width="95.5" height="13.0" fill="#2a2152"/><rect x="2844.8" y="1536.7" width="3.0" height="13.0" fill="#140c46"/></svg><svg style="position:absolute;left:0px;top:0px;overflow:visible;" width="2940" height="1732" viewBox="0 0 2940 1732"><rect x="947.1" y="1000.7" width="46.3" height="23.3" rx="2" fill="#e8d300" stroke="#f5e31a" stroke-width="1"/><rect x="950.9" y="1004.7" width="2.4" height="15.3" fill="#1a1040"/><rect x="987.2" y="1004.7" width="2.4" height="15.3" fill="#1a1040"/><rect x="1150.2" y="1027.5" width="46.3" height="23.3" rx="2" fill="#e8d300" stroke="#f5e31a" stroke-width="1"/><rect x="1154.0" y="1031.5" width="2.4" height="15.3" fill="#1a1040"/><rect x="1190.2" y="1031.5" width="2.4" height="15.3" fill="#1a1040"/><rect x="848.0" y="1081.1" width="93.1" height="23.3" rx="2" fill="#e8d300" stroke="#f5e31a" stroke-width="1"/><rect x="851.8" y="1085.1" width="2.4" height="15.3" fill="#1a1040"/><rect x="934.9" y="1085.1" width="2.4" height="15.3" fill="#1a1040"/><rect x="947.1" y="1081.1" width="46.3" height="23.3" rx="2" fill="#e8d300" stroke="#f5e31a" stroke-width="1"/><rect x="950.9" y="1085.1" width="2.4" height="15.3" fill="#1a1040"/><rect x="987.2" y="1085.1" width="2.4" height="15.3" fill="#1a1040"/><rect x="996.4" y="1081.1" width="46.3" height="23.3" rx="2" fill="#e8d300" stroke="#f5e31a" stroke-width="1"/><rect x="1000.2" y="1085.1" width="2.4" height="15.3" fill="#1a1040"/><rect x="1036.4" y="1085.1" width="2.4" height="15.3" fill="#1a1040"/><rect x="1048.6" y="1081.1" width="95.5" height="23.3" rx="2" fill="#e8d300" stroke="#f5e31a" stroke-width="1"/><rect x="1052.4" y="1085.1" width="2.4" height="15.3" fill="#1a1040"/><rect x="1138.0" y="1085.1" width="2.4" height="15.3" fill="#1a1040"/><rect x="1150.2" y="1081.1" width="46.3" height="23.3" rx="2" fill="#e8d300" stroke="#f5e31a" stroke-width="1"/><rect x="1154.0" y="1085.1" width="2.4" height="15.3" fill="#1a1040"/><rect x="1190.2" y="1085.1" width="2.4" height="15.3" fill="#1a1040"/><rect x="1199.4" y="1081.1" width="46.3" height="23.3" rx="2" fill="#e8d300" stroke="#f5e31a" stroke-width="1"/><rect x="1203.2" y="1085.1" width="2.4" height="15.3" fill="#1a1040"/><rect x="1239.5" y="1085.1" width="2.4" height="15.3" fill="#1a1040"/><rect x="848.0" y="1215.1" width="93.1" height="23.3" rx="2" fill="#e8d300" stroke="#f5e31a" stroke-width="1"/><rect x="851.8" y="1219.1" width="2.4" height="15.3" fill="#1a1040"/><rect x="934.9" y="1219.1" width="2.4" height="15.3" fill="#1a1040"/><rect x="947.1" y="1215.1" width="46.3" height="23.3" rx="2" fill="#e8d300" stroke="#f5e31a" stroke-width="1"/><rect x="950.9" y="1219.1" width="2.4" height="15.3" fill="#1a1040"/><rect x="987.2" y="1219.1" width="2.4" height="15.3" fill="#1a1040"/><rect x="996.4" y="1215.1" width="46.3" height="23.3" rx="2" fill="#e8d300" stroke="#f5e31a" stroke-width="1"/><rect x="1000.2" y="1219.1" width="2.4" height="15.3" fill="#1a1040"/><rect x="1036.4" y="1219.1" width="2.4" height="15.3" fill="#1a1040"/><rect x="1048.6" y="1215.1" width="95.5" height="23.3" rx="2" fill="#e8d300" stroke="#f5e31a" stroke-width="1"/><rect x="1052.4" y="1219.1" width="2.4" height="15.3" fill="#1a1040"/><rect x="1138.0" y="1219.1" width="2.4" height="15.3" fill="#1a1040"/><rect x="1150.2" y="1215.1" width="46.3" height="23.3" rx="2" fill="#e8d300" stroke="#f5e31a" stroke-width="1"/><rect x="1154.0" y="1219.1" width="2.4" height="15.3" fill="#1a1040"/><rect x="1190.2" y="1219.1" width="2.4" height="15.3" fill="#1a1040"/><rect x="1199.4" y="1215.1" width="46.3" height="23.3" rx="2" fill="#e8d300" stroke="#f5e31a" stroke-width="1"/><rect x="1203.2" y="1219.1" width="2.4" height="15.3" fill="#1a1040"/><rect x="1239.5" y="1219.1" width="2.4" height="15.3" fill="#1a1040"/><rect x="848.0" y="1322.3" width="93.1" height="23.3" rx="2" fill="#e8d300" stroke="#f5e31a" stroke-width="1"/><rect x="851.8" y="1326.3" width="2.4" height="15.3" fill="#1a1040"/><rect x="934.9" y="1326.3" width="2.4" height="15.3" fill="#1a1040"/><rect x="996.4" y="1322.3" width="46.3" height="23.3" rx="2" fill="#e8d300" stroke="#f5e31a" stroke-width="1"/><rect x="1000.2" y="1326.3" width="2.4" height="15.3" fill="#1a1040"/><rect x="1036.4" y="1326.3" width="2.4" height="15.3" fill="#1a1040"/><rect x="1048.6" y="1322.3" width="95.5" height="23.3" rx="2" fill="#e8d300" stroke="#f5e31a" stroke-width="1"/><rect x="1052.4" y="1326.3" width="2.4" height="15.3" fill="#1a1040"/><rect x="1138.0" y="1326.3" width="2.4" height="15.3" fill="#1a1040"/><rect x="1199.4" y="1322.3" width="46.3" height="23.3" rx="2" fill="#e8d300" stroke="#f5e31a" stroke-width="1"/><rect x="1203.2" y="1326.3" width="2.4" height="15.3" fill="#1a1040"/><rect x="1239.5" y="1326.3" width="2.4" height="15.3" fill="#1a1040"/><rect x="1359.2" y="1027.5" width="46.3" height="23.3" rx="2" fill="#e8d300" stroke="#f5e31a" stroke-width="1"/><rect x="1363.0" y="1031.5" width="2.4" height="15.3" fill="#1a1040"/><rect x="1399.3" y="1031.5" width="2.4" height="15.3" fill="#1a1040"/><rect x="1257.7" y="1081.1" width="95.5" height="23.3" rx="2" fill="#e8d300" stroke="#f5e31a" stroke-width="1"/><rect x="1261.5" y="1085.1" width="2.4" height="15.3" fill="#1a1040"/><rect x="1347.0" y="1085.1" width="2.4" height="15.3" fill="#1a1040"/><rect x="1359.2" y="1081.1" width="46.3" height="23.3" rx="2" fill="#e8d300" stroke="#f5e31a" stroke-width="1"/><rect x="1363.0" y="1085.1" width="2.4" height="15.3" fill="#1a1040"/><rect x="1399.3" y="1085.1" width="2.4" height="15.3" fill="#1a1040"/><rect x="1408.5" y="1081.1" width="147.8" height="23.3" rx="2" fill="#e8d300" stroke="#f5e31a" stroke-width="1"/><rect x="1412.3" y="1085.1" width="2.4" height="15.3" fill="#1a1040"/><rect x="1550.1" y="1085.1" width="2.4" height="15.3" fill="#1a1040"/><rect x="1257.7" y="1215.1" width="95.5" height="23.3" rx="2" fill="#e8d300" stroke="#f5e31a" stroke-width="1"/><rect x="1261.5" y="1219.1" width="2.4" height="15.3" fill="#1a1040"/><rect x="1347.0" y="1219.1" width="2.4" height="15.3" fill="#1a1040"/><rect x="1359.2" y="1215.1" width="46.3" height="23.3" rx="2" fill="#e8d300" stroke="#f5e31a" stroke-width="1"/><rect x="1363.0" y="1219.1" width="2.4" height="15.3" fill="#1a1040"/><rect x="1399.3" y="1219.1" width="2.4" height="15.3" fill="#1a1040"/><rect x="1408.5" y="1215.1" width="147.8" height="23.3" rx="2" fill="#e8d300" stroke="#f5e31a" stroke-width="1"/><rect x="1412.3" y="1219.1" width="2.4" height="15.3" fill="#1a1040"/><rect x="1550.1" y="1219.1" width="2.4" height="15.3" fill="#1a1040"/><rect x="1562.3" y="1215.1" width="95.5" height="23.3" rx="2" fill="#e8d300" stroke="#f5e31a" stroke-width="1"/><rect x="1566.1" y="1219.1" width="2.4" height="15.3" fill="#1a1040"/><rect x="1651.6" y="1219.1" width="2.4" height="15.3" fill="#1a1040"/><rect x="1257.7" y="1322.3" width="95.5" height="23.3" rx="2" fill="#e8d300" stroke="#f5e31a" stroke-width="1"/><rect x="1261.5" y="1326.3" width="2.4" height="15.3" fill="#1a1040"/><rect x="1347.0" y="1326.3" width="2.4" height="15.3" fill="#1a1040"/><rect x="1408.5" y="1322.3" width="147.8" height="23.3" rx="2" fill="#e8d300" stroke="#f5e31a" stroke-width="1"/><rect x="1412.3" y="1326.3" width="2.4" height="15.3" fill="#1a1040"/><rect x="1550.1" y="1326.3" width="2.4" height="15.3" fill="#1a1040"/><rect x="1562.3" y="1322.3" width="95.5" height="23.3" rx="2" fill="#e8d300" stroke="#f5e31a" stroke-width="1"/><rect x="1566.1" y="1326.3" width="2.4" height="15.3" fill="#1a1040"/><rect x="1651.6" y="1326.3" width="2.4" height="15.3" fill="#1a1040"/><rect x="1562.3" y="1402.7" width="95.5" height="23.3" rx="2" fill="#e8d300" stroke="#f5e31a" stroke-width="1"/><rect x="1566.1" y="1406.7" width="2.4" height="15.3" fill="#1a1040"/><rect x="1651.6" y="1406.7" width="2.4" height="15.3" fill="#1a1040"/><rect x="1771.3" y="1000.7" width="46.3" height="23.3" rx="2" fill="#e8d300" stroke="#f5e31a" stroke-width="1"/><rect x="1775.1" y="1004.7" width="2.4" height="15.3" fill="#1a1040"/><rect x="1811.4" y="1004.7" width="2.4" height="15.3" fill="#1a1040"/><rect x="1974.4" y="1027.5" width="46.3" height="23.3" rx="2" fill="#e8d300" stroke="#f5e31a" stroke-width="1"/><rect x="1978.2" y="1031.5" width="2.4" height="15.3" fill="#1a1040"/><rect x="2014.4" y="1031.5" width="2.4" height="15.3" fill="#1a1040"/><rect x="1669.8" y="1081.1" width="95.5" height="23.3" rx="2" fill="#e8d300" stroke="#f5e31a" stroke-width="1"/><rect x="1673.6" y="1085.1" width="2.4" height="15.3" fill="#1a1040"/><rect x="1759.1" y="1085.1" width="2.4" height="15.3" fill="#1a1040"/><rect x="1771.3" y="1081.1" width="46.3" height="23.3" rx="2" fill="#e8d300" stroke="#f5e31a" stroke-width="1"/><rect x="1775.1" y="1085.1" width="2.4" height="15.3" fill="#1a1040"/><rect x="1811.4" y="1085.1" width="2.4" height="15.3" fill="#1a1040"/><rect x="1820.6" y="1081.1" width="46.3" height="23.3" rx="2" fill="#e8d300" stroke="#f5e31a" stroke-width="1"/><rect x="1824.4" y="1085.1" width="2.4" height="15.3" fill="#1a1040"/><rect x="1860.6" y="1085.1" width="2.4" height="15.3" fill="#1a1040"/><rect x="1872.8" y="1081.1" width="95.5" height="23.3" rx="2" fill="#e8d300" stroke="#f5e31a" stroke-width="1"/><rect x="1876.6" y="1085.1" width="2.4" height="15.3" fill="#1a1040"/><rect x="1962.2" y="1085.1" width="2.4" height="15.3" fill="#1a1040"/><rect x="1974.4" y="1081.1" width="46.3" height="23.3" rx="2" fill="#e8d300" stroke="#f5e31a" stroke-width="1"/><rect x="1978.2" y="1085.1" width="2.4" height="15.3" fill="#1a1040"/><rect x="2014.4" y="1085.1" width="2.4" height="15.3" fill="#1a1040"/><rect x="2023.6" y="1081.1" width="46.3" height="23.3" rx="2" fill="#e8d300" stroke="#f5e31a" stroke-width="1"/><rect x="2027.4" y="1085.1" width="2.4" height="15.3" fill="#1a1040"/><rect x="2063.7" y="1085.1" width="2.4" height="15.3" fill="#1a1040"/><rect x="1669.8" y="1215.1" width="95.5" height="23.3" rx="2" fill="#e8d300" stroke="#f5e31a" stroke-width="1"/><rect x="1673.6" y="1219.1" width="2.4" height="15.3" fill="#1a1040"/><rect x="1759.1" y="1219.1" width="2.4" height="15.3" fill="#1a1040"/><rect x="1771.3" y="1215.1" width="46.3" height="23.3" rx="2" fill="#e8d300" stroke="#f5e31a" stroke-width="1"/><rect x="1775.1" y="1219.1" width="2.4" height="15.3" fill="#1a1040"/><rect x="1811.4" y="1219.1" width="2.4" height="15.3" fill="#1a1040"/><rect x="1820.6" y="1215.1" width="46.3" height="23.3" rx="2" fill="#e8d300" stroke="#f5e31a" stroke-width="1"/><rect x="1824.4" y="1219.1" width="2.4" height="15.3" fill="#1a1040"/><rect x="1860.6" y="1219.1" width="2.4" height="15.3" fill="#1a1040"/><rect x="1872.8" y="1215.1" width="95.5" height="23.3" rx="2" fill="#e8d300" stroke="#f5e31a" stroke-width="1"/><rect x="1876.6" y="1219.1" width="2.4" height="15.3" fill="#1a1040"/><rect x="1962.2" y="1219.1" width="2.4" height="15.3" fill="#1a1040"/><rect x="1974.4" y="1215.1" width="46.3" height="23.3" rx="2" fill="#e8d300" stroke="#f5e31a" stroke-width="1"/><rect x="1978.2" y="1219.1" width="2.4" height="15.3" fill="#1a1040"/><rect x="2014.4" y="1219.1" width="2.4" height="15.3" fill="#1a1040"/><rect x="2023.6" y="1215.1" width="46.3" height="23.3" rx="2" fill="#e8d300" stroke="#f5e31a" stroke-width="1"/><rect x="2027.4" y="1219.1" width="2.4" height="15.3" fill="#1a1040"/><rect x="2063.7" y="1219.1" width="2.4" height="15.3" fill="#1a1040"/><rect x="1669.8" y="1322.3" width="95.5" height="23.3" rx="2" fill="#e8d300" stroke="#f5e31a" stroke-width="1"/><rect x="1673.6" y="1326.3" width="2.4" height="15.3" fill="#1a1040"/><rect x="1759.1" y="1326.3" width="2.4" height="15.3" fill="#1a1040"/><rect x="1820.6" y="1322.3" width="46.3" height="23.3" rx="2" fill="#e8d300" stroke="#f5e31a" stroke-width="1"/><rect x="1824.4" y="1326.3" width="2.4" height="15.3" fill="#1a1040"/><rect x="1860.6" y="1326.3" width="2.4" height="15.3" fill="#1a1040"/><rect x="1872.8" y="1322.3" width="95.5" height="23.3" rx="2" fill="#e8d300" stroke="#f5e31a" stroke-width="1"/><rect x="1876.6" y="1326.3" width="2.4" height="15.3" fill="#1a1040"/><rect x="1962.2" y="1326.3" width="2.4" height="15.3" fill="#1a1040"/><rect x="2023.6" y="1322.3" width="46.3" height="23.3" rx="2" fill="#e8d300" stroke="#f5e31a" stroke-width="1"/><rect x="2027.4" y="1326.3" width="2.4" height="15.3" fill="#1a1040"/><rect x="2063.7" y="1326.3" width="2.4" height="15.3" fill="#1a1040"/><rect x="2183.4" y="1027.5" width="46.3" height="23.3" rx="2" fill="#e8d300" stroke="#f5e31a" stroke-width="1"/><rect x="2187.2" y="1031.5" width="2.4" height="15.3" fill="#1a1040"/><rect x="2223.5" y="1031.5" width="2.4" height="15.3" fill="#1a1040"/><rect x="2081.9" y="1081.1" width="95.5" height="23.3" rx="2" fill="#e8d300" stroke="#f5e31a" stroke-width="1"/><rect x="2085.7" y="1085.1" width="2.4" height="15.3" fill="#1a1040"/><rect x="2171.2" y="1085.1" width="2.4" height="15.3" fill="#1a1040"/><rect x="2183.4" y="1081.1" width="46.3" height="23.3" rx="2" fill="#e8d300" stroke="#f5e31a" stroke-width="1"/><rect x="2187.2" y="1085.1" width="2.4" height="15.3" fill="#1a1040"/><rect x="2223.5" y="1085.1" width="2.4" height="15.3" fill="#1a1040"/><rect x="2232.7" y="1081.1" width="147.8" height="23.3" rx="2" fill="#e8d300" stroke="#f5e31a" stroke-width="1"/><rect x="2236.5" y="1085.1" width="2.4" height="15.3" fill="#1a1040"/><rect x="2374.3" y="1085.1" width="2.4" height="15.3" fill="#1a1040"/><rect x="2081.9" y="1215.1" width="95.5" height="23.3" rx="2" fill="#e8d300" stroke="#f5e31a" stroke-width="1"/><rect x="2085.7" y="1219.1" width="2.4" height="15.3" fill="#1a1040"/><rect x="2171.2" y="1219.1" width="2.4" height="15.3" fill="#1a1040"/><rect x="2183.4" y="1215.1" width="46.3" height="23.3" rx="2" fill="#e8d300" stroke="#f5e31a" stroke-width="1"/><rect x="2187.2" y="1219.1" width="2.4" height="15.3" fill="#1a1040"/><rect x="2223.5" y="1219.1" width="2.4" height="15.3" fill="#1a1040"/><rect x="2232.7" y="1215.1" width="147.8" height="23.3" rx="2" fill="#e8d300" stroke="#f5e31a" stroke-width="1"/><rect x="2236.5" y="1219.1" width="2.4" height="15.3" fill="#1a1040"/><rect x="2374.3" y="1219.1" width="2.4" height="15.3" fill="#1a1040"/><rect x="2386.5" y="1215.1" width="95.5" height="23.3" rx="2" fill="#e8d300" stroke="#f5e31a" stroke-width="1"/><rect x="2390.3" y="1219.1" width="2.4" height="15.3" fill="#1a1040"/><rect x="2475.8" y="1219.1" width="2.4" height="15.3" fill="#1a1040"/><rect x="2081.9" y="1322.3" width="95.5" height="23.3" rx="2" fill="#e8d300" stroke="#f5e31a" stroke-width="1"/><rect x="2085.7" y="1326.3" width="2.4" height="15.3" fill="#1a1040"/><rect x="2171.2" y="1326.3" width="2.4" height="15.3" fill="#1a1040"/><rect x="2232.7" y="1322.3" width="147.8" height="23.3" rx="2" fill="#e8d300" stroke="#f5e31a" stroke-width="1"/><rect x="2236.5" y="1326.3" width="2.4" height="15.3" fill="#1a1040"/><rect x="2374.3" y="1326.3" width="2.4" height="15.3" fill="#1a1040"/><rect x="2386.5" y="1322.3" width="95.5" height="23.3" rx="2" fill="#e8d300" stroke="#f5e31a" stroke-width="1"/><rect x="2390.3" y="1326.3" width="2.4" height="15.3" fill="#1a1040"/><rect x="2475.8" y="1326.3" width="2.4" height="15.3" fill="#1a1040"/><rect x="2386.5" y="1402.7" width="95.5" height="23.3" rx="2" fill="#e8d300" stroke="#f5e31a" stroke-width="1"/><rect x="2390.3" y="1406.7" width="2.4" height="15.3" fill="#1a1040"/><rect x="2475.8" y="1406.7" width="2.4" height="15.3" fill="#1a1040"/><rect x="2595.5" y="1000.7" width="46.3" height="23.3" rx="2" fill="#e8d300" stroke="#f5e31a" stroke-width="1"/><rect x="2599.3" y="1004.7" width="2.4" height="15.3" fill="#1a1040"/><rect x="2635.6" y="1004.7" width="2.4" height="15.3" fill="#1a1040"/><rect x="2798.6" y="1027.5" width="46.3" height="23.3" rx="2" fill="#e8d300" stroke="#f5e31a" stroke-width="1"/><rect x="2802.4" y="1031.5" width="2.4" height="15.3" fill="#1a1040"/><rect x="2838.6" y="1031.5" width="2.4" height="15.3" fill="#1a1040"/><rect x="2494.0" y="1081.1" width="95.5" height="23.3" rx="2" fill="#e8d300" stroke="#f5e31a" stroke-width="1"/><rect x="2497.8" y="1085.1" width="2.4" height="15.3" fill="#1a1040"/><rect x="2583.3" y="1085.1" width="2.4" height="15.3" fill="#1a1040"/><rect x="2595.5" y="1081.1" width="46.3" height="23.3" rx="2" fill="#e8d300" stroke="#f5e31a" stroke-width="1"/><rect x="2599.3" y="1085.1" width="2.4" height="15.3" fill="#1a1040"/><rect x="2635.6" y="1085.1" width="2.4" height="15.3" fill="#1a1040"/><rect x="2644.8" y="1081.1" width="46.3" height="23.3" rx="2" fill="#e8d300" stroke="#f5e31a" stroke-width="1"/><rect x="2648.6" y="1085.1" width="2.4" height="15.3" fill="#1a1040"/><rect x="2684.8" y="1085.1" width="2.4" height="15.3" fill="#1a1040"/><rect x="2697.0" y="1081.1" width="95.5" height="23.3" rx="2" fill="#e8d300" stroke="#f5e31a" stroke-width="1"/><rect x="2700.8" y="1085.1" width="2.4" height="15.3" fill="#1a1040"/><rect x="2786.4" y="1085.1" width="2.4" height="15.3" fill="#1a1040"/><rect x="2798.6" y="1081.1" width="46.3" height="23.3" rx="2" fill="#e8d300" stroke="#f5e31a" stroke-width="1"/><rect x="2802.4" y="1085.1" width="2.4" height="15.3" fill="#1a1040"/><rect x="2838.6" y="1085.1" width="2.4" height="15.3" fill="#1a1040"/><rect x="2847.8" y="1081.1" width="46.3" height="23.3" rx="2" fill="#e8d300" stroke="#f5e31a" stroke-width="1"/><rect x="2851.6" y="1085.1" width="2.4" height="15.3" fill="#1a1040"/><rect x="2887.9" y="1085.1" width="2.4" height="15.3" fill="#1a1040"/><rect x="2494.0" y="1215.1" width="95.5" height="23.3" rx="2" fill="#e8d300" stroke="#f5e31a" stroke-width="1"/><rect x="2497.8" y="1219.1" width="2.4" height="15.3" fill="#1a1040"/><rect x="2583.3" y="1219.1" width="2.4" height="15.3" fill="#1a1040"/><rect x="2595.5" y="1215.1" width="46.3" height="23.3" rx="2" fill="#e8d300" stroke="#f5e31a" stroke-width="1"/><rect x="2599.3" y="1219.1" width="2.4" height="15.3" fill="#1a1040"/><rect x="2635.6" y="1219.1" width="2.4" height="15.3" fill="#1a1040"/><rect x="2644.8" y="1215.1" width="46.3" height="23.3" rx="2" fill="#e8d300" stroke="#f5e31a" stroke-width="1"/><rect x="2648.6" y="1219.1" width="2.4" height="15.3" fill="#1a1040"/><rect x="2684.8" y="1219.1" width="2.4" height="15.3" fill="#1a1040"/><rect x="2697.0" y="1215.1" width="95.5" height="23.3" rx="2" fill="#e8d300" stroke="#f5e31a" stroke-width="1"/><rect x="2700.8" y="1219.1" width="2.4" height="15.3" fill="#1a1040"/><rect x="2786.4" y="1219.1" width="2.4" height="15.3" fill="#1a1040"/><rect x="2798.6" y="1215.1" width="46.3" height="23.3" rx="2" fill="#e8d300" stroke="#f5e31a" stroke-width="1"/><rect x="2802.4" y="1219.1" width="2.4" height="15.3" fill="#1a1040"/><rect x="2838.6" y="1219.1" width="2.4" height="15.3" fill="#1a1040"/><rect x="2847.8" y="1215.1" width="46.3" height="23.3" rx="2" fill="#e8d300" stroke="#f5e31a" stroke-width="1"/><rect x="2851.6" y="1219.1" width="2.4" height="15.3" fill="#1a1040"/><rect x="2887.9" y="1219.1" width="2.4" height="15.3" fill="#1a1040"/><rect x="2494.0" y="1322.3" width="95.5" height="23.3" rx="2" fill="#e8d300" stroke="#f5e31a" stroke-width="1"/><rect x="2497.8" y="1326.3" width="2.4" height="15.3" fill="#1a1040"/><rect x="2583.3" y="1326.3" width="2.4" height="15.3" fill="#1a1040"/><rect x="2644.8" y="1322.3" width="46.3" height="23.3" rx="2" fill="#e8d300" stroke="#f5e31a" stroke-width="1"/><rect x="2648.6" y="1326.3" width="2.4" height="15.3" fill="#1a1040"/><rect x="2684.8" y="1326.3" width="2.4" height="15.3" fill="#1a1040"/><rect x="2697.0" y="1322.3" width="95.5" height="23.3" rx="2" fill="#e8d300" stroke="#f5e31a" stroke-width="1"/><rect x="2700.8" y="1326.3" width="2.4" height="15.3" fill="#1a1040"/><rect x="2786.4" y="1326.3" width="2.4" height="15.3" fill="#1a1040"/><rect x="2847.8" y="1322.3" width="46.3" height="23.3" rx="2" fill="#e8d300" stroke="#f5e31a" stroke-width="1"/><rect x="2851.6" y="1326.3" width="2.4" height="15.3" fill="#1a1040"/><rect x="2887.9" y="1326.3" width="2.4" height="15.3" fill="#1a1040"/></svg><svg style="position:absolute;left:790px;top:800px;overflow:visible;overflow:hidden;" width="40" height="746" viewBox="0 0 40 746"><rect x="0" y="0" width="40" height="746" fill="#fff"/><path d="M0,14.6 H17 Q20,14.6 20,17.6 V33.6 Q20,36.6 17,36.6 H0 Z" fill="#000"/><rect x="20" y="24.7" width="20" height="1.6" fill="#8a8a8a"/><path d="M0,68.2 H17 Q20,68.2 20,71.2 V87.2 Q20,90.2 17,90.2 H0 Z" fill="#000"/><rect x="20" y="78.3" width="20" height="1.6" fill="#8a8a8a"/><rect x="0" y="119.4" width="40" height="2" fill="#8a8a8a"/><path d="M0,148.6 H17 Q20,148.6 20,151.6 V167.6 Q20,170.6 17,170.6 H0 Z" fill="#000"/><rect x="20" y="158.7" width="20" height="1.6" fill="#8a8a8a"/><path d="M0,202.2 H17 Q20,202.2 20,205.2 V221.2 Q20,224.2 17,224.2 H0 Z" fill="#000"/><rect x="20" y="212.3" width="20" height="1.6" fill="#8a8a8a"/><path d="M0,255.8 H17 Q20,255.8 20,258.8 V274.8 Q20,277.8 17,277.8 H0 Z" fill="#000"/><rect x="20" y="265.9" width="20" height="1.6" fill="#8a8a8a"/><rect x="0" y="307.0" width="40" height="2" fill="#8a8a8a"/><path d="M0,336.2 H17 Q20,336.2 20,339.2 V355.2 Q20,358.2 17,358.2 H0 Z" fill="#000"/><rect x="20" y="346.3" width="20" height="1.6" fill="#8a8a8a"/><path d="M0,389.8 H17 Q20,389.8 20,392.8 V408.8 Q20,411.8 17,411.8 H0 Z" fill="#000"/><rect x="20" y="399.9" width="20" height="1.6" fill="#8a8a8a"/><rect x="0" y="441.0" width="40" height="2" fill="#8a8a8a"/><path d="M0,470.2 H17 Q20,470.2 20,473.2 V489.2 Q20,492.2 17,492.2 H0 Z" fill="#000"/><rect x="20" y="480.3" width="20" height="1.6" fill="#8a8a8a"/><path d="M0,523.8 H17 Q20,523.8 20,526.8 V542.8 Q20,545.8 17,545.8 H0 Z" fill="#000"/><rect x="20" y="533.9" width="20" height="1.6" fill="#8a8a8a"/><path d="M0,577.4 H17 Q20,577.4 20,580.4 V596.4 Q20,599.4 17,599.4 H0 Z" fill="#000"/><rect x="20" y="587.5" width="20" height="1.6" fill="#8a8a8a"/><rect x="0" y="628.6" width="40" height="2" fill="#8a8a8a"/><path d="M0,657.8 H17 Q20,657.8 20,660.8 V676.8 Q20,679.8 17,679.8 H0 Z" fill="#000"/><rect x="20" y="667.9" width="20" height="1.6" fill="#8a8a8a"/><path d="M0,711.4 H17 Q20,711.4 20,714.4 V730.4 Q20,733.4 17,733.4 H0 Z" fill="#000"/><rect x="20" y="721.5" width="20" height="1.6" fill="#8a8a8a"/><rect x="0" y="762.6" width="40" height="2" fill="#8a8a8a"/><text x="34" y="109.7" font-family="Liberation Sans" font-weight="700" font-size="17" text-anchor="end" fill="#111">C4</text><text x="34" y="431.3" font-family="Liberation Sans" font-weight="700" font-size="17" text-anchor="end" fill="#111">C3</text><text x="34" y="752.9" font-family="Liberation Sans" font-weight="700" font-size="17" text-anchor="end" fill="#111">C2</text></svg><div style="position:absolute;left:841.5px;top:1558px;width:1648.8px;height:98px;background:#e8d300;border-radius:7px;"></div><div style="position:absolute;left:850px;top:1586px;width:4px;height:44px;background:#0d0340;border-radius:4px 0 4px 0px;"></div><div style="position:absolute;left:2478px;top:1586px;width:4.4px;height:44px;background:#0d0340;border-radius:4px 0 4px 0px;"></div><div style="position:absolute;left:2490px;top:1664px;width:414px;height:63.6px;background:#e8d300;border-radius:8px 0 0 0px;"></div><div style="position:absolute;left:2498.4px;top:1691.4px;width:4px;height:44px;background:#0d0340;border-radius:4px 0 4px 0px;"></div><div style="position:absolute;left:862px;top:1701.14px;font-size:27px;line-height:27px;height:27px;color:#eceaf2;font-weight:400;white-space:nowrap;transform:scaleX(1.0115);transform-origin:left 0;">Enable 'Pencil Mode' and click in this area to assign this instrument to play notes.</div><div style="position:absolute;left:2914px;top:272px;width:12px;height:1424px;background:#9a96b0;border-radius:6px;"></div><div style="position:absolute;left:2888px;top:1104px;width:14px;height:166px;background:#ffffff;border-radius:7px;"></div><div style="position:absolute;left:846px;top:183px;width:2.2px;height:1545px;background:#f4f2fa;border-radius:0px;"></div><div style="position:absolute;left:848.2px;top:1558px;width:2px;height:98px;background:rgba(0,0,0,0.4);border-radius:0px;"></div><div style="position:absolute;left:842px;top:1728px;width:2098px;height:4px;background:#0d0340;border-radius:0px;"></div><div style="position:absolute;left:0;top:0;width:2940px;height:1740px;box-sizing:border-box;border:2px solid;border-color:#655d88 #3e3563 transparent #3a3750;border-radius:20px 20px 0 0;"></div><div style="position:absolute;left:20px;top:0px;width:150px;height:2px;background:#65627a;border-radius:0px;"></div></div></body></html>
